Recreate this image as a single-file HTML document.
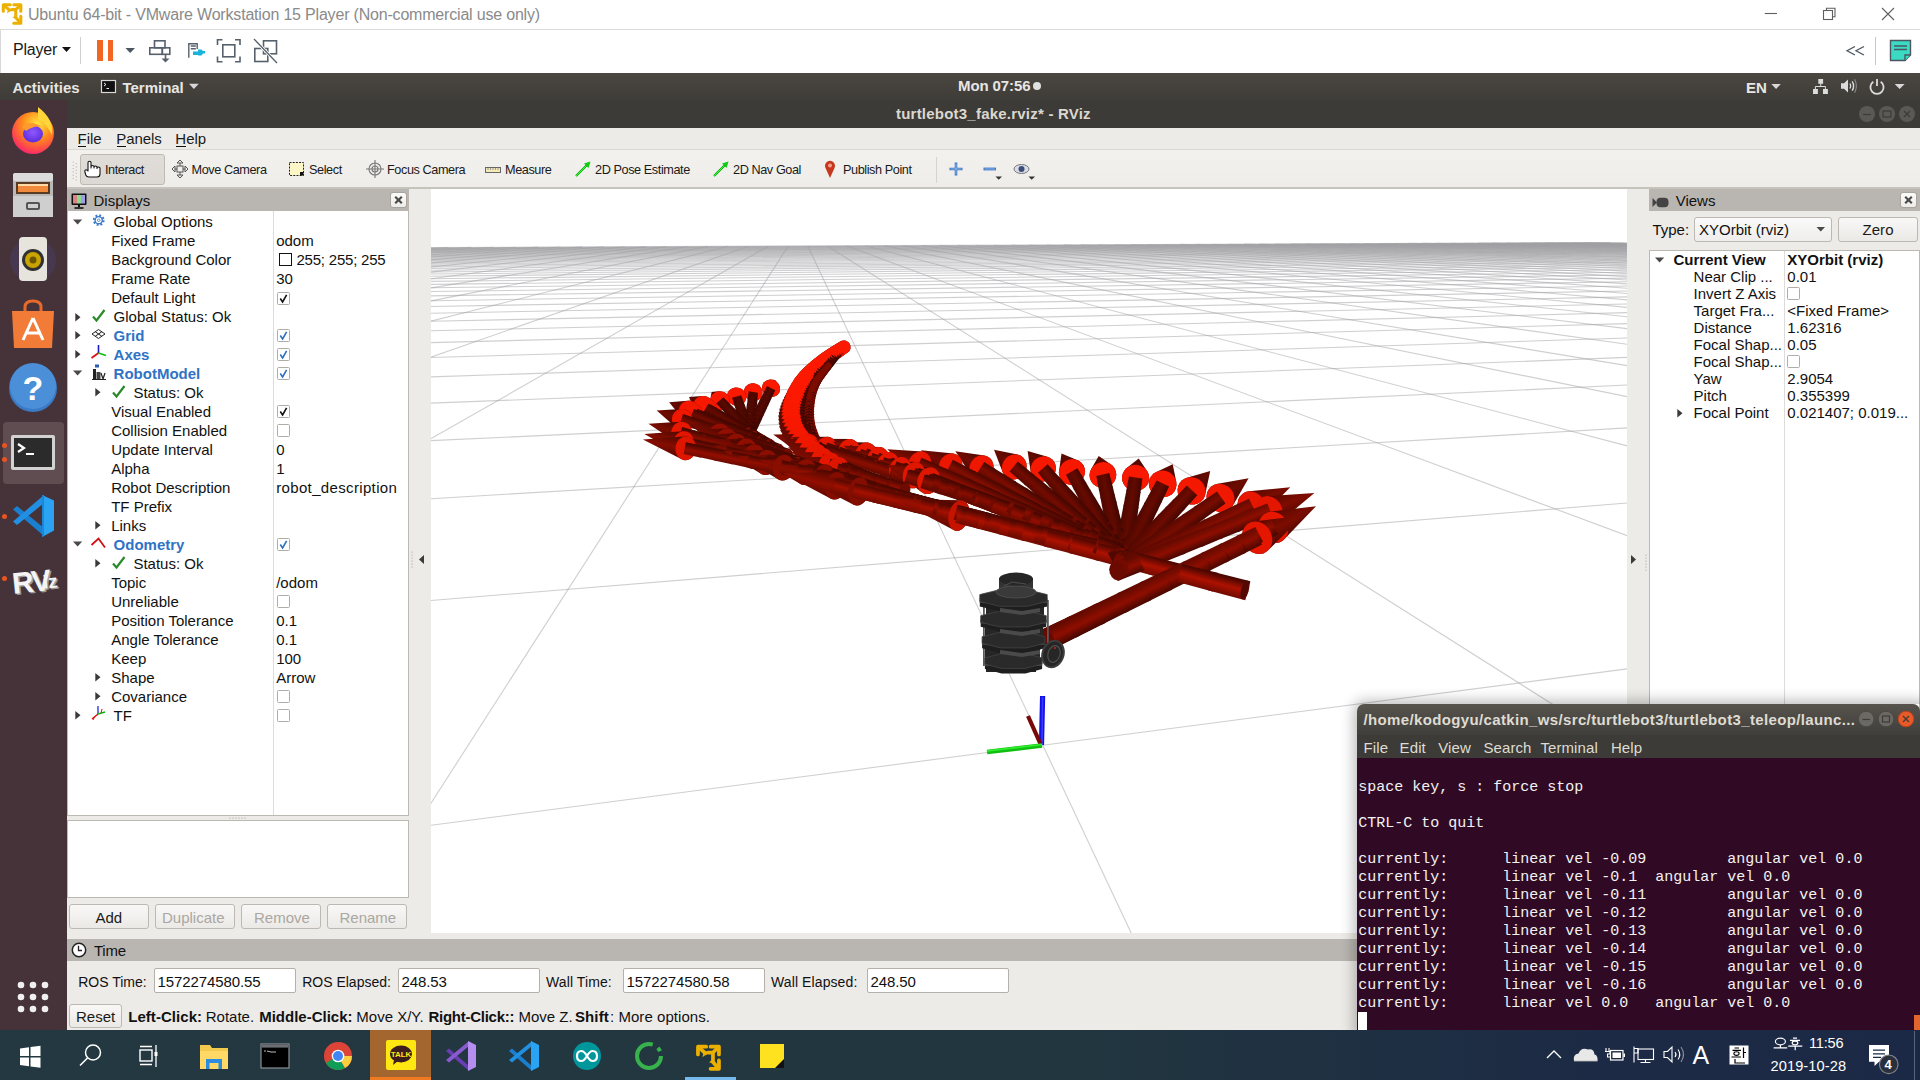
<!DOCTYPE html><html><head><meta charset='utf-8'><style>
*{margin:0;padding:0;box-sizing:border-box}
html,body{width:1920px;height:1080px;overflow:hidden;background:#fff;position:relative;font-family:'Liberation Sans',sans-serif}
.t{position:absolute;white-space:pre;line-height:1}
.r{position:absolute}
svg{position:absolute;overflow:visible}
</style></head><body>
<div class="r" style="left:0px;top:0px;width:1920px;height:30px;background:#ffffff;"></div>
<div class="r" style="left:0px;top:29px;width:1920px;height:1px;background:#dadada;"></div>
<div class="r" style="left:0px;top:30px;width:1920px;height:43px;background:#ffffff;"></div>
<div class="r" style="left:0px;top:30px;width:1px;height:43px;background:#d8d8d8;"></div>
<div class="t" style="left:28.00px;top:6.90px;font-size:16px;color:#8a8a8a;letter-spacing:-0.19px;">Ubuntu 64-bit - VMware Workstation 15 Player (Non-commercial use only)</div>
<div class="t" style="left:13.00px;top:42.40px;font-size:16px;color:#1a1a1a;letter-spacing:-0.2px;">Player</div>
<svg style="left:0px;top:0px;" width="30" height="30" viewBox="0 0 30 30"><g fill="none" stroke="#ecb100" stroke-width="3.1" stroke-linecap="round" stroke-linejoin="round">
      <path d="M3.3 11.2 V4.7 H10.2"/><path d="M13.8 4.7 H20.8 V11.2"/><path d="M20.8 16.2 V23.2 H13.8"/>
      <path d="M4.2 5.6 L9.5 10.2 M19.9 5.6 L15.8 9.6 L15.8 17.5 L19.9 22.3 M15.8 9.6 L11.5 9.6"/></g>
      <path d="M7 13.5 L8.2 8.6 L12.2 9.6 Z M12.5 17.8 L16.5 14.8 L17 19.2Z" fill="#ecb100"/></svg>
<svg style="left:1760px;top:0px;" width="160" height="30" viewBox="0 0 160 30"><g fill="none" stroke="#5f5f5f" stroke-width="1.1">
      <path d="M4.8 13.5 H17"/><rect x="63.5" y="10.5" width="9" height="9"/><path d="M66.5 10.5 V8.3 H75 V16.8 H72.5"/>
      <path d="M122 8 L134 20 M134 8 L122 20"/></g></svg>
<svg style="left:60px;top:44px;" width="14" height="10" viewBox="0 0 14 10"><path d="M2 3 H11 L6.5 8 Z" fill="#111"/></svg>
<div class="r" style="left:80px;top:37px;width:1px;height:27px;background:#d0d0d0;"></div>
<div class="r" style="left:97px;top:40px;width:6px;height:21px;background:#f26522;"></div>
<div class="r" style="left:108px;top:40px;width:5px;height:21px;background:#f26522;"></div>
<svg style="left:120px;top:44px;" width="20" height="12" viewBox="0 0 20 12"><path d="M5.5 4 H15 L10.2 9 Z" fill="#4b5661"/></svg>
<svg style="left:145px;top:36px;" width="30" height="30" viewBox="0 0 30 30"><g fill="none" stroke="#56616b" stroke-width="1.6">
      <rect x="9.5" y="4.8" width="10.5" height="7"/><rect x="4.8" y="11.8" width="12.5" height="6.5"/><rect x="17.3" y="11.8" width="7.5" height="6.5"/>
      <path d="M20.5 18.5 V25"/></g><path d="M16.5 22.5 H24.5 L20.5 26.5 Z" fill="#56616b"/></svg>
<svg style="left:183px;top:36px;" width="30" height="30" viewBox="0 0 30 30"><g fill="none" stroke="#56616b" stroke-width="1.4"><path d="M5.8 21.8 V7.8 H14.2 V13"/>
      <path d="M7.8 10 H12.8 M7.8 12.8 H12.8"/></g>
      <path d="M10 15.5 H15 V13.5 H18.5 L20 15 H22 V17.5 H20 L18.5 19.5 H15 V17.5 H10 Z M10 17 H15 V19 H10Z" fill="#1ab3d9"/></svg>
<svg style="left:213px;top:36px;" width="32" height="30" viewBox="0 0 32 30"><g fill="none" stroke="#56616b" stroke-width="1.6">
      <path d="M4.5 9 V3.8 H9.5 M22 3.8 H27 V9 M27 20.5 V25.8 H22 M9.5 25.8 H4.5 V20.5"/>
      <rect x="9.8" y="8.8" width="12" height="12"/></g></svg>
<svg style="left:250px;top:36px;" width="32" height="30" viewBox="0 0 32 30"><g fill="none" stroke="#56616b" stroke-width="1.6">
      <rect x="13.5" y="4.8" width="13" height="13"/><rect x="4.8" y="12.5" width="13" height="13"/></g>
      <path d="M4 3 L27 27" stroke="#ffffff" stroke-width="3"/><path d="M4 3 L27 27" stroke="#56616b" stroke-width="1.3"/></svg>
<svg style="left:1840px;top:40px;" width="30" height="20" viewBox="0 0 30 20"><g fill="none" stroke="#4b5661" stroke-width="1.3"><path d="M15 6.5 L7 10.8 L15 15 M24 6.5 L16 10.8 L24 15"/></g></svg>
<div class="r" style="left:1875px;top:37px;width:1px;height:28px;background:#c8c8c8;"></div>
<svg style="left:1886px;top:36px;" width="30" height="30" viewBox="0 0 30 30"><path d="M4.5 4.5 H24.5 V19 L19 24.5 H4.5 Z" fill="#3adbc2" stroke="#4b5661" stroke-width="1.4"/>
      <path d="M19 24.5 V19 H24.5" fill="#3adbc2" stroke="#4b5661" stroke-width="1.4"/>
      <path d="M8 10 H21 M8 13.5 H21" stroke="#4b5661" stroke-width="1.3"/></svg>
<div class="r" style="left:0px;top:73px;width:1920px;height:27px;background:linear-gradient(#4a4640,#3f3d39);"></div>
<div class="t" style="left:12.50px;top:79.55px;font-size:15px;color:#e8e6e3;font-weight:bold;letter-spacing:0.05px;">Activities</div>
<div class="t" style="left:122.50px;top:79.55px;font-size:15px;color:#e8e6e3;font-weight:bold;letter-spacing:-0.02px;">Terminal</div>
<div class="t" style="left:958.00px;top:78.05px;font-size:15px;color:#e8e6e3;font-weight:bold;letter-spacing:-0.1px;">Mon 07:56</div>
<div class="t" style="left:1746.00px;top:79.55px;font-size:15px;color:#e8e6e3;font-weight:bold;">EN</div>
<svg style="left:96px;top:76px;" width="26" height="22" viewBox="0 0 26 22"><rect x="5.5" y="4.5" width="14" height="12" fill="#111" stroke="#d8d8d8" stroke-width="1.2"/>
       <path d="M8 7 L10 8.5 L8 10 M10.5 12.5 H13" stroke="#eee" stroke-width="1" fill="none"/></svg>
<svg style="left:186px;top:80px;" width="16" height="12" viewBox="0 0 16 12"><path d="M3 3.8 H12.8 L7.9 9 Z" fill="#d8d8d8"/></svg>
<div class="r" style="left:1033px;top:82px;width:8px;height:8px;border-radius:4px;background:#e0e0e0"></div>
<svg style="left:1768px;top:80px;" width="16" height="12" viewBox="0 0 16 12"><path d="M3.4 4 H12.8 L8.1 9 Z" fill="#d8d8d8"/></svg>
<svg style="left:1810px;top:76px;" width="22" height="22" viewBox="0 0 22 22"><g fill="#dcdcdc"><rect x="8.3" y="3" width="4.8" height="4.8"/><rect x="3" y="13" width="4.9" height="5"/><rect x="13" y="13" width="4.9" height="5"/></g>
       <path d="M10.7 7.5 V10.5 M5.4 13 V10.5 H15.4 V13" stroke="#dcdcdc" stroke-width="1" fill="none"/></svg>
<svg style="left:1838px;top:76px;" width="22" height="22" viewBox="0 0 22 22"><path d="M3 7.3 H6 L10 3.5 V16.5 L6 12.8 H3Z" fill="#dcdcdc"/>
       <path d="M12 7.5 Q13.5 10 12 12.5 M14.2 5.3 Q17 10 14.2 14.7" stroke="#dcdcdc" stroke-width="1.4" fill="none"/>
       <path d="M16.6 3.3 Q20.2 10 16.6 16.7" stroke="#888" stroke-width="1.2" fill="none"/></svg>
<svg style="left:1866px;top:76px;" width="22" height="22" viewBox="0 0 22 22"><path d="M7.3 5.8 A6.6 6.6 0 1 0 14.7 5.8" stroke="#dcdcdc" stroke-width="1.8" fill="none"/><path d="M11 3 V10" stroke="#dcdcdc" stroke-width="1.8"/></svg>
<svg style="left:1890px;top:80px;" width="16" height="12" viewBox="0 0 16 12"><path d="M4.7 4 H14.6 L9.6 9 Z" fill="#d8d8d8"/></svg>
<div class="r" style="left:67px;top:100px;width:1853px;height:28px;background:#3c3b37;"></div>
<div class="r" style="left:0px;top:100px;width:67px;height:930px;background:#46333a;"></div>
<div class="t" style="left:896.00px;top:106.25px;font-size:15px;color:#dcd8cf;font-weight:bold;letter-spacing:0.22px;">turtlebot3_fake.rviz* - RViz</div>
<svg style="left:1855px;top:103px;" width="65" height="24" viewBox="0 0 65 24"><g fill="#5b5955"><circle cx="12" cy="11" r="8"/><circle cx="32" cy="11" r="8"/><circle cx="52" cy="11" r="8"/></g>
      <g stroke="#3c3b37" stroke-width="1.2" fill="none"><path d="M8 11.5 H16"/><rect x="28" y="8" width="8" height="6"/><path d="M49 8 L55 14 M55 8 L49 14"/></g></svg>
<div class="r" style="left:3px;top:422px;width:61px;height:62px;border-radius:4px;background:#5f4d52"></div>
<svg style="left:8px;top:105px;" width="52" height="52" viewBox="0 0 52 52"><defs><radialGradient id="ffg" cx="0.6" cy="0.3" r="0.8"><stop offset="0" stop-color="#ffe940"/><stop offset="0.45" stop-color="#ff8a1c"/><stop offset="0.8" stop-color="#ff3d54"/><stop offset="1" stop-color="#e31587"/></radialGradient>
      <radialGradient id="ffb" cx="0.5" cy="0.4" r="0.6"><stop offset="0" stop-color="#9059ff"/><stop offset="1" stop-color="#5b2bdc"/></radialGradient></defs>
      <circle cx="25" cy="28" r="21" fill="url(#ffg)"/><path d="M30 2 Q46 14 44 30 Q38 18 30 14 Z" fill="#ffd53a"/>
      <ellipse cx="25" cy="29" rx="10" ry="8.5" fill="url(#ffb)"/><path d="M14 22 Q22 14 34 22 Q26 20 18 26Z" fill="#ff9a2e"/></svg>
<svg style="left:10px;top:170px;" width="46" height="52" viewBox="0 0 46 52"><rect x="3" y="3" width="40" height="44" rx="3" fill="#b9b9b9"/><rect x="3" y="3" width="40" height="8" rx="2" fill="#dcdcdc"/>
      <rect x="6" y="12" width="34" height="12" fill="#5a3a20"/><rect x="8" y="14" width="30" height="8" fill="#f08a3c"/><rect x="8" y="14" width="30" height="2" fill="#ffd9a8"/>
      <rect x="3" y="26" width="40" height="21" fill="#cfcfcf"/><rect x="17" y="33" width="12" height="6" rx="1" fill="none" stroke="#555" stroke-width="2"/></svg>
<svg style="left:8px;top:234px;" width="50" height="52" viewBox="0 0 50 52"><ellipse cx="25" cy="26" rx="23" ry="22" fill="#4a3f6a" opacity="0.45"/><rect x="11" y="3" width="28" height="44" rx="4" fill="#e6e4dc"/>
      <circle cx="25" cy="26" r="11" fill="#303030"/><circle cx="25" cy="26" r="8" fill="#c9a400"/><circle cx="25" cy="26" r="3.5" fill="#6a5500"/></svg>
<svg style="left:8px;top:298px;" width="50" height="54" viewBox="0 0 50 54"><path d="M17 14 V9 Q17 3 25 3 Q33 3 33 9 V14" stroke="#e86a2a" stroke-width="3" fill="none"/>
      <path d="M4 13 H46 L44 50 H6 Z" fill="#f27b37"/><path d="M25 20 L15 42 M25 20 L35 42 M17 35 H33" stroke="#fff" stroke-width="3" fill="none"/></svg>
<svg style="left:5px;top:358px;" width="56" height="56" viewBox="0 0 56 56"><circle cx="28" cy="30" r="24" fill="#3b7ac4"/><circle cx="28" cy="28" r="23" fill="#4a8fd8"/>
      <text x="28" y="42" font-family="Liberation Sans" font-weight="bold" font-size="34" fill="#fff" text-anchor="middle">?</text></svg>
<svg style="left:8px;top:430px;" width="50" height="46" viewBox="0 0 50 46"><rect x="3" y="5" width="44" height="35" rx="2" fill="#d2d2d2"/><rect x="6" y="8" width="38" height="29" fill="#2b2b2b"/>
      <path d="M10 14 L16 18 L10 22" stroke="#fff" stroke-width="2.2" fill="none"/><path d="M18 24 H26" stroke="#fff" stroke-width="2"/></svg>
<div class="r" style="left:2px;top:443px;width:5px;height:5px;border-radius:3px;background:#e95420"></div>
<div class="r" style="left:2px;top:457px;width:5px;height:5px;border-radius:3px;background:#e95420"></div>
<svg style="left:10px;top:492px;" width="48" height="48" viewBox="0 0 48 48"><path d="M3 17.5 L7 14 L34 36 V44 Z" fill="#1a7fd0"/><path d="M3 29.5 L7 33 L34 11 V3 Z" fill="#2290e2"/>
      <path d="M32 3 L44 8.5 V38.5 L32 45 Z" fill="#2aa3f2"/><path d="M32 3 V45 L34 44 V4Z" fill="#1c86d8"/></svg>
<div class="r" style="left:2px;top:514px;width:5px;height:5px;border-radius:3px;background:#e95420"></div>
<svg style="left:8px;top:560px;" width="56" height="40" viewBox="0 0 56 40"><g font-family="Liberation Sans" font-weight="bold" transform="rotate(-6 28 20)">
      <text x="5.5" y="33" font-size="30" fill="#9a9a9a" letter-spacing="-2">RV</text><text x="36" y="31" font-size="19" fill="#9a9a9a">iz</text>
      <text x="4" y="31.5" font-size="30" fill="#f4f4f4" letter-spacing="-2">RV</text><text x="34.5" y="29.5" font-size="19" fill="#f4f4f4">iz</text></g></svg>
<div class="r" style="left:2px;top:576px;width:5px;height:5px;border-radius:3px;background:#e95420"></div>
<svg style="left:0px;top:0px;pointer-events:none;" width="67" height="1030" viewBox="0 0 67 1030"><circle cx="21" cy="985" r="3.3" fill="#f0f0f0"/><circle cx="33" cy="985" r="3.3" fill="#f0f0f0"/><circle cx="45" cy="985" r="3.3" fill="#f0f0f0"/><circle cx="21" cy="997" r="3.3" fill="#f0f0f0"/><circle cx="33" cy="997" r="3.3" fill="#f0f0f0"/><circle cx="45" cy="997" r="3.3" fill="#f0f0f0"/><circle cx="21" cy="1009" r="3.3" fill="#f0f0f0"/><circle cx="33" cy="1009" r="3.3" fill="#f0f0f0"/><circle cx="45" cy="1009" r="3.3" fill="#f0f0f0"/></svg>
<div class="r" style="left:67px;top:128px;width:1853px;height:21px;background:#edebe8;"></div>
<div class="r" style="left:67px;top:149px;width:1853px;height:1px;background:#dad6d1;"></div>
<div class="r" style="left:67px;top:150px;width:1853px;height:38px;background:linear-gradient(#f3f1ee,#efedea);"></div>
<div class="r" style="left:67px;top:187px;width:1853px;height:2px;background:#c6c2bc;"></div>
<div class="r" style="left:67px;top:189px;width:1853px;height:841px;background:#edebe8;"></div>
<div class="t" style="left:77.50px;top:130.85px;font-size:15px;color:#1a1a1a;">File</div>
<div class="t" style="left:116.30px;top:130.85px;font-size:15px;color:#1a1a1a;letter-spacing:-0.1px;">Panels</div>
<div class="t" style="left:175.30px;top:130.85px;font-size:15px;color:#1a1a1a;">Help</div>
<div class="r" style="left:77.5px;top:145.5px;width:8px;height:1.5px;background:#111;"></div>
<div class="r" style="left:116.5px;top:145.5px;width:9px;height:1.5px;background:#111;"></div>
<div class="r" style="left:175.5px;top:145.5px;width:10px;height:1.5px;background:#111;"></div>
<svg style="left:72px;top:160px;" width="6" height="22" viewBox="0 0 6 22"><circle cx="1.2" cy="2.0" r="0.6" fill="#b0aca6"/><circle cx="4.2" cy="3.6" r="0.6" fill="#b0aca6"/><circle cx="1.2" cy="5.3" r="0.6" fill="#b0aca6"/><circle cx="4.2" cy="6.9" r="0.6" fill="#b0aca6"/><circle cx="1.2" cy="8.6" r="0.6" fill="#b0aca6"/><circle cx="4.2" cy="10.2" r="0.6" fill="#b0aca6"/><circle cx="1.2" cy="11.899999999999999" r="0.6" fill="#b0aca6"/><circle cx="4.2" cy="13.499999999999998" r="0.6" fill="#b0aca6"/><circle cx="1.2" cy="15.2" r="0.6" fill="#b0aca6"/><circle cx="4.2" cy="16.8" r="0.6" fill="#b0aca6"/><circle cx="1.2" cy="18.5" r="0.6" fill="#b0aca6"/><circle cx="4.2" cy="20.1" r="0.6" fill="#b0aca6"/></svg>
<div class="r" style="left:80px;top:154px;width:85px;height:31px;border:1px solid #bdb9b3;border-radius:3px;background:linear-gradient(#e0ddd9,#dcd9d5)"></div>
<div class="t" style="left:105.00px;top:163.61px;font-size:12.7px;color:#1a1a1a;letter-spacing:-0.42px;">Interact</div>
<div class="t" style="left:191.50px;top:163.61px;font-size:12.7px;color:#1a1a1a;letter-spacing:-0.42px;">Move Camera</div>
<div class="t" style="left:309.00px;top:163.61px;font-size:12.7px;color:#1a1a1a;letter-spacing:-0.42px;">Select</div>
<div class="t" style="left:387.00px;top:163.61px;font-size:12.7px;color:#1a1a1a;letter-spacing:-0.42px;">Focus Camera</div>
<div class="t" style="left:505.00px;top:163.61px;font-size:12.7px;color:#1a1a1a;letter-spacing:-0.42px;">Measure</div>
<div class="t" style="left:595.00px;top:163.61px;font-size:12.7px;color:#1a1a1a;letter-spacing:-0.42px;">2D Pose Estimate</div>
<div class="t" style="left:733.00px;top:163.61px;font-size:12.7px;color:#1a1a1a;letter-spacing:-0.42px;">2D Nav Goal</div>
<div class="t" style="left:843.00px;top:163.61px;font-size:12.7px;color:#1a1a1a;letter-spacing:-0.42px;">Publish Point</div>
<svg style="left:80px;top:155px;" width="24" height="26" viewBox="0 0 24 26"><path d="M8 15 V7.5 Q8 6.3 9.5 6.3 Q11 6.3 11 7.5 V13 V11.5 Q11 10.5 12.5 10.5 Q14 10.5 14 11.5 V13 V12 Q14 11 15.5 11 Q17 11 17 12 V13.5 V13 Q17 12 18.5 12 Q20 12 20 13 V19 Q20 22 17 22 H9 Q6.5 22 5.8 20 L4.8 16.5 Q4.6 15 6 14.8 Q7.5 14.8 8 16 Z" fill="#fff" stroke="#111" stroke-width="1.1" stroke-linejoin="round"/></svg>
<svg style="left:170px;top:158px;" width="20" height="22" viewBox="0 0 20 22"><g fill="none" stroke="#555" stroke-width="1"><path d="M10 2 L13 5 H7 Z M10 20 L13 17 H7 Z M2 11 L5 8 V14 Z M18 11 L15 8 V14 Z"/><rect x="7" y="8" width="6" height="6"/><path d="M10 5 V8 M10 14 V17 M5 11 H7 M13 11 H15"/></g></svg>
<svg style="left:286px;top:158px;" width="22" height="22" viewBox="0 0 22 22"><rect x="3.5" y="4.5" width="14" height="13" fill="#fdf7c8" stroke="#222" stroke-width="1" stroke-dasharray="2 1.2"/><rect x="14" y="14" width="3.5" height="3.5" fill="#111"/></svg>
<svg style="left:364px;top:157px;" width="22" height="24" viewBox="0 0 22 24"><g fill="none" stroke="#777" stroke-width="1.1"><circle cx="11" cy="12" r="6"/><circle cx="11" cy="12" r="3"/><path d="M11 3 V21 M2 12 H20"/></g></svg>
<svg style="left:482px;top:160px;" width="22" height="20" viewBox="0 0 22 20"><rect x="3.5" y="7.5" width="15" height="5" fill="#f4eab8" stroke="#666" stroke-width="1"/><path d="M6 8 V10 M8.5 8 V10 M11 8 V10 M13.5 8 V10 M16 8 V10" stroke="#888" stroke-width="0.8"/></svg>
<svg style="left:572px;top:158px;" width="22" height="22" viewBox="0 0 22 22"><path d="M4 18 L17 5" stroke="#0a0" stroke-width="2.2"/><path d="M18.5 3.5 L12 5.5 L16.5 10 Z" fill="#1c1"/><path d="M4 18 L14 8" stroke="#3f3" stroke-width="1"/></svg>
<svg style="left:710px;top:158px;" width="22" height="22" viewBox="0 0 22 22"><path d="M4 18 L17 5" stroke="#0a0" stroke-width="2.2"/><path d="M18.5 3.5 L12 5.5 L16.5 10 Z" fill="#1c1"/><path d="M4 18 L14 8" stroke="#3f3" stroke-width="1"/></svg>
<svg style="left:822px;top:158px;" width="18" height="22" viewBox="0 0 18 22"><path d="M8 20 L3.5 10 A5 5 0 1 1 12.5 10 Z" fill="#c6381e"/><circle cx="8" cy="7.5" r="2" fill="#f3a08f"/></svg>
<div class="r" style="left:936px;top:157px;width:1px;height:26px;background:#d6d2cc;"></div>
<svg style="left:945px;top:158px;" width="22" height="22" viewBox="0 0 22 22"><path d="M11 4.5 V17.5 M4.5 11 H17.5" stroke="#3a74c4" stroke-width="2.6"/><path d="M11 5.5 V16.5 M5.5 11 H16.5" stroke="#9cc0ec" stroke-width="0.9"/></svg>
<svg style="left:978px;top:158px;" width="26" height="24" viewBox="0 0 26 24"><path d="M5.5 11 H18" stroke="#3a74c4" stroke-width="2.8"/><path d="M6.5 11 H17" stroke="#9cc0ec" stroke-width="0.9"/><path d="M17.5 18.5 H24 L20.7 21.7Z" fill="#333"/></svg>
<svg style="left:1010px;top:158px;" width="28" height="24" viewBox="0 0 28 24"><ellipse cx="11.5" cy="11" rx="7.5" ry="4.5" fill="#d9dde8" stroke="#777" stroke-width="1"/><circle cx="11.5" cy="11" r="3" fill="#3d4d7a"/><path d="M18.5 18.5 H25 L21.7 21.7Z" fill="#333"/></svg>
<div class="r" style="left:67px;top:189px;width:342px;height:22px;background:#b9b5b1;"></div>
<svg style="left:69px;top:191px;" width="22" height="20" viewBox="0 0 22 20"><rect x="2.5" y="2.5" width="15" height="11.5" rx="1" fill="#111"/>
      <rect x="4" y="4" width="4" height="8.5" fill="#d98383"/><rect x="8" y="4" width="4" height="8.5" fill="#8fd88f"/><rect x="12" y="4" width="4" height="8.5" fill="#9f9fe6"/>
      <path d="M10 14 V16" stroke="#111" stroke-width="2"/><path d="M5.5 17 H14.5" stroke="#111" stroke-width="1.6"/></svg>
<div class="t" style="left:93.50px;top:192.95px;font-size:15px;color:#111;">Displays</div>
<div class="r" style="left:390px;top:192px;width:17px;height:16px;border:1px solid #a9a49e;border-radius:3px;background:linear-gradient(#fbfbfa,#eeece9)"></div>
<svg style="left:390px;top:192px;" width="17" height="16" viewBox="0 0 17 16"><path d="M5.2 4.8 L11.8 11.2 M11.8 4.8 L5.2 11.2" stroke="#4a4a4a" stroke-width="2.2"/></svg>
<div class="r" style="left:67px;top:211px;width:342px;height:605px;background:#fff;border:1px solid #bcb8b2;border-top:none"></div>
<div class="r" style="left:273px;top:211px;width:1px;height:604px;background:#dcdcdc;"></div>
<svg style="left:73px;top:218.6px;" width="10" height="7" viewBox="0 0 10 7"><path d="M0 0.5 H9.2 L4.6 5.5Z" fill="#4a4a4a"/></svg>
<div class="t" style="left:113.60px;top:214.15px;font-size:15px;color:#111;">Global Options</div>
<svg style="left:91px;top:213px;" width="16" height="16" viewBox="0 0 16 16"><circle cx="7.7" cy="7.2" r="4.6" fill="none" stroke="#3f7ccc" stroke-width="2.6" stroke-dasharray="1.8 1.8"/><circle cx="7.7" cy="7.2" r="3.6" fill="none" stroke="#3f7ccc" stroke-width="1.4"/><circle cx="7.7" cy="7.2" r="1.3" fill="#fff" stroke="#3f7ccc" stroke-width="0.8"/></svg>
<div class="t" style="left:111.20px;top:233.13px;font-size:15px;color:#111;">Fixed Frame</div>
<div class="t" style="left:276.20px;top:233.13px;font-size:15px;color:#111;">odom</div>
<div class="t" style="left:111.20px;top:252.11px;font-size:15px;color:#111;">Background Color</div>
<div class="r" style="left:279px;top:253.06px;width:13px;height:13px;background:#111;"></div>
<div class="r" style="left:280px;top:254.06px;width:11px;height:11px;background:#fff;"></div>
<div class="t" style="left:296.50px;top:252.11px;font-size:15px;color:#111;letter-spacing:-0.22px;">255; 255; 255</div>
<div class="t" style="left:111.20px;top:271.09px;font-size:15px;color:#111;">Frame Rate</div>
<div class="t" style="left:276.20px;top:271.09px;font-size:15px;color:#111;">30</div>
<div class="t" style="left:111.20px;top:290.07px;font-size:15px;color:#111;">Default Light</div>
<div class="r" style="left:276.5px;top:291.52px;width:13px;height:13px;border:1px solid #b0aca6;border-radius:1.5px;background:#fff"></div>
<svg style="left:276.5px;top:291.52px;" width="13" height="13" viewBox="0 0 13 13"><path d="M3.3 6.5 L5.6 10 L9.6 2.8" stroke="#111" stroke-width="1.6" fill="none"/></svg>
<svg style="left:75px;top:312.5px;" width="7" height="10" viewBox="0 0 7 10"><path d="M0.3 0 L5.5 4.3 L0.3 8.6Z" fill="#3a3a3a"/></svg>
<div class="t" style="left:113.60px;top:309.05px;font-size:15px;color:#111;">Global Status: Ok</div>
<svg style="left:91px;top:307.8px;" width="16" height="16" viewBox="0 0 16 16"><path d="M2 8.5 L5.5 12.5 L13.5 2" stroke="#2a8a2a" stroke-width="2.2" fill="none"/></svg>
<svg style="left:75px;top:331.47999999999996px;" width="7" height="10" viewBox="0 0 7 10"><path d="M0.3 0 L5.5 4.3 L0.3 8.6Z" fill="#3a3a3a"/></svg>
<div class="t" style="left:113.60px;top:328.03px;font-size:15px;color:#2f73c5;font-weight:bold;">Grid</div>
<div class="r" style="left:276.5px;top:329.47999999999996px;width:13px;height:13px;border:1px solid #b0aca6;border-radius:1.5px;background:#fff"></div>
<svg style="left:276.5px;top:329.47999999999996px;" width="13" height="13" viewBox="0 0 13 13"><path d="M3.3 6.5 L5.6 10 L9.6 2.8" stroke="#2f6fbf" stroke-width="1.6" fill="none"/></svg>
<svg style="left:91px;top:326.78px;" width="16" height="14" viewBox="0 0 16 14"><path d="M7.5 2.5 L14 7 L7.5 11.5 L1 7 Z M4.3 4.8 L10.8 9.2 M10.8 4.8 L4.3 9.2" stroke="#222" stroke-width="1" fill="none"/></svg>
<svg style="left:75px;top:350.46px;" width="7" height="10" viewBox="0 0 7 10"><path d="M0.3 0 L5.5 4.3 L0.3 8.6Z" fill="#3a3a3a"/></svg>
<div class="t" style="left:113.60px;top:347.01px;font-size:15px;color:#2f73c5;font-weight:bold;">Axes</div>
<div class="r" style="left:276.5px;top:348.46px;width:13px;height:13px;border:1px solid #b0aca6;border-radius:1.5px;background:#fff"></div>
<svg style="left:276.5px;top:348.46px;" width="13" height="13" viewBox="0 0 13 13"><path d="M3.3 6.5 L5.6 10 L9.6 2.8" stroke="#2f6fbf" stroke-width="1.6" fill="none"/></svg>
<svg style="left:90px;top:343.76px;" width="18" height="18" viewBox="0 0 18 18"><path d="M8.5 9 V1" stroke="#1a1acc" stroke-width="1.6"/><path d="M8.5 9 L1.5 14" stroke="#e01010" stroke-width="1.8"/><path d="M8.5 9 L16 11.5" stroke="#10c010" stroke-width="1.8"/></svg>
<svg style="left:73px;top:370.44px;" width="10" height="7" viewBox="0 0 10 7"><path d="M0 0.5 H9.2 L4.6 5.5Z" fill="#4a4a4a"/></svg>
<div class="t" style="left:113.60px;top:365.99px;font-size:15px;color:#2f73c5;font-weight:bold;">RobotModel</div>
<div class="r" style="left:276.5px;top:367.44px;width:13px;height:13px;border:1px solid #b0aca6;border-radius:1.5px;background:#fff"></div>
<svg style="left:276.5px;top:367.44px;" width="13" height="13" viewBox="0 0 13 13"><path d="M3.3 6.5 L5.6 10 L9.6 2.8" stroke="#2f6fbf" stroke-width="1.6" fill="none"/></svg>
<svg style="left:90px;top:362.74px;" width="18" height="18" viewBox="0 0 18 18"><rect x="3" y="6" width="3" height="10" fill="#222"/><rect x="6.5" y="9" width="4" height="7" fill="#444"/><path d="M11 10 L13 16 M15 10 L13 16" stroke="#222" stroke-width="1.2"/><rect x="5" y="1.5" width="4" height="3" fill="#2a5db0"/><path d="M2 16.5 H16" stroke="#222" stroke-width="1"/></svg>
<svg style="left:95px;top:388.42px;" width="7" height="10" viewBox="0 0 7 10"><path d="M0.3 0 L5.5 4.3 L0.3 8.6Z" fill="#3a3a3a"/></svg>
<div class="t" style="left:133.40px;top:384.97px;font-size:15px;color:#111;">Status: Ok</div>
<svg style="left:111px;top:383.72px;" width="16" height="16" viewBox="0 0 16 16"><path d="M2 8.5 L5.5 12.5 L13.5 2" stroke="#2a8a2a" stroke-width="2.2" fill="none"/></svg>
<div class="t" style="left:111.20px;top:403.95px;font-size:15px;color:#111;">Visual Enabled</div>
<div class="r" style="left:276.5px;top:405.40000000000003px;width:13px;height:13px;border:1px solid #b0aca6;border-radius:1.5px;background:#fff"></div>
<svg style="left:276.5px;top:405.40000000000003px;" width="13" height="13" viewBox="0 0 13 13"><path d="M3.3 6.5 L5.6 10 L9.6 2.8" stroke="#111" stroke-width="1.6" fill="none"/></svg>
<div class="t" style="left:111.20px;top:422.93px;font-size:15px;color:#111;">Collision Enabled</div>
<div class="r" style="left:276.5px;top:424.38px;width:13px;height:13px;border:1px solid #b0aca6;border-radius:1.5px;background:#fff"></div>
<div class="t" style="left:111.20px;top:441.91px;font-size:15px;color:#111;">Update Interval</div>
<div class="t" style="left:276.20px;top:441.91px;font-size:15px;color:#111;">0</div>
<div class="t" style="left:111.20px;top:460.89px;font-size:15px;color:#111;">Alpha</div>
<div class="t" style="left:276.20px;top:460.89px;font-size:15px;color:#111;">1</div>
<div class="t" style="left:111.20px;top:479.87px;font-size:15px;color:#111;">Robot Description</div>
<div class="t" style="left:276.20px;top:479.87px;font-size:15px;color:#111;letter-spacing:0.35px;">robot_description</div>
<div class="t" style="left:111.20px;top:498.85px;font-size:15px;color:#111;">TF Prefix</div>
<svg style="left:95px;top:521.28px;" width="7" height="10" viewBox="0 0 7 10"><path d="M0.3 0 L5.5 4.3 L0.3 8.6Z" fill="#3a3a3a"/></svg>
<div class="t" style="left:111.20px;top:517.83px;font-size:15px;color:#111;">Links</div>
<svg style="left:73px;top:541.2600000000001px;" width="10" height="7" viewBox="0 0 10 7"><path d="M0 0.5 H9.2 L4.6 5.5Z" fill="#4a4a4a"/></svg>
<div class="t" style="left:113.60px;top:536.81px;font-size:15px;color:#2f73c5;font-weight:bold;">Odometry</div>
<div class="r" style="left:276.5px;top:538.2600000000001px;width:13px;height:13px;border:1px solid #b0aca6;border-radius:1.5px;background:#fff"></div>
<svg style="left:276.5px;top:538.2600000000001px;" width="13" height="13" viewBox="0 0 13 13"><path d="M3.3 6.5 L5.6 10 L9.6 2.8" stroke="#2f6fbf" stroke-width="1.6" fill="none"/></svg>
<svg style="left:90px;top:534.5600000000001px;" width="18" height="16" viewBox="0 0 18 16"><path d="M1.5 10 L8.5 3.5 L15 12.5" stroke="#d01010" stroke-width="1.8" fill="none"/></svg>
<svg style="left:95px;top:559.2399999999999px;" width="7" height="10" viewBox="0 0 7 10"><path d="M0.3 0 L5.5 4.3 L0.3 8.6Z" fill="#3a3a3a"/></svg>
<div class="t" style="left:133.40px;top:555.79px;font-size:15px;color:#111;">Status: Ok</div>
<svg style="left:111px;top:554.54px;" width="16" height="16" viewBox="0 0 16 16"><path d="M2 8.5 L5.5 12.5 L13.5 2" stroke="#2a8a2a" stroke-width="2.2" fill="none"/></svg>
<div class="t" style="left:111.20px;top:574.77px;font-size:15px;color:#111;">Topic</div>
<div class="t" style="left:276.20px;top:574.77px;font-size:15px;color:#111;">/odom</div>
<div class="t" style="left:111.20px;top:593.75px;font-size:15px;color:#111;">Unreliable</div>
<div class="r" style="left:276.5px;top:595.2px;width:13px;height:13px;border:1px solid #b0aca6;border-radius:1.5px;background:#fff"></div>
<div class="t" style="left:111.20px;top:612.73px;font-size:15px;color:#111;">Position Tolerance</div>
<div class="t" style="left:276.20px;top:612.73px;font-size:15px;color:#111;">0.1</div>
<div class="t" style="left:111.20px;top:631.71px;font-size:15px;color:#111;">Angle Tolerance</div>
<div class="t" style="left:276.20px;top:631.71px;font-size:15px;color:#111;">0.1</div>
<div class="t" style="left:111.20px;top:650.69px;font-size:15px;color:#111;">Keep</div>
<div class="t" style="left:276.20px;top:650.69px;font-size:15px;color:#111;">100</div>
<svg style="left:95px;top:673.1199999999999px;" width="7" height="10" viewBox="0 0 7 10"><path d="M0.3 0 L5.5 4.3 L0.3 8.6Z" fill="#3a3a3a"/></svg>
<div class="t" style="left:111.20px;top:669.67px;font-size:15px;color:#111;">Shape</div>
<div class="t" style="left:276.20px;top:669.67px;font-size:15px;color:#111;">Arrow</div>
<svg style="left:95px;top:692.0999999999999px;" width="7" height="10" viewBox="0 0 7 10"><path d="M0.3 0 L5.5 4.3 L0.3 8.6Z" fill="#3a3a3a"/></svg>
<div class="t" style="left:111.20px;top:688.65px;font-size:15px;color:#111;">Covariance</div>
<div class="r" style="left:276.5px;top:690.1px;width:13px;height:13px;border:1px solid #b0aca6;border-radius:1.5px;background:#fff"></div>
<svg style="left:75px;top:711.0799999999999px;" width="7" height="10" viewBox="0 0 7 10"><path d="M0.3 0 L5.5 4.3 L0.3 8.6Z" fill="#3a3a3a"/></svg>
<div class="t" style="left:113.60px;top:707.63px;font-size:15px;color:#111;">TF</div>
<div class="r" style="left:276.5px;top:709.08px;width:13px;height:13px;border:1px solid #b0aca6;border-radius:1.5px;background:#fff"></div>
<svg style="left:90px;top:704.38px;" width="18" height="18" viewBox="0 0 18 18"><path d="M8 10 V2" stroke="#1a1acc" stroke-width="1.2"/><path d="M8 10 L2 15" stroke="#e01010" stroke-width="1.4"/><path d="M8 10 L15 8" stroke="#10b010" stroke-width="1.4"/><path d="M5 12 L3 16 M11 9 L12 5" stroke="#e01010" stroke-width="1"/></svg>
<svg style="left:410px;top:550px;" width="4" height="20" viewBox="0 0 4 20"><circle cx="2" cy="2" r="0.6" fill="#9a968f"/><circle cx="2" cy="5" r="0.6" fill="#9a968f"/><circle cx="2" cy="8" r="0.6" fill="#9a968f"/><circle cx="2" cy="11" r="0.6" fill="#9a968f"/><circle cx="2" cy="14" r="0.6" fill="#9a968f"/><circle cx="2" cy="17" r="0.6" fill="#9a968f"/></svg>
<svg style="left:228px;top:816px;" width="20" height="4" viewBox="0 0 20 4"><circle cx="2" cy="2" r="0.6" fill="#9a968f"/><circle cx="5" cy="2" r="0.6" fill="#9a968f"/><circle cx="8" cy="2" r="0.6" fill="#9a968f"/><circle cx="11" cy="2" r="0.6" fill="#9a968f"/><circle cx="14" cy="2" r="0.6" fill="#9a968f"/><circle cx="17" cy="2" r="0.6" fill="#9a968f"/></svg>
<div class="r" style="left:67px;top:820px;width:342px;height:78px;background:#fff;border:1px solid #bcb8b2"></div>
<div class="r" style="left:69px;top:904px;width:80px;height:25px;border:1px solid #bdb8b1;border-radius:3px;background:linear-gradient(#f9f8f7,#ebe9e6)"></div>
<div class="t" style="left:95.50px;top:909.75px;font-size:15px;color:#1a1a1a;">Add</div>
<div class="r" style="left:155px;top:904px;width:80px;height:25px;border:1px solid #bdb8b1;border-radius:3px;background:linear-gradient(#f9f8f7,#ebe9e6)"></div>
<div class="t" style="left:162.00px;top:909.75px;font-size:15px;color:#aaa7a2;">Duplicate</div>
<div class="r" style="left:241px;top:904px;width:80px;height:25px;border:1px solid #bdb8b1;border-radius:3px;background:linear-gradient(#f9f8f7,#ebe9e6)"></div>
<div class="t" style="left:254.00px;top:909.75px;font-size:15px;color:#aaa7a2;">Remove</div>
<div class="r" style="left:327px;top:904px;width:80px;height:25px;border:1px solid #bdb8b1;border-radius:3px;background:linear-gradient(#f9f8f7,#ebe9e6)"></div>
<div class="t" style="left:339.50px;top:909.75px;font-size:15px;color:#aaa7a2;">Rename</div>
<svg style="left:418px;top:554px;" width="8" height="12" viewBox="0 0 8 12"><path d="M6 1 L1 5.5 L6 10Z" fill="#3a3a3a"/></svg>
<svg style="left:1630px;top:554px;" width="8" height="12" viewBox="0 0 8 12"><path d="M1 1 L6 5.5 L1 10Z" fill="#3a3a3a"/></svg>
<svg style="left:1644px;top:553px;" width="4" height="20" viewBox="0 0 4 20"><circle cx="2" cy="2" r="0.6" fill="#9a968f"/><circle cx="2" cy="5" r="0.6" fill="#9a968f"/><circle cx="2" cy="8" r="0.6" fill="#9a968f"/><circle cx="2" cy="11" r="0.6" fill="#9a968f"/><circle cx="2" cy="14" r="0.6" fill="#9a968f"/><circle cx="2" cy="17" r="0.6" fill="#9a968f"/></svg>
<div class="r" style="left:1649px;top:189px;width:271px;height:22px;background:#b9b5b1;"></div>
<svg style="left:1651px;top:196px;" width="20" height="14" viewBox="0 0 20 14"><path d="M1.5 2 L6 6.5 L1.5 11Z" fill="#444"/><rect x="5.5" y="1.8" width="12" height="9.5" rx="4" fill="#444"/></svg>
<div class="t" style="left:1675.70px;top:192.95px;font-size:15px;color:#111;">Views</div>
<div class="r" style="left:1900px;top:192px;width:17px;height:16px;border:1px solid #a9a49e;border-radius:3px;background:linear-gradient(#fbfbfa,#eeece9)"></div>
<svg style="left:1900px;top:192px;" width="17" height="16" viewBox="0 0 17 16"><path d="M5.2 4.8 L11.8 11.2 M11.8 4.8 L5.2 11.2" stroke="#4a4a4a" stroke-width="2.2"/></svg>
<div class="t" style="left:1652.40px;top:221.85px;font-size:15px;color:#111;">Type:</div>
<div class="r" style="left:1694px;top:217px;width:138px;height:25px;border:1px solid #bdb8b1;border-radius:3px;background:linear-gradient(#fafafa,#eeedeb)"></div>
<div class="t" style="left:1699.00px;top:221.85px;font-size:15px;color:#111;">XYOrbit (rviz)</div>
<svg style="left:1815px;top:226px;" width="12" height="8" viewBox="0 0 12 8"><path d="M1.5 1 H10 L5.75 5.5Z" fill="#4a4a4a"/></svg>
<div class="r" style="left:1838px;top:217px;width:80px;height:25px;border:1px solid #bdb8b1;border-radius:3px;background:linear-gradient(#f9f8f7,#ebe9e6)"></div>
<div class="t" style="left:1862.40px;top:221.85px;font-size:15px;color:#1a1a1a;letter-spacing:0.1px;">Zero</div>
<div class="r" style="left:1649px;top:250px;width:271px;height:470px;background:#fff;border:1px solid #bcb8b2"></div>
<div class="r" style="left:1784px;top:251px;width:1px;height:470px;background:#dcdcdc;"></div>
<svg style="left:1655px;top:257.3px;" width="10" height="7" viewBox="0 0 10 7"><path d="M0 0.5 H9.2 L4.6 5.5Z" fill="#4a4a4a"/></svg>
<div class="t" style="left:1673.50px;top:251.75px;font-size:15px;color:#111;font-weight:bold;">Current View</div>
<div class="t" style="left:1787.30px;top:251.75px;font-size:15px;color:#111;font-weight:bold;">XYOrbit (rviz)</div>
<div class="t" style="left:1693.60px;top:268.73px;font-size:15px;color:#111;">Near Clip ...</div>
<div class="t" style="left:1787.30px;top:268.73px;font-size:15px;color:#111;">0.01</div>
<div class="t" style="left:1693.60px;top:285.71px;font-size:15px;color:#111;">Invert Z Axis</div>
<div class="r" style="left:1787.3px;top:286.85999999999996px;width:13px;height:13px;border:1px solid #b0aca6;border-radius:1.5px;background:#fff"></div>
<div class="t" style="left:1693.60px;top:302.69px;font-size:15px;color:#111;">Target Fra...</div>
<div class="t" style="left:1787.30px;top:302.69px;font-size:15px;color:#111;">&lt;Fixed Frame&gt;</div>
<div class="t" style="left:1693.60px;top:319.67px;font-size:15px;color:#111;">Distance</div>
<div class="t" style="left:1787.30px;top:319.67px;font-size:15px;color:#111;">1.62316</div>
<div class="t" style="left:1693.60px;top:336.65px;font-size:15px;color:#111;">Focal Shap...</div>
<div class="t" style="left:1787.30px;top:336.65px;font-size:15px;color:#111;">0.05</div>
<div class="t" style="left:1693.60px;top:353.63px;font-size:15px;color:#111;">Focal Shap...</div>
<div class="r" style="left:1787.3px;top:354.78px;width:13px;height:13px;border:1px solid #b0aca6;border-radius:1.5px;background:#fff"></div>
<div class="t" style="left:1693.60px;top:370.61px;font-size:15px;color:#111;">Yaw</div>
<div class="t" style="left:1787.30px;top:370.61px;font-size:15px;color:#111;">2.9054</div>
<div class="t" style="left:1693.60px;top:387.59px;font-size:15px;color:#111;">Pitch</div>
<div class="t" style="left:1787.30px;top:387.59px;font-size:15px;color:#111;">0.355399</div>
<svg style="left:1677px;top:408.71999999999997px;" width="7" height="10" viewBox="0 0 7 10"><path d="M0.3 0 L5.5 4.3 L0.3 8.6Z" fill="#3a3a3a"/></svg>
<div class="t" style="left:1693.60px;top:404.57px;font-size:15px;color:#111;">Focal Point</div>
<div class="t" style="left:1787.30px;top:404.57px;font-size:15px;color:#111;">0.021407; 0.019...</div>
<div class="r" style="left:67px;top:939px;width:1853px;height:22px;background:#b9b5b1;"></div>
<svg style="left:70px;top:941px;" width="18" height="18" viewBox="0 0 18 18"><circle cx="9" cy="9" r="6.7" fill="#fff" stroke="#222" stroke-width="1.5"/><path d="M8.5 4.8 V9.5 H12" stroke="#222" stroke-width="1.3" fill="none"/></svg>
<div class="t" style="left:93.90px;top:943.25px;font-size:15px;color:#111;letter-spacing:-0.15px;">Time</div>
<div class="t" style="left:78.20px;top:974.90px;font-size:14px;color:#111;">ROS Time:</div>
<div class="r" style="left:154px;top:968px;width:142px;height:25px;border:1px solid #b5b0a9;border-radius:2px;background:#fff"></div>
<div class="t" style="left:157.40px;top:973.75px;font-size:15px;color:#111;letter-spacing:-0.08px;">1572274580.55</div>
<div class="t" style="left:302.20px;top:974.90px;font-size:14px;color:#111;">ROS Elapsed:</div>
<div class="r" style="left:398px;top:968px;width:142px;height:25px;border:1px solid #b5b0a9;border-radius:2px;background:#fff"></div>
<div class="t" style="left:401.40px;top:973.75px;font-size:15px;color:#111;letter-spacing:-0.08px;">248.53</div>
<div class="t" style="left:546.00px;top:974.90px;font-size:14px;color:#111;letter-spacing:0.1px;">Wall Time:</div>
<div class="r" style="left:623px;top:968px;width:142px;height:25px;border:1px solid #b5b0a9;border-radius:2px;background:#fff"></div>
<div class="t" style="left:626.40px;top:973.75px;font-size:15px;color:#111;letter-spacing:-0.08px;">1572274580.58</div>
<div class="t" style="left:771.00px;top:974.90px;font-size:14px;color:#111;letter-spacing:0.1px;">Wall Elapsed:</div>
<div class="r" style="left:867px;top:968px;width:142px;height:25px;border:1px solid #b5b0a9;border-radius:2px;background:#fff"></div>
<div class="t" style="left:870.40px;top:973.75px;font-size:15px;color:#111;letter-spacing:-0.08px;">248.50</div>
<div class="r" style="left:69px;top:1004px;width:53px;height:24px;border:1px solid #bdb8b1;border-radius:3px;background:linear-gradient(#f9f8f7,#ebe9e6)"></div>
<div class="t" style="left:76.00px;top:1008.95px;font-size:15px;color:#1a1a1a;">Reset</div>
<div class="t" style="left:128.20px;top:1008.95px;font-size:15px;color:#111;font-weight:bold;letter-spacing:0.05px;">Left-Click:</div>
<div class="t" style="left:201.60px;top:1008.95px;font-size:15px;color:#111;"> Rotate. </div>
<div class="t" style="left:259.20px;top:1008.95px;font-size:15px;color:#111;font-weight:bold;">Middle-Click:</div>
<div class="t" style="left:352.20px;top:1008.95px;font-size:15px;color:#111;"> Move X/Y. </div>
<div class="t" style="left:428.50px;top:1008.95px;font-size:15px;color:#111;font-weight:bold;letter-spacing:-0.27px;">Right-Click::</div>
<div class="t" style="left:514.30px;top:1008.95px;font-size:15px;color:#111;"> Move Z. </div>
<div class="t" style="left:575.00px;top:1008.95px;font-size:15px;color:#111;font-weight:bold;letter-spacing:0.1px;">Shift</div>
<div class="t" style="left:610.00px;top:1008.95px;font-size:15px;color:#111;letter-spacing:0.05px;">: More options.</div>
<div class="r" style="left:431px;top:189px;width:1196px;height:744px;background:#fff;overflow:hidden"><svg style="left:0;top:0" width="1196" height="744" viewBox="0 0 1196 744"><g stroke="#a0a0a4" stroke-opacity="0.5" stroke-width="1.1" fill="none" transform="translate(0.5 0.6)"><path d="M928663.9 16598.8L1166.3 53.0"/><path d="M910253.8 16598.8L1153.4 53.1"/><path d="M891843.8 16598.8L1140.5 53.1"/><path d="M873433.8 16598.8L1127.4 53.2"/><path d="M855023.8 16598.8L1114.2 53.3"/><path d="M836613.8 16598.8L1101.0 53.3"/><path d="M818203.8 16598.8L1087.6 53.4"/><path d="M799793.7 16598.8L1074.1 53.4"/><path d="M781383.7 16598.8L1060.6 53.5"/><path d="M762973.7 16598.8L1046.9 53.5"/><path d="M744563.7 16598.8L1033.1 53.6"/><path d="M726153.7 16598.8L1019.2 53.7"/><path d="M707743.7 16598.8L1005.2 53.7"/><path d="M689333.6 16598.8L991.1 53.8"/><path d="M670923.6 16598.8L976.8 53.8"/><path d="M652513.6 16598.8L962.5 53.9"/><path d="M634103.6 16598.8L948.0 54.0"/><path d="M615693.6 16598.8L933.4 54.0"/><path d="M597283.6 16598.8L918.8 54.1"/><path d="M578873.5 16598.8L903.9 54.1"/><path d="M560463.5 16598.8L889.0 54.2"/><path d="M542053.5 16598.8L873.9 54.3"/><path d="M523643.5 16598.8L858.8 54.3"/><path d="M505233.5 16598.8L843.4 54.4"/><path d="M486823.5 16598.8L828.0 54.5"/><path d="M468413.4 16598.8L812.5 54.5"/><path d="M450003.4 16598.8L796.8 54.6"/><path d="M431593.4 16598.8L780.9 54.7"/><path d="M413183.4 16598.8L765.0 54.7"/><path d="M394773.4 16598.8L748.9 54.8"/><path d="M376363.4 16598.8L732.6 54.9"/><path d="M357953.3 16598.8L716.3 54.9"/><path d="M339543.3 16598.8L699.8 55.0"/><path d="M321133.3 16598.8L683.1 55.1"/><path d="M302723.3 16598.8L666.3 55.1"/><path d="M284313.3 16598.8L649.4 55.2"/><path d="M265903.3 16598.8L632.3 55.3"/><path d="M64671.0 1185.9L872286.1 16598.8"/><path d="M247493.2 16598.8L615.0 55.4"/><path d="M28786.0 545.8L795796.1 16598.8"/><path d="M229083.2 16598.8L597.6 55.4"/><path d="M18607.3 364.2L719306.0 16598.8"/><path d="M210673.2 16598.8L580.1 55.5"/><path d="M13797.3 278.4L642815.9 16598.8"/><path d="M192263.2 16598.8L562.4 55.6"/><path d="M10994.8 228.4L566325.9 16598.8"/><path d="M173853.2 16598.8L544.5 55.6"/><path d="M9160.1 195.6L489835.8 16598.8"/><path d="M155443.2 16598.8L526.5 55.7"/><path d="M7865.6 172.6L413345.8 16598.8"/><path d="M137033.1 16598.8L508.3 55.8"/><path d="M6903.4 155.4L336855.7 16598.8"/><path d="M118623.1 16598.8L490.0 55.9"/><path d="M6160.0 142.1L260365.6 16598.8"/><path d="M100213.1 16598.8L471.5 56.0"/><path d="M5568.5 131.6L183875.6 16598.8"/><path d="M81803.1 16598.8L452.8 56.0"/><path d="M5086.6 123.0L107385.5 16598.8"/><path d="M63393.1 16598.8L433.9 56.1"/><path d="M4686.5 115.8L30895.4 16598.8"/><path d="M44983.1 16598.8L414.9 56.2"/><path d="M4348.9 109.8L-45594.6 16598.8"/><path d="M26573.0 16598.8L395.7 56.3"/><path d="M4060.3 104.7L-122084.7 16598.8"/><path d="M8163.0 16598.8L376.3 56.4"/><path d="M3810.6 100.2L-198574.7 16598.8"/><path d="M-10247.0 16598.8L356.7 56.4"/><path d="M3592.6 96.3L-275064.8 16598.8"/><path d="M-28657.0 16598.8L337.0 56.5"/><path d="M3400.6 92.9L-351554.9 16598.8"/><path d="M-47067.0 16598.8L317.1 56.6"/><path d="M3230.2 89.9L-428044.9 16598.8"/><path d="M-65477.0 16598.8L296.9 56.7"/><path d="M3077.9 87.1L-504535.0 16598.8"/><path d="M-83887.1 16598.8L276.6 56.8"/><path d="M2940.9 84.7L-581025.0 16598.8"/><path d="M-102297.1 16598.8L256.1 56.9"/><path d="M2817.2 82.5L-657515.1 16598.8"/><path d="M-120707.1 16598.8L235.4 56.9"/><path d="M2704.8 80.5L-734005.2 16598.8"/><path d="M-139117.1 16598.8L214.5 57.0"/><path d="M2602.3 78.7L-810495.2 16598.8"/><path d="M-157527.1 16598.8L193.4 57.1"/><path d="M2508.4 77.0L-886985.3 16598.8"/><path d="M-175937.1 16598.8L172.1 57.2"/><path d="M2422.0 75.4L-68842.4 1294.5"/><path d="M-194347.2 16598.8L150.6 57.3"/><path d="M2342.4 74.0L-28683.3 565.9"/><path d="M-212757.2 16598.8L128.8 57.4"/><path d="M2268.7 72.7L-18016.0 372.4"/><path d="M-231167.2 16598.8L106.9 57.5"/><path d="M2200.3 71.5L-13078.6 282.8"/><path d="M-249577.2 16598.8L84.7 57.6"/><path d="M2136.7 70.4L-10231.8 231.1"/><path d="M-267987.2 16598.8L62.3 57.7"/><path d="M2077.3 69.3L-8379.8 197.5"/><path d="M-286397.2 16598.8L39.7 57.8"/><path d="M2021.8 68.3L-7078.7 173.9"/><path d="M-304807.3 16598.8L16.8 57.9"/><path d="M1969.8 67.4L-6114.5 156.4"/><path d="M-323217.3 16598.8L-6.2 58.0"/><path d="M1920.9 66.5L-5371.4 142.9"/><path d="M-341627.3 16598.8L-29.5 58.1"/><path d="M1875.0 65.7L-4781.1 132.2"/><path d="M-360037.3 16598.8L-53.1 58.2"/><path d="M1831.7 64.9L-4300.9 123.5"/><path d="M-378447.3 16598.8L-76.9 58.3"/><path d="M1790.8 64.2L-3902.7 116.3"/><path d="M-396857.3 16598.8L-100.9 58.4"/><path d="M1752.1 63.5L-3567.0 110.2"/><path d="M-415267.4 16598.8L-125.2 58.5"/><path d="M1715.5 62.8L-3280.3 105.0"/><path d="M-433677.4 16598.8L-149.8 58.6"/><path d="M1680.8 62.2L-3032.5 100.5"/><path d="M-452087.4 16598.8L-174.6 58.7"/><path d="M1647.8 61.6L-2816.2 96.6"/><path d="M-470497.4 16598.8L-199.6 58.8"/><path d="M1616.4 61.1L-2625.8 93.1"/><path d="M-488907.4 16598.8L-225.0 58.9"/><path d="M1586.5 60.5L-2456.9 90.1"/><path d="M-507317.4 16598.8L-250.6 59.0"/><path d="M1558.1 60.0L-2306.0 87.3"/><path d="M-525727.5 16598.8L-276.5 59.1"/><path d="M1530.9 59.5L-2170.4 84.9"/><path d="M-544137.5 16598.8L-302.6 59.2"/><path d="M1504.9 59.1L-2047.9 82.6"/><path d="M-562547.5 16598.8L-329.1 59.3"/><path d="M1480.1 58.6L-1936.7 80.6"/><path d="M-580957.5 16598.8L-355.8 59.4"/><path d="M1456.3 58.2L-1835.3 78.8"/><path d="M-599367.5 16598.8L-382.8 59.5"/><path d="M1433.6 57.8L-1742.4 77.1"/><path d="M-617777.5 16598.8L-410.1 59.6"/><path d="M1411.7 57.4L-1657.0 75.5"/><path d="M-636187.6 16598.8L-437.8 59.8"/><path d="M1390.8 57.0L-1578.3 74.1"/><path d="M-654597.6 16598.8L-465.7 59.9"/><path d="M1370.6 56.7L-1505.5 72.8"/><path d="M-673007.6 16598.8L-493.9 60.0"/><path d="M1351.3 56.3L-1437.9 71.6"/><path d="M-691417.6 16598.8L-522.5 60.1"/><path d="M1332.6 56.0L-1375.0 70.4"/><path d="M-709827.6 16598.8L-551.4 60.2"/><path d="M1314.7 55.7L-1316.4 69.4"/><path d="M-728237.6 16598.8L-580.6 60.4"/><path d="M1297.4 55.4L-1261.6 68.4"/><path d="M-746647.7 16598.8L-610.2 60.5"/><path d="M1280.8 55.1L-1210.2 67.4"/><path d="M-765057.7 16598.8L-640.1 60.6"/><path d="M1264.7 54.8L-1162.0 66.6"/><path d="M-783467.7 16598.8L-670.3 60.7"/><path d="M1249.2 54.5L-1116.6 65.7"/><path d="M-801877.7 16598.8L-700.9 60.9"/><path d="M1234.2 54.3L-1073.8 65.0"/><path d="M-820287.7 16598.8L-731.9 61.0"/><path d="M1219.7 54.0L-1033.5 64.2"/><path d="M-838697.7 16598.8L-763.2 61.1"/><path d="M1205.7 53.7L-995.3 63.5"/><path d="M-857107.8 16598.8L-794.9 61.3"/><path d="M1192.1 53.5L-959.2 62.9"/><path d="M-875517.8 16598.8L-827.0 61.4"/><path d="M1179.0 53.3L-924.9 62.3"/><path d="M-893927.8 16598.8L-859.5 61.5"/><path d="M1166.3 53.0L-892.3 61.7"/><path d="M-912337.8 16598.8L-892.3 61.7"/></g><defs><linearGradient id="g1" gradientUnits="userSpaceOnUse" x1="538.4" y1="320.6" x2="534.8" y2="335.8"><stop offset="0" stop-color="#4b0700"/><stop offset="0.5" stop-color="#a51000"/><stop offset="1" stop-color="#6f0b00"/></linearGradient><linearGradient id="g2" gradientUnits="userSpaceOnUse" x1="430.8" y1="288.6" x2="424.4" y2="316.4"><stop offset="0" stop-color="#4d0800"/><stop offset="0.5" stop-color="#930e00"/><stop offset="1" stop-color="#5b0900"/></linearGradient><linearGradient id="g3" gradientUnits="userSpaceOnUse" x1="509.9" y1="314.4" x2="506.3" y2="329.2"><stop offset="0" stop-color="#4a0700"/><stop offset="0.5" stop-color="#a11000"/><stop offset="1" stop-color="#6d0b00"/></linearGradient><linearGradient id="g4" gradientUnits="userSpaceOnUse" x1="408.1" y1="283.2" x2="401.7" y2="310.4"><stop offset="0" stop-color="#4c0700"/><stop offset="0.5" stop-color="#900e00"/><stop offset="1" stop-color="#5a0900"/></linearGradient><linearGradient id="g5" gradientUnits="userSpaceOnUse" x1="489.1" y1="306.4" x2="485.4" y2="320.8"><stop offset="0" stop-color="#490700"/><stop offset="0.5" stop-color="#9c0f00"/><stop offset="1" stop-color="#6a0a00"/></linearGradient><linearGradient id="g6" gradientUnits="userSpaceOnUse" x1="396.4" y1="275.7" x2="389.8" y2="301.9"><stop offset="0" stop-color="#4b0700"/><stop offset="0.5" stop-color="#8a0e00"/><stop offset="1" stop-color="#580900"/></linearGradient><linearGradient id="g7" gradientUnits="userSpaceOnUse" x1="465.8" y1="299.9" x2="462.1" y2="313.9"><stop offset="0" stop-color="#490700"/><stop offset="0.5" stop-color="#980f00"/><stop offset="1" stop-color="#680a00"/></linearGradient><linearGradient id="g8" gradientUnits="userSpaceOnUse" x1="378.1" y1="270.3" x2="371.5" y2="295.8"><stop offset="0" stop-color="#4a0700"/><stop offset="0.5" stop-color="#880d00"/><stop offset="1" stop-color="#570900"/></linearGradient><linearGradient id="g9" gradientUnits="userSpaceOnUse" x1="441.1" y1="294.3" x2="437.6" y2="308.1"><stop offset="0" stop-color="#480700"/><stop offset="0.5" stop-color="#970f00"/><stop offset="1" stop-color="#670a00"/></linearGradient><linearGradient id="g10" gradientUnits="userSpaceOnUse" x1="355.8" y1="266.1" x2="349.5" y2="291.2"><stop offset="0" stop-color="#4a0700"/><stop offset="0.5" stop-color="#870d00"/><stop offset="1" stop-color="#560800"/></linearGradient><linearGradient id="g11" gradientUnits="userSpaceOnUse" x1="419.6" y1="288.5" x2="416.2" y2="301.9"><stop offset="0" stop-color="#480700"/><stop offset="0.5" stop-color="#940e00"/><stop offset="1" stop-color="#660a00"/></linearGradient><linearGradient id="g12" gradientUnits="userSpaceOnUse" x1="338.7" y1="261.2" x2="332.4" y2="285.8"><stop offset="0" stop-color="#4a0700"/><stop offset="0.5" stop-color="#840d00"/><stop offset="1" stop-color="#550800"/></linearGradient><linearGradient id="g13" gradientUnits="userSpaceOnUse" x1="401.3" y1="282.4" x2="397.7" y2="295.5"><stop offset="0" stop-color="#470700"/><stop offset="0.5" stop-color="#8f0e00"/><stop offset="1" stop-color="#640a00"/></linearGradient><linearGradient id="g14" gradientUnits="userSpaceOnUse" x1="326.1" y1="255.7" x2="319.7" y2="279.7"><stop offset="0" stop-color="#490700"/><stop offset="0.5" stop-color="#800d00"/><stop offset="1" stop-color="#540800"/></linearGradient><linearGradient id="g15" gradientUnits="userSpaceOnUse" x1="386.4" y1="276.1" x2="382.7" y2="288.8"><stop offset="0" stop-color="#460700"/><stop offset="0.5" stop-color="#890d00"/><stop offset="1" stop-color="#610900"/></linearGradient><linearGradient id="g16" gradientUnits="userSpaceOnUse" x1="318.5" y1="249.9" x2="311.7" y2="273.0"><stop offset="0" stop-color="#480700"/><stop offset="0.5" stop-color="#7c0c00"/><stop offset="1" stop-color="#520800"/></linearGradient><linearGradient id="g17" gradientUnits="userSpaceOnUse" x1="371.2" y1="270.4" x2="367.4" y2="282.7"><stop offset="0" stop-color="#450700"/><stop offset="0.5" stop-color="#850d00"/><stop offset="1" stop-color="#5f0900"/></linearGradient><linearGradient id="g18" gradientUnits="userSpaceOnUse" x1="308.4" y1="244.9" x2="301.4" y2="267.3"><stop offset="0" stop-color="#470700"/><stop offset="0.5" stop-color="#780c00"/><stop offset="1" stop-color="#510800"/></linearGradient><linearGradient id="g19" gradientUnits="userSpaceOnUse" x1="357.3" y1="264.8" x2="353.4" y2="276.7"><stop offset="0" stop-color="#450700"/><stop offset="0.5" stop-color="#810d00"/><stop offset="1" stop-color="#5d0900"/></linearGradient><linearGradient id="g20" gradientUnits="userSpaceOnUse" x1="299.3" y1="240.0" x2="292.2" y2="261.8"><stop offset="0" stop-color="#460700"/><stop offset="0.5" stop-color="#750b00"/><stop offset="1" stop-color="#500800"/></linearGradient><linearGradient id="g21" gradientUnits="userSpaceOnUse" x1="345.2" y1="259.3" x2="341.2" y2="270.9"><stop offset="0" stop-color="#440700"/><stop offset="0.5" stop-color="#7d0c00"/><stop offset="1" stop-color="#5b0900"/></linearGradient><linearGradient id="g22" gradientUnits="userSpaceOnUse" x1="292.4" y1="235.2" x2="285.0" y2="256.3"><stop offset="0" stop-color="#450700"/><stop offset="0.5" stop-color="#710b00"/><stop offset="1" stop-color="#4e0800"/></linearGradient><linearGradient id="g23" gradientUnits="userSpaceOnUse" x1="335.0" y1="221.2" x2="325.8" y2="216.6"><stop offset="0" stop-color="#3d0600"/><stop offset="0.5" stop-color="#550800"/><stop offset="1" stop-color="#470700"/></linearGradient><linearGradient id="g24" gradientUnits="userSpaceOnUse" x1="348.2" y1="203.5" x2="331.9" y2="195.1"><stop offset="0" stop-color="#3e0600"/><stop offset="0.5" stop-color="#500800"/><stop offset="1" stop-color="#410600"/></linearGradient><linearGradient id="g25" gradientUnits="userSpaceOnUse" x1="325.5" y1="222.1" x2="315.2" y2="220.6"><stop offset="0" stop-color="#3c0600"/><stop offset="0.5" stop-color="#520800"/><stop offset="1" stop-color="#450700"/></linearGradient><linearGradient id="g26" gradientUnits="userSpaceOnUse" x1="331.5" y1="204.6" x2="313.0" y2="201.8"><stop offset="0" stop-color="#3d0600"/><stop offset="0.5" stop-color="#4d0800"/><stop offset="1" stop-color="#400600"/></linearGradient><linearGradient id="g27" gradientUnits="userSpaceOnUse" x1="316.2" y1="222.7" x2="306.3" y2="225.4"><stop offset="0" stop-color="#3d0600"/><stop offset="0.5" stop-color="#520800"/><stop offset="1" stop-color="#450700"/></linearGradient><linearGradient id="g28" gradientUnits="userSpaceOnUse" x1="314.8" y1="205.3" x2="296.6" y2="210.1"><stop offset="0" stop-color="#3d0600"/><stop offset="0.5" stop-color="#4e0800"/><stop offset="1" stop-color="#410600"/></linearGradient><linearGradient id="g29" gradientUnits="userSpaceOnUse" x1="308.6" y1="224.4" x2="300.9" y2="231.2"><stop offset="0" stop-color="#3e0600"/><stop offset="0.5" stop-color="#590900"/><stop offset="1" stop-color="#480700"/></linearGradient><linearGradient id="g30" gradientUnits="userSpaceOnUse" x1="296.0" y1="205.4" x2="281.9" y2="217.9"><stop offset="0" stop-color="#3e0600"/><stop offset="0.5" stop-color="#530800"/><stop offset="1" stop-color="#430700"/></linearGradient><linearGradient id="g31" gradientUnits="userSpaceOnUse" x1="301.8" y1="228.2" x2="296.3" y2="237.1"><stop offset="0" stop-color="#400600"/><stop offset="0.5" stop-color="#630a00"/><stop offset="1" stop-color="#4e0800"/></linearGradient><linearGradient id="g32" gradientUnits="userSpaceOnUse" x1="277.4" y1="208.4" x2="267.2" y2="224.8"><stop offset="0" stop-color="#410600"/><stop offset="0.5" stop-color="#5d0900"/><stop offset="1" stop-color="#460700"/></linearGradient><linearGradient id="g33" gradientUnits="userSpaceOnUse" x1="296.8" y1="232.4" x2="292.6" y2="242.2"><stop offset="0" stop-color="#410600"/><stop offset="0.5" stop-color="#6e0b00"/><stop offset="1" stop-color="#530800"/></linearGradient><linearGradient id="g34" gradientUnits="userSpaceOnUse" x1="261.8" y1="212.5" x2="254.0" y2="230.7"><stop offset="0" stop-color="#430700"/><stop offset="0.5" stop-color="#650a00"/><stop offset="1" stop-color="#4a0700"/></linearGradient><linearGradient id="g35" gradientUnits="userSpaceOnUse" x1="306.9" y1="231.4" x2="301.4" y2="240.6"><stop offset="0" stop-color="#400600"/><stop offset="0.5" stop-color="#650a00"/><stop offset="1" stop-color="#4f0800"/></linearGradient><linearGradient id="g36" gradientUnits="userSpaceOnUse" x1="280.3" y1="210.9" x2="270.3" y2="227.6"><stop offset="0" stop-color="#410600"/><stop offset="0.5" stop-color="#5e0900"/><stop offset="1" stop-color="#470700"/></linearGradient><linearGradient id="g37" gradientUnits="userSpaceOnUse" x1="303.0" y1="236.2" x2="298.8" y2="246.3"><stop offset="0" stop-color="#420600"/><stop offset="0.5" stop-color="#700b00"/><stop offset="1" stop-color="#540800"/></linearGradient><linearGradient id="g38" gradientUnits="userSpaceOnUse" x1="265.5" y1="215.5" x2="257.8" y2="234.0"><stop offset="0" stop-color="#430700"/><stop offset="0.5" stop-color="#670a00"/><stop offset="1" stop-color="#4a0700"/></linearGradient><linearGradient id="g39" gradientUnits="userSpaceOnUse" x1="301.1" y1="241.1" x2="297.6" y2="251.7"><stop offset="0" stop-color="#430700"/><stop offset="0.5" stop-color="#780c00"/><stop offset="1" stop-color="#580900"/></linearGradient><linearGradient id="g40" gradientUnits="userSpaceOnUse" x1="254.4" y1="220.3" x2="248.0" y2="240.0"><stop offset="0" stop-color="#450700"/><stop offset="0.5" stop-color="#6e0b00"/><stop offset="1" stop-color="#4d0800"/></linearGradient><linearGradient id="g41" gradientUnits="userSpaceOnUse" x1="314.7" y1="254.6" x2="311.8" y2="266.3"><stop offset="0" stop-color="#450700"/><stop offset="0.5" stop-color="#850d00"/><stop offset="1" stop-color="#5f0900"/></linearGradient><linearGradient id="g42" gradientUnits="userSpaceOnUse" x1="253.4" y1="233.0" x2="248.0" y2="254.5"><stop offset="0" stop-color="#470700"/><stop offset="0.5" stop-color="#790c00"/><stop offset="1" stop-color="#510800"/></linearGradient><linearGradient id="g43" gradientUnits="userSpaceOnUse" x1="328.1" y1="264.3" x2="325.5" y2="276.6"><stop offset="0" stop-color="#470700"/><stop offset="0.5" stop-color="#8f0e00"/><stop offset="1" stop-color="#630a00"/></linearGradient><linearGradient id="g44" gradientUnits="userSpaceOnUse" x1="255.2" y1="242.4" x2="250.4" y2="265.2"><stop offset="0" stop-color="#490700"/><stop offset="0.5" stop-color="#810d00"/><stop offset="1" stop-color="#540800"/></linearGradient><linearGradient id="g45" gradientUnits="userSpaceOnUse" x1="336.4" y1="269.6" x2="334.0" y2="282.2"><stop offset="0" stop-color="#480700"/><stop offset="0.5" stop-color="#940e00"/><stop offset="1" stop-color="#660a00"/></linearGradient><linearGradient id="g46" gradientUnits="userSpaceOnUse" x1="257.1" y1="247.6" x2="252.7" y2="271.0"><stop offset="0" stop-color="#4a0700"/><stop offset="0.5" stop-color="#850d00"/><stop offset="1" stop-color="#560800"/></linearGradient><linearGradient id="g47" gradientUnits="userSpaceOnUse" x1="575.1" y1="306.2" x2="569.0" y2="319.7"><stop offset="0" stop-color="#460700"/><stop offset="0.5" stop-color="#890d00"/><stop offset="1" stop-color="#600900"/></linearGradient><linearGradient id="g48" gradientUnits="userSpaceOnUse" x1="494.0" y1="263.3" x2="483.6" y2="286.7"><stop offset="0" stop-color="#470700"/><stop offset="0.5" stop-color="#780c00"/><stop offset="1" stop-color="#510800"/></linearGradient><linearGradient id="g49" gradientUnits="userSpaceOnUse" x1="594.4" y1="308.2" x2="587.5" y2="321.4"><stop offset="0" stop-color="#450700"/><stop offset="0.5" stop-color="#830d00"/><stop offset="1" stop-color="#5e0900"/></linearGradient><linearGradient id="g50" gradientUnits="userSpaceOnUse" x1="525.7" y1="265.6" x2="513.7" y2="288.4"><stop offset="0" stop-color="#460700"/><stop offset="0.5" stop-color="#740b00"/><stop offset="1" stop-color="#4f0800"/></linearGradient><linearGradient id="g51" gradientUnits="userSpaceOnUse" x1="613.5" y1="310.3" x2="605.5" y2="323.0"><stop offset="0" stop-color="#440700"/><stop offset="0.5" stop-color="#7d0c00"/><stop offset="1" stop-color="#5b0900"/></linearGradient><linearGradient id="g52" gradientUnits="userSpaceOnUse" x1="557.4" y1="268.0" x2="543.6" y2="290.0"><stop offset="0" stop-color="#450700"/><stop offset="0.5" stop-color="#6f0b00"/><stop offset="1" stop-color="#4d0800"/></linearGradient><linearGradient id="g53" gradientUnits="userSpaceOnUse" x1="633.5" y1="310.7" x2="623.8" y2="322.2"><stop offset="0" stop-color="#420700"/><stop offset="0.5" stop-color="#740b00"/><stop offset="1" stop-color="#560800"/></linearGradient><linearGradient id="g54" gradientUnits="userSpaceOnUse" x1="591.6" y1="268.1" x2="575.0" y2="287.9"><stop offset="0" stop-color="#430700"/><stop offset="0.5" stop-color="#680a00"/><stop offset="1" stop-color="#4a0700"/></linearGradient><linearGradient id="g55" gradientUnits="userSpaceOnUse" x1="651.3" y1="313.3" x2="639.9" y2="323.3"><stop offset="0" stop-color="#410600"/><stop offset="0.5" stop-color="#6d0b00"/><stop offset="1" stop-color="#530800"/></linearGradient><linearGradient id="g56" gradientUnits="userSpaceOnUse" x1="622.0" y1="271.3" x2="602.4" y2="288.6"><stop offset="0" stop-color="#420600"/><stop offset="0.5" stop-color="#620a00"/><stop offset="1" stop-color="#480700"/></linearGradient><linearGradient id="g57" gradientUnits="userSpaceOnUse" x1="669.0" y1="317.1" x2="655.7" y2="324.6"><stop offset="0" stop-color="#400600"/><stop offset="0.5" stop-color="#670a00"/><stop offset="1" stop-color="#500800"/></linearGradient><linearGradient id="g58" gradientUnits="userSpaceOnUse" x1="652.5" y1="276.4" x2="629.5" y2="289.6"><stop offset="0" stop-color="#410600"/><stop offset="0.5" stop-color="#5e0900"/><stop offset="1" stop-color="#470700"/></linearGradient><linearGradient id="g59" gradientUnits="userSpaceOnUse" x1="687.7" y1="321.7" x2="672.6" y2="325.0"><stop offset="0" stop-color="#3f0600"/><stop offset="0.5" stop-color="#630a00"/><stop offset="1" stop-color="#4d0800"/></linearGradient><linearGradient id="g60" gradientUnits="userSpaceOnUse" x1="685.0" y1="283.0" x2="658.8" y2="289.0"><stop offset="0" stop-color="#400600"/><stop offset="0.5" stop-color="#5a0900"/><stop offset="1" stop-color="#450700"/></linearGradient><linearGradient id="g61" gradientUnits="userSpaceOnUse" x1="706.4" y1="327.1" x2="691.0" y2="324.7"><stop offset="0" stop-color="#3f0600"/><stop offset="0.5" stop-color="#620a00"/><stop offset="1" stop-color="#4d0800"/></linearGradient><linearGradient id="g62" gradientUnits="userSpaceOnUse" x1="718.1" y1="291.0" x2="691.2" y2="287.0"><stop offset="0" stop-color="#400600"/><stop offset="0.5" stop-color="#5a0900"/><stop offset="1" stop-color="#450700"/></linearGradient><linearGradient id="g63" gradientUnits="userSpaceOnUse" x1="720.7" y1="333.8" x2="706.5" y2="326.8"><stop offset="0" stop-color="#400600"/><stop offset="0.5" stop-color="#660a00"/><stop offset="1" stop-color="#4f0800"/></linearGradient><linearGradient id="g64" gradientUnits="userSpaceOnUse" x1="744.1" y1="301.2" x2="719.1" y2="288.9"><stop offset="0" stop-color="#410600"/><stop offset="0.5" stop-color="#5d0900"/><stop offset="1" stop-color="#460700"/></linearGradient><linearGradient id="g65" gradientUnits="userSpaceOnUse" x1="735.2" y1="340.8" x2="723.3" y2="329.9"><stop offset="0" stop-color="#410600"/><stop offset="0.5" stop-color="#6e0b00"/><stop offset="1" stop-color="#530800"/></linearGradient><linearGradient id="g66" gradientUnits="userSpaceOnUse" x1="771.1" y1="311.6" x2="750.0" y2="292.4"><stop offset="0" stop-color="#420600"/><stop offset="0.5" stop-color="#640a00"/><stop offset="1" stop-color="#490700"/></linearGradient><linearGradient id="g67" gradientUnits="userSpaceOnUse" x1="749.2" y1="347.0" x2="739.8" y2="333.7"><stop offset="0" stop-color="#430700"/><stop offset="0.5" stop-color="#790c00"/><stop offset="1" stop-color="#590900"/></linearGradient><linearGradient id="g68" gradientUnits="userSpaceOnUse" x1="797.9" y1="320.9" x2="780.9" y2="297.1"><stop offset="0" stop-color="#440700"/><stop offset="0.5" stop-color="#6e0b00"/><stop offset="1" stop-color="#4d0800"/></linearGradient><linearGradient id="g69" gradientUnits="userSpaceOnUse" x1="764.0" y1="353.3" x2="756.7" y2="338.3"><stop offset="0" stop-color="#450700"/><stop offset="0.5" stop-color="#860d00"/><stop offset="1" stop-color="#5f0900"/></linearGradient><linearGradient id="g70" gradientUnits="userSpaceOnUse" x1="826.9" y1="330.5" x2="813.5" y2="303.5"><stop offset="0" stop-color="#470700"/><stop offset="0.5" stop-color="#790c00"/><stop offset="1" stop-color="#510800"/></linearGradient><linearGradient id="g71" gradientUnits="userSpaceOnUse" x1="772.2" y1="357.2" x2="765.8" y2="341.7"><stop offset="0" stop-color="#470700"/><stop offset="0.5" stop-color="#8d0e00"/><stop offset="1" stop-color="#630a00"/></linearGradient><linearGradient id="g72" gradientUnits="userSpaceOnUse" x1="843.7" y1="336.3" x2="832.1" y2="307.9"><stop offset="0" stop-color="#480700"/><stop offset="0.5" stop-color="#7f0c00"/><stop offset="1" stop-color="#530800"/></linearGradient><linearGradient id="g73" gradientUnits="userSpaceOnUse" x1="750.9" y1="394.2" x2="742.3" y2="377.4"><stop offset="0" stop-color="#470700"/><stop offset="0.5" stop-color="#8c0e00"/><stop offset="1" stop-color="#620a00"/></linearGradient><linearGradient id="g74" gradientUnits="userSpaceOnUse" x1="849.9" y1="352.8" x2="834.8" y2="324.0"><stop offset="0" stop-color="#470700"/><stop offset="0.5" stop-color="#7a0c00"/><stop offset="1" stop-color="#520800"/></linearGradient><linearGradient id="g75" gradientUnits="userSpaceOnUse" x1="739.7" y1="401.3" x2="731.2" y2="384.1"><stop offset="0" stop-color="#470700"/><stop offset="0.5" stop-color="#8f0e00"/><stop offset="1" stop-color="#640a00"/></linearGradient><linearGradient id="g76" gradientUnits="userSpaceOnUse" x1="833.7" y1="363.8" x2="818.4" y2="333.8"><stop offset="0" stop-color="#480700"/><stop offset="0.5" stop-color="#7d0c00"/><stop offset="1" stop-color="#530800"/></linearGradient><linearGradient id="g77" gradientUnits="userSpaceOnUse" x1="656.9" y1="351.2" x2="652.5" y2="367.9"><stop offset="0" stop-color="#4c0700"/><stop offset="0.5" stop-color="#ad1100"/><stop offset="1" stop-color="#730b00"/></linearGradient><linearGradient id="g78" gradientUnits="userSpaceOnUse" x1="532.0" y1="311.5" x2="524.2" y2="341.7"><stop offset="0" stop-color="#4f0800"/><stop offset="0.5" stop-color="#990f00"/><stop offset="1" stop-color="#5d0900"/></linearGradient><linearGradient id="g79" gradientUnits="userSpaceOnUse" x1="585.0" y1="316.1" x2="579.7" y2="330.6"><stop offset="0" stop-color="#480700"/><stop offset="0.5" stop-color="#940f00"/><stop offset="1" stop-color="#660a00"/></linearGradient><linearGradient id="g80" gradientUnits="userSpaceOnUse" x1="502.5" y1="278.9" x2="493.1" y2="304.6"><stop offset="0" stop-color="#490700"/><stop offset="0.5" stop-color="#830d00"/><stop offset="1" stop-color="#550800"/></linearGradient><linearGradient id="g81" gradientUnits="userSpaceOnUse" x1="566.4" y1="309.4" x2="561.1" y2="323.5"><stop offset="0" stop-color="#470700"/><stop offset="0.5" stop-color="#920e00"/><stop offset="1" stop-color="#650a00"/></linearGradient><linearGradient id="g82" gradientUnits="userSpaceOnUse" x1="487.7" y1="273.7" x2="478.5" y2="298.8"><stop offset="0" stop-color="#490700"/><stop offset="0.5" stop-color="#810d00"/><stop offset="1" stop-color="#540800"/></linearGradient><linearGradient id="g83" gradientUnits="userSpaceOnUse" x1="548.8" y1="302.9" x2="543.7" y2="316.6"><stop offset="0" stop-color="#470700"/><stop offset="0.5" stop-color="#8f0e00"/><stop offset="1" stop-color="#640a00"/></linearGradient><linearGradient id="g84" gradientUnits="userSpaceOnUse" x1="473.9" y1="268.6" x2="464.9" y2="293.2"><stop offset="0" stop-color="#490700"/><stop offset="0.5" stop-color="#800d00"/><stop offset="1" stop-color="#540800"/></linearGradient><linearGradient id="g85" gradientUnits="userSpaceOnUse" x1="532.6" y1="296.6" x2="527.6" y2="310.0"><stop offset="0" stop-color="#470700"/><stop offset="0.5" stop-color="#8d0e00"/><stop offset="1" stop-color="#620a00"/></linearGradient><linearGradient id="g86" gradientUnits="userSpaceOnUse" x1="461.6" y1="263.6" x2="452.7" y2="287.7"><stop offset="0" stop-color="#480700"/><stop offset="0.5" stop-color="#7e0c00"/><stop offset="1" stop-color="#530800"/></linearGradient><linearGradient id="g87" gradientUnits="userSpaceOnUse" x1="518.3" y1="290.4" x2="513.3" y2="303.5"><stop offset="0" stop-color="#460700"/><stop offset="0.5" stop-color="#890d00"/><stop offset="1" stop-color="#610900"/></linearGradient><linearGradient id="g88" gradientUnits="userSpaceOnUse" x1="451.6" y1="258.6" x2="442.7" y2="282.0"><stop offset="0" stop-color="#480700"/><stop offset="0.5" stop-color="#7b0c00"/><stop offset="1" stop-color="#520800"/></linearGradient><linearGradient id="g89" gradientUnits="userSpaceOnUse" x1="503.2" y1="284.8" x2="498.3" y2="297.5"><stop offset="0" stop-color="#460700"/><stop offset="0.5" stop-color="#880d00"/><stop offset="1" stop-color="#600900"/></linearGradient><linearGradient id="g90" gradientUnits="userSpaceOnUse" x1="439.2" y1="254.2" x2="430.6" y2="277.1"><stop offset="0" stop-color="#470700"/><stop offset="0.5" stop-color="#7a0c00"/><stop offset="1" stop-color="#510800"/></linearGradient><linearGradient id="g91" gradientUnits="userSpaceOnUse" x1="485.8" y1="279.9" x2="481.3" y2="292.4"><stop offset="0" stop-color="#460700"/><stop offset="0.5" stop-color="#880d00"/><stop offset="1" stop-color="#600900"/></linearGradient><linearGradient id="g92" gradientUnits="userSpaceOnUse" x1="422.2" y1="250.6" x2="414.0" y2="273.4"><stop offset="0" stop-color="#470700"/><stop offset="0.5" stop-color="#7a0c00"/><stop offset="1" stop-color="#510800"/></linearGradient><linearGradient id="g93" gradientUnits="userSpaceOnUse" x1="465.3" y1="275.9" x2="461.2" y2="288.4"><stop offset="0" stop-color="#460700"/><stop offset="0.5" stop-color="#8a0e00"/><stop offset="1" stop-color="#610a00"/></linearGradient><linearGradient id="g94" gradientUnits="userSpaceOnUse" x1="399.0" y1="248.2" x2="391.8" y2="271.0"><stop offset="0" stop-color="#480700"/><stop offset="0.5" stop-color="#7c0c00"/><stop offset="1" stop-color="#520800"/></linearGradient><linearGradient id="g95" gradientUnits="userSpaceOnUse" x1="447.2" y1="271.7" x2="443.5" y2="284.1"><stop offset="0" stop-color="#460700"/><stop offset="0.5" stop-color="#8b0e00"/><stop offset="1" stop-color="#610a00"/></linearGradient><linearGradient id="g96" gradientUnits="userSpaceOnUse" x1="380.8" y1="245.3" x2="374.1" y2="267.9"><stop offset="0" stop-color="#480700"/><stop offset="0.5" stop-color="#7d0c00"/><stop offset="1" stop-color="#530800"/></linearGradient><linearGradient id="g97" gradientUnits="userSpaceOnUse" x1="441.1" y1="284.1" x2="437.3" y2="297.1"><stop offset="0" stop-color="#470700"/><stop offset="0.5" stop-color="#8f0e00"/><stop offset="1" stop-color="#640a00"/></linearGradient><linearGradient id="g98" gradientUnits="userSpaceOnUse" x1="410.6" y1="268.4" x2="403.4" y2="293.6"><stop offset="0" stop-color="#4a0700"/><stop offset="0.5" stop-color="#850d00"/><stop offset="1" stop-color="#560800"/></linearGradient><linearGradient id="g99" gradientUnits="userSpaceOnUse" x1="430.5" y1="279.9" x2="426.2" y2="292.6"><stop offset="0" stop-color="#460700"/><stop offset="0.5" stop-color="#880d00"/><stop offset="1" stop-color="#600900"/></linearGradient><linearGradient id="g100" gradientUnits="userSpaceOnUse" x1="402.8" y1="264.0" x2="394.7" y2="288.3"><stop offset="0" stop-color="#480700"/><stop offset="0.5" stop-color="#7f0c00"/><stop offset="1" stop-color="#530800"/></linearGradient><linearGradient id="g101" gradientUnits="userSpaceOnUse" x1="420.7" y1="275.8" x2="416.0" y2="288.1"><stop offset="0" stop-color="#450700"/><stop offset="0.5" stop-color="#810d00"/><stop offset="1" stop-color="#5d0900"/></linearGradient><linearGradient id="g102" gradientUnits="userSpaceOnUse" x1="395.6" y1="259.7" x2="386.7" y2="283.2"><stop offset="0" stop-color="#470700"/><stop offset="0.5" stop-color="#790c00"/><stop offset="1" stop-color="#510800"/></linearGradient><linearGradient id="g103" gradientUnits="userSpaceOnUse" x1="412.3" y1="271.7" x2="407.2" y2="283.6"><stop offset="0" stop-color="#440700"/><stop offset="0.5" stop-color="#7c0c00"/><stop offset="1" stop-color="#5a0900"/></linearGradient><linearGradient id="g104" gradientUnits="userSpaceOnUse" x1="389.6" y1="255.5" x2="379.9" y2="278.1"><stop offset="0" stop-color="#460700"/><stop offset="0.5" stop-color="#730b00"/><stop offset="1" stop-color="#4f0800"/></linearGradient><linearGradient id="g105" gradientUnits="userSpaceOnUse" x1="405.0" y1="267.6" x2="399.5" y2="279.0"><stop offset="0" stop-color="#430700"/><stop offset="0.5" stop-color="#760c00"/><stop offset="1" stop-color="#570900"/></linearGradient><linearGradient id="g106" gradientUnits="userSpaceOnUse" x1="384.6" y1="251.4" x2="374.2" y2="273.2"><stop offset="0" stop-color="#450700"/><stop offset="0.5" stop-color="#6f0b00"/><stop offset="1" stop-color="#4d0800"/></linearGradient><linearGradient id="g107" gradientUnits="userSpaceOnUse" x1="398.6" y1="263.6" x2="392.8" y2="274.6"><stop offset="0" stop-color="#420600"/><stop offset="0.5" stop-color="#720b00"/><stop offset="1" stop-color="#550800"/></linearGradient><linearGradient id="g108" gradientUnits="userSpaceOnUse" x1="380.2" y1="247.4" x2="369.0" y2="268.3"><stop offset="0" stop-color="#440700"/><stop offset="0.5" stop-color="#6b0a00"/><stop offset="1" stop-color="#4c0700"/></linearGradient><linearGradient id="g109" gradientUnits="userSpaceOnUse" x1="393.2" y1="259.6" x2="387.0" y2="270.2"><stop offset="0" stop-color="#410600"/><stop offset="0.5" stop-color="#6e0b00"/><stop offset="1" stop-color="#530800"/></linearGradient><linearGradient id="g110" gradientUnits="userSpaceOnUse" x1="376.4" y1="243.6" x2="364.7" y2="263.6"><stop offset="0" stop-color="#430700"/><stop offset="0.5" stop-color="#670a00"/><stop offset="1" stop-color="#4a0700"/></linearGradient><linearGradient id="g111" gradientUnits="userSpaceOnUse" x1="388.6" y1="255.7" x2="382.1" y2="265.9"><stop offset="0" stop-color="#410600"/><stop offset="0.5" stop-color="#6b0a00"/><stop offset="1" stop-color="#510800"/></linearGradient><linearGradient id="g112" gradientUnits="userSpaceOnUse" x1="373.4" y1="239.8" x2="361.2" y2="259.0"><stop offset="0" stop-color="#420700"/><stop offset="0.5" stop-color="#640a00"/><stop offset="1" stop-color="#490700"/></linearGradient><linearGradient id="g113" gradientUnits="userSpaceOnUse" x1="384.7" y1="252.0" x2="378.0" y2="261.6"><stop offset="0" stop-color="#400600"/><stop offset="0.5" stop-color="#670a00"/><stop offset="1" stop-color="#500800"/></linearGradient><linearGradient id="g114" gradientUnits="userSpaceOnUse" x1="371.1" y1="236.2" x2="358.3" y2="254.5"><stop offset="0" stop-color="#420600"/><stop offset="0.5" stop-color="#610a00"/><stop offset="1" stop-color="#480700"/></linearGradient><linearGradient id="g115" gradientUnits="userSpaceOnUse" x1="381.5" y1="248.3" x2="374.5" y2="257.5"><stop offset="0" stop-color="#400600"/><stop offset="0.5" stop-color="#650a00"/><stop offset="1" stop-color="#4e0800"/></linearGradient><linearGradient id="g116" gradientUnits="userSpaceOnUse" x1="369.4" y1="232.7" x2="356.0" y2="250.1"><stop offset="0" stop-color="#410600"/><stop offset="0.5" stop-color="#5f0900"/><stop offset="1" stop-color="#470700"/></linearGradient><linearGradient id="g117" gradientUnits="userSpaceOnUse" x1="379.1" y1="244.7" x2="371.8" y2="253.4"><stop offset="0" stop-color="#3f0600"/><stop offset="0.5" stop-color="#620a00"/><stop offset="1" stop-color="#4d0800"/></linearGradient><linearGradient id="g118" gradientUnits="userSpaceOnUse" x1="368.1" y1="229.3" x2="354.4" y2="245.9"><stop offset="0" stop-color="#410600"/><stop offset="0.5" stop-color="#5d0900"/><stop offset="1" stop-color="#460700"/></linearGradient><linearGradient id="g119" gradientUnits="userSpaceOnUse" x1="377.3" y1="241.1" x2="369.8" y2="249.5"><stop offset="0" stop-color="#3f0600"/><stop offset="0.5" stop-color="#600900"/><stop offset="1" stop-color="#4c0700"/></linearGradient><linearGradient id="g120" gradientUnits="userSpaceOnUse" x1="367.4" y1="226.0" x2="353.3" y2="241.8"><stop offset="0" stop-color="#400600"/><stop offset="0.5" stop-color="#5b0900"/><stop offset="1" stop-color="#450700"/></linearGradient><linearGradient id="g121" gradientUnits="userSpaceOnUse" x1="376.0" y1="237.7" x2="368.4" y2="245.6"><stop offset="0" stop-color="#3f0600"/><stop offset="0.5" stop-color="#5e0900"/><stop offset="1" stop-color="#4b0700"/></linearGradient><linearGradient id="g122" gradientUnits="userSpaceOnUse" x1="367.1" y1="222.8" x2="352.7" y2="237.8"><stop offset="0" stop-color="#400600"/><stop offset="0.5" stop-color="#590900"/><stop offset="1" stop-color="#450700"/></linearGradient><linearGradient id="g123" gradientUnits="userSpaceOnUse" x1="375.1" y1="234.4" x2="367.3" y2="241.9"><stop offset="0" stop-color="#3e0600"/><stop offset="0.5" stop-color="#5c0900"/><stop offset="1" stop-color="#4a0700"/></linearGradient><linearGradient id="g124" gradientUnits="userSpaceOnUse" x1="367.2" y1="219.8" x2="352.5" y2="233.9"><stop offset="0" stop-color="#3f0600"/><stop offset="0.5" stop-color="#580900"/><stop offset="1" stop-color="#440700"/></linearGradient><linearGradient id="g125" gradientUnits="userSpaceOnUse" x1="374.5" y1="231.1" x2="366.6" y2="238.2"><stop offset="0" stop-color="#3e0600"/><stop offset="0.5" stop-color="#5b0900"/><stop offset="1" stop-color="#490700"/></linearGradient><linearGradient id="g126" gradientUnits="userSpaceOnUse" x1="367.5" y1="216.8" x2="352.5" y2="230.1"><stop offset="0" stop-color="#3f0600"/><stop offset="0.5" stop-color="#560800"/><stop offset="1" stop-color="#440700"/></linearGradient><linearGradient id="g127" gradientUnits="userSpaceOnUse" x1="374.2" y1="228.0" x2="366.1" y2="234.7"><stop offset="0" stop-color="#3e0600"/><stop offset="0.5" stop-color="#590900"/><stop offset="1" stop-color="#490700"/></linearGradient><linearGradient id="g128" gradientUnits="userSpaceOnUse" x1="368.0" y1="213.9" x2="352.8" y2="226.5"><stop offset="0" stop-color="#3f0600"/><stop offset="0.5" stop-color="#550800"/><stop offset="1" stop-color="#430700"/></linearGradient><linearGradient id="g129" gradientUnits="userSpaceOnUse" x1="374.1" y1="225.0" x2="365.9" y2="231.2"><stop offset="0" stop-color="#3e0600"/><stop offset="0.5" stop-color="#580900"/><stop offset="1" stop-color="#480700"/></linearGradient><linearGradient id="g130" gradientUnits="userSpaceOnUse" x1="368.8" y1="211.2" x2="353.4" y2="222.9"><stop offset="0" stop-color="#3e0600"/><stop offset="0.5" stop-color="#540800"/><stop offset="1" stop-color="#430700"/></linearGradient><linearGradient id="g131" gradientUnits="userSpaceOnUse" x1="374.2" y1="222.1" x2="365.9" y2="227.9"><stop offset="0" stop-color="#3d0600"/><stop offset="0.5" stop-color="#560800"/><stop offset="1" stop-color="#470700"/></linearGradient><linearGradient id="g132" gradientUnits="userSpaceOnUse" x1="369.8" y1="208.6" x2="354.1" y2="219.4"><stop offset="0" stop-color="#3e0600"/><stop offset="0.5" stop-color="#530800"/><stop offset="1" stop-color="#420600"/></linearGradient><linearGradient id="g133" gradientUnits="userSpaceOnUse" x1="374.6" y1="219.3" x2="366.1" y2="224.6"><stop offset="0" stop-color="#3d0600"/><stop offset="0.5" stop-color="#550800"/><stop offset="1" stop-color="#470700"/></linearGradient><linearGradient id="g134" gradientUnits="userSpaceOnUse" x1="370.9" y1="206.1" x2="355.0" y2="216.0"><stop offset="0" stop-color="#3e0600"/><stop offset="0.5" stop-color="#510800"/><stop offset="1" stop-color="#420600"/></linearGradient><linearGradient id="g135" gradientUnits="userSpaceOnUse" x1="375.0" y1="216.6" x2="366.5" y2="221.4"><stop offset="0" stop-color="#3d0600"/><stop offset="0.5" stop-color="#540800"/><stop offset="1" stop-color="#460700"/></linearGradient><linearGradient id="g136" gradientUnits="userSpaceOnUse" x1="372.2" y1="203.6" x2="356.1" y2="212.7"><stop offset="0" stop-color="#3e0600"/><stop offset="0.5" stop-color="#500800"/><stop offset="1" stop-color="#410600"/></linearGradient><linearGradient id="g137" gradientUnits="userSpaceOnUse" x1="375.6" y1="214.0" x2="367.0" y2="218.3"><stop offset="0" stop-color="#3d0600"/><stop offset="0.5" stop-color="#530800"/><stop offset="1" stop-color="#460700"/></linearGradient><linearGradient id="g138" gradientUnits="userSpaceOnUse" x1="373.4" y1="201.3" x2="357.2" y2="209.5"><stop offset="0" stop-color="#3e0600"/><stop offset="0.5" stop-color="#500800"/><stop offset="1" stop-color="#410600"/></linearGradient><linearGradient id="g139" gradientUnits="userSpaceOnUse" x1="376.3" y1="211.4" x2="367.6" y2="215.4"><stop offset="0" stop-color="#3d0600"/><stop offset="0.5" stop-color="#520800"/><stop offset="1" stop-color="#450700"/></linearGradient><linearGradient id="g140" gradientUnits="userSpaceOnUse" x1="374.7" y1="199.0" x2="358.4" y2="206.4"><stop offset="0" stop-color="#3d0600"/><stop offset="0.5" stop-color="#4f0800"/><stop offset="1" stop-color="#410600"/></linearGradient><linearGradient id="g141" gradientUnits="userSpaceOnUse" x1="377.0" y1="208.9" x2="368.2" y2="212.4"><stop offset="0" stop-color="#3c0600"/><stop offset="0.5" stop-color="#510800"/><stop offset="1" stop-color="#450700"/></linearGradient><linearGradient id="g142" gradientUnits="userSpaceOnUse" x1="376.0" y1="196.8" x2="359.6" y2="203.4"><stop offset="0" stop-color="#3d0600"/><stop offset="0.5" stop-color="#4e0800"/><stop offset="1" stop-color="#410600"/></linearGradient><linearGradient id="g143" gradientUnits="userSpaceOnUse" x1="377.8" y1="206.5" x2="369.0" y2="209.6"><stop offset="0" stop-color="#3c0600"/><stop offset="0.5" stop-color="#510800"/><stop offset="1" stop-color="#440700"/></linearGradient><linearGradient id="g144" gradientUnits="userSpaceOnUse" x1="377.4" y1="194.7" x2="361.0" y2="200.4"><stop offset="0" stop-color="#3d0600"/><stop offset="0.5" stop-color="#4d0800"/><stop offset="1" stop-color="#400600"/></linearGradient><linearGradient id="g145" gradientUnits="userSpaceOnUse" x1="378.7" y1="204.2" x2="369.9" y2="206.8"><stop offset="0" stop-color="#3c0600"/><stop offset="0.5" stop-color="#500800"/><stop offset="1" stop-color="#440700"/></linearGradient><linearGradient id="g146" gradientUnits="userSpaceOnUse" x1="378.9" y1="192.7" x2="362.4" y2="197.5"><stop offset="0" stop-color="#3d0600"/><stop offset="0.5" stop-color="#4d0800"/><stop offset="1" stop-color="#400600"/></linearGradient><linearGradient id="g147" gradientUnits="userSpaceOnUse" x1="379.6" y1="202.0" x2="370.9" y2="204.1"><stop offset="0" stop-color="#3c0600"/><stop offset="0.5" stop-color="#4f0800"/><stop offset="1" stop-color="#440700"/></linearGradient><linearGradient id="g148" gradientUnits="userSpaceOnUse" x1="380.5" y1="190.7" x2="364.0" y2="194.7"><stop offset="0" stop-color="#3d0600"/><stop offset="0.5" stop-color="#4c0700"/><stop offset="1" stop-color="#400600"/></linearGradient><linearGradient id="g149" gradientUnits="userSpaceOnUse" x1="380.7" y1="199.8" x2="371.9" y2="201.5"><stop offset="0" stop-color="#3c0600"/><stop offset="0.5" stop-color="#4f0800"/><stop offset="1" stop-color="#430700"/></linearGradient><linearGradient id="g150" gradientUnits="userSpaceOnUse" x1="382.1" y1="188.9" x2="365.7" y2="191.9"><stop offset="0" stop-color="#3d0600"/><stop offset="0.5" stop-color="#4c0700"/><stop offset="1" stop-color="#400600"/></linearGradient><linearGradient id="g151" gradientUnits="userSpaceOnUse" x1="381.8" y1="197.8" x2="373.1" y2="198.9"><stop offset="0" stop-color="#3c0600"/><stop offset="0.5" stop-color="#4e0800"/><stop offset="1" stop-color="#430700"/></linearGradient><linearGradient id="g152" gradientUnits="userSpaceOnUse" x1="383.9" y1="187.1" x2="367.5" y2="189.2"><stop offset="0" stop-color="#3d0600"/><stop offset="0.5" stop-color="#4b0700"/><stop offset="1" stop-color="#400600"/></linearGradient><linearGradient id="g153" gradientUnits="userSpaceOnUse" x1="383.1" y1="195.8" x2="374.4" y2="196.4"><stop offset="0" stop-color="#3c0600"/><stop offset="0.5" stop-color="#4e0800"/><stop offset="1" stop-color="#430700"/></linearGradient><linearGradient id="g154" gradientUnits="userSpaceOnUse" x1="385.7" y1="185.5" x2="369.4" y2="186.5"><stop offset="0" stop-color="#3c0600"/><stop offset="0.5" stop-color="#4b0700"/><stop offset="1" stop-color="#3f0600"/></linearGradient><linearGradient id="g155" gradientUnits="userSpaceOnUse" x1="384.4" y1="193.9" x2="375.7" y2="193.9"><stop offset="0" stop-color="#3c0600"/><stop offset="0.5" stop-color="#4e0800"/><stop offset="1" stop-color="#430700"/></linearGradient><linearGradient id="g156" gradientUnits="userSpaceOnUse" x1="387.6" y1="183.9" x2="371.5" y2="183.8"><stop offset="0" stop-color="#3c0600"/><stop offset="0.5" stop-color="#4b0700"/><stop offset="1" stop-color="#3f0600"/></linearGradient><linearGradient id="g157" gradientUnits="userSpaceOnUse" x1="385.7" y1="192.0" x2="377.2" y2="191.4"><stop offset="0" stop-color="#3c0600"/><stop offset="0.5" stop-color="#4d0800"/><stop offset="1" stop-color="#430700"/></linearGradient><linearGradient id="g158" gradientUnits="userSpaceOnUse" x1="389.6" y1="182.3" x2="373.7" y2="181.3"><stop offset="0" stop-color="#3c0600"/><stop offset="0.5" stop-color="#4b0700"/><stop offset="1" stop-color="#3f0600"/></linearGradient><linearGradient id="g159" gradientUnits="userSpaceOnUse" x1="387.1" y1="190.2" x2="378.7" y2="189.1"><stop offset="0" stop-color="#3c0600"/><stop offset="0.5" stop-color="#4d0800"/><stop offset="1" stop-color="#430700"/></linearGradient><linearGradient id="g160" gradientUnits="userSpaceOnUse" x1="391.5" y1="180.8" x2="375.9" y2="178.8"><stop offset="0" stop-color="#3c0600"/><stop offset="0.5" stop-color="#4b0700"/><stop offset="1" stop-color="#3f0600"/></linearGradient><linearGradient id="g161" gradientUnits="userSpaceOnUse" x1="388.5" y1="188.4" x2="380.3" y2="186.8"><stop offset="0" stop-color="#3c0600"/><stop offset="0.5" stop-color="#4d0800"/><stop offset="1" stop-color="#430700"/></linearGradient><linearGradient id="g162" gradientUnits="userSpaceOnUse" x1="393.5" y1="179.3" x2="378.2" y2="176.3"><stop offset="0" stop-color="#3c0600"/><stop offset="0.5" stop-color="#4a0700"/><stop offset="1" stop-color="#3f0600"/></linearGradient><linearGradient id="g163" gradientUnits="userSpaceOnUse" x1="390.0" y1="186.6" x2="382.0" y2="184.6"><stop offset="0" stop-color="#3c0600"/><stop offset="0.5" stop-color="#4d0800"/><stop offset="1" stop-color="#430700"/></linearGradient><linearGradient id="g164" gradientUnits="userSpaceOnUse" x1="395.5" y1="177.8" x2="380.6" y2="174.0"><stop offset="0" stop-color="#3c0600"/><stop offset="0.5" stop-color="#4b0700"/><stop offset="1" stop-color="#3f0600"/></linearGradient><linearGradient id="g165" gradientUnits="userSpaceOnUse" x1="391.5" y1="184.9" x2="383.7" y2="182.5"><stop offset="0" stop-color="#3c0600"/><stop offset="0.5" stop-color="#4d0800"/><stop offset="1" stop-color="#430700"/></linearGradient><linearGradient id="g166" gradientUnits="userSpaceOnUse" x1="397.5" y1="176.4" x2="383.0" y2="171.8"><stop offset="0" stop-color="#3c0600"/><stop offset="0.5" stop-color="#4b0700"/><stop offset="1" stop-color="#3f0600"/></linearGradient><linearGradient id="g167" gradientUnits="userSpaceOnUse" x1="393.1" y1="183.2" x2="385.5" y2="180.4"><stop offset="0" stop-color="#3c0600"/><stop offset="0.5" stop-color="#4e0800"/><stop offset="1" stop-color="#430700"/></linearGradient><linearGradient id="g168" gradientUnits="userSpaceOnUse" x1="399.4" y1="174.9" x2="385.3" y2="169.7"><stop offset="0" stop-color="#3c0600"/><stop offset="0.5" stop-color="#4b0700"/><stop offset="1" stop-color="#3f0600"/></linearGradient><linearGradient id="g169" gradientUnits="userSpaceOnUse" x1="394.7" y1="181.5" x2="387.3" y2="178.4"><stop offset="0" stop-color="#3c0600"/><stop offset="0.5" stop-color="#4e0800"/><stop offset="1" stop-color="#430700"/></linearGradient><linearGradient id="g170" gradientUnits="userSpaceOnUse" x1="401.4" y1="173.4" x2="387.7" y2="167.6"><stop offset="0" stop-color="#3c0600"/><stop offset="0.5" stop-color="#4b0700"/><stop offset="1" stop-color="#3f0600"/></linearGradient><linearGradient id="g171" gradientUnits="userSpaceOnUse" x1="396.3" y1="179.8" x2="389.2" y2="176.5"><stop offset="0" stop-color="#3c0600"/><stop offset="0.5" stop-color="#4e0800"/><stop offset="1" stop-color="#430700"/></linearGradient><linearGradient id="g172" gradientUnits="userSpaceOnUse" x1="403.5" y1="172.0" x2="390.2" y2="165.7"><stop offset="0" stop-color="#3c0600"/><stop offset="0.5" stop-color="#4b0700"/><stop offset="1" stop-color="#3f0600"/></linearGradient><linearGradient id="g173" gradientUnits="userSpaceOnUse" x1="398.1" y1="178.2" x2="391.2" y2="174.6"><stop offset="0" stop-color="#3c0600"/><stop offset="0.5" stop-color="#4e0800"/><stop offset="1" stop-color="#430700"/></linearGradient><linearGradient id="g174" gradientUnits="userSpaceOnUse" x1="405.6" y1="170.5" x2="392.8" y2="163.8"><stop offset="0" stop-color="#3d0600"/><stop offset="0.5" stop-color="#4b0700"/><stop offset="1" stop-color="#3f0600"/></linearGradient><linearGradient id="g175" gradientUnits="userSpaceOnUse" x1="399.8" y1="176.6" x2="393.2" y2="172.8"><stop offset="0" stop-color="#3c0600"/><stop offset="0.5" stop-color="#4e0800"/><stop offset="1" stop-color="#430700"/></linearGradient><linearGradient id="g176" gradientUnits="userSpaceOnUse" x1="407.7" y1="169.1" x2="395.3" y2="161.9"><stop offset="0" stop-color="#3d0600"/><stop offset="0.5" stop-color="#4b0700"/><stop offset="1" stop-color="#400600"/></linearGradient><linearGradient id="g177" gradientUnits="userSpaceOnUse" x1="401.6" y1="175.1" x2="395.2" y2="171.0"><stop offset="0" stop-color="#3c0600"/><stop offset="0.5" stop-color="#4f0800"/><stop offset="1" stop-color="#430700"/></linearGradient><linearGradient id="g178" gradientUnits="userSpaceOnUse" x1="409.8" y1="167.8" x2="397.9" y2="160.1"><stop offset="0" stop-color="#3d0600"/><stop offset="0.5" stop-color="#4c0700"/><stop offset="1" stop-color="#400600"/></linearGradient><linearGradient id="g179" gradientUnits="userSpaceOnUse" x1="403.3" y1="173.6" x2="397.1" y2="169.3"><stop offset="0" stop-color="#3c0600"/><stop offset="0.5" stop-color="#4f0800"/><stop offset="1" stop-color="#440700"/></linearGradient><linearGradient id="g180" gradientUnits="userSpaceOnUse" x1="412.0" y1="166.4" x2="400.5" y2="158.4"><stop offset="0" stop-color="#3d0600"/><stop offset="0.5" stop-color="#4c0700"/><stop offset="1" stop-color="#400600"/></linearGradient><linearGradient id="g181" gradientUnits="userSpaceOnUse" x1="405.0" y1="172.1" x2="399.1" y2="167.6"><stop offset="0" stop-color="#3c0600"/><stop offset="0.5" stop-color="#500800"/><stop offset="1" stop-color="#440700"/></linearGradient><linearGradient id="g182" gradientUnits="userSpaceOnUse" x1="414.1" y1="165.1" x2="403.0" y2="156.7"><stop offset="0" stop-color="#3d0600"/><stop offset="0.5" stop-color="#4c0700"/><stop offset="1" stop-color="#400600"/></linearGradient><linearGradient id="g183" gradientUnits="userSpaceOnUse" x1="406.7" y1="170.6" x2="401.0" y2="166.0"><stop offset="0" stop-color="#3c0600"/><stop offset="0.5" stop-color="#500800"/><stop offset="1" stop-color="#440700"/></linearGradient><linearGradient id="g184" gradientUnits="userSpaceOnUse" x1="416.1" y1="163.7" x2="405.5" y2="155.1"><stop offset="0" stop-color="#3d0600"/><stop offset="0.5" stop-color="#4d0800"/><stop offset="1" stop-color="#400600"/></linearGradient><linearGradient id="g185" gradientUnits="userSpaceOnUse" x1="408.3" y1="169.2" x2="402.8" y2="164.4"><stop offset="0" stop-color="#3c0600"/><stop offset="0.5" stop-color="#500800"/><stop offset="1" stop-color="#440700"/></linearGradient><linearGradient id="g186" gradientUnits="userSpaceOnUse" x1="418.1" y1="162.4" x2="407.9" y2="153.6"><stop offset="0" stop-color="#3d0600"/><stop offset="0.5" stop-color="#4d0800"/><stop offset="1" stop-color="#400600"/></linearGradient></defs><path d="M406.5 158.1L406.6 156.4L407.1 154.8L408.0 153.4L409.3 152.3L410.9 151.7L412.5 151.4L414.2 151.6L415.9 152.3L417.3 153.3L418.4 154.6L419.2 156.2L419.5 157.9L419.4 159.6L418.9 161.2L417.9 162.6L416.7 163.6L415.1 164.3L413.5 164.6L411.8 164.4L410.1 163.7L408.7 162.7L407.6 161.3L406.8 159.8Z" fill="url(#g186)"/><path d="M404.2 159.5L404.3 157.8L404.8 156.2L405.8 154.8L407.1 153.7L408.6 153.0L410.3 152.8L412.1 153.0L413.7 153.6L415.2 154.7L416.3 156.0L417.1 157.6L417.4 159.4L417.3 161.1L416.8 162.7L415.8 164.1L414.5 165.1L413.0 165.8L411.3 166.1L409.6 165.9L407.9 165.2L406.5 164.2L405.3 162.8L404.6 161.2Z" fill="url(#g184)"/><path d="M419.5 157.9L419.4 159.6L418.9 161.2L417.9 162.6L416.7 163.6L415.1 164.3L413.5 164.6L411.8 164.4L410.1 163.7L408.7 162.7L407.6 161.3L406.8 159.8L406.5 158.1L406.6 156.4L407.1 154.8L408.0 153.4L409.3 152.3L410.9 151.7L412.5 151.4L414.2 151.6L415.9 152.3L417.3 153.3L418.4 154.6L419.2 156.2Z" fill="#fd1900"/><path d="M414.2 161.9L415.7 160.1L410.6 155.7L409.0 157.4Z" fill="url(#g185)"/><path d="M401.8 161.0L401.9 159.2L402.5 157.6L403.5 156.2L404.8 155.1L406.3 154.4L408.1 154.2L409.8 154.4L411.5 155.0L412.9 156.1L414.1 157.5L414.9 159.1L415.2 160.8L415.1 162.6L414.6 164.2L413.6 165.6L412.3 166.7L410.7 167.4L409.0 167.6L407.3 167.4L405.6 166.8L404.2 165.7L403.0 164.3L402.2 162.7Z" fill="url(#g182)"/><path d="M417.4 159.4L417.3 161.1L416.8 162.7L415.8 164.1L414.5 165.1L413.0 165.8L411.3 166.1L409.6 165.9L407.9 165.2L406.5 164.2L405.3 162.8L404.6 161.2L404.2 159.5L404.3 157.8L404.8 156.2L405.8 154.8L407.1 153.7L408.6 153.0L410.3 152.8L412.1 153.0L413.7 153.6L415.2 154.7L416.3 156.0L417.1 157.6Z" fill="#fd1900"/><path d="M412.2 163.3L413.6 161.4L408.3 157.2L406.8 158.9Z" fill="url(#g183)"/><path d="M412.9 163.5L414.4 161.6L409.3 157.1L407.7 158.9Z" fill="url(#g185)"/><path d="M399.4 162.5L399.5 160.7L400.1 159.1L401.1 157.7L402.4 156.6L404.0 155.8L405.7 155.6L407.5 155.8L409.2 156.5L410.7 157.5L411.9 158.9L412.7 160.6L413.0 162.3L412.9 164.1L412.3 165.7L411.4 167.1L410.0 168.2L408.5 168.9L406.7 169.2L405.0 169.0L403.3 168.3L401.8 167.3L400.6 165.9L399.8 164.3Z" fill="url(#g180)"/><path d="M415.2 160.8L415.1 162.6L414.6 164.2L413.6 165.6L412.3 166.7L410.7 167.4L409.0 167.6L407.3 167.4L405.6 166.8L404.2 165.7L403.0 164.3L402.2 162.7L401.8 161.0L401.9 159.2L402.5 157.6L403.5 156.2L404.8 155.1L406.3 154.4L408.1 154.2L409.8 154.4L411.5 155.0L412.9 156.1L414.1 157.5L414.9 159.1Z" fill="#fd1900"/><path d="M411.0 164.9L412.4 163.0L407.0 158.6L405.6 160.5Z" fill="url(#g183)"/><path d="M410.0 164.8L411.4 162.8L405.9 158.7L404.4 160.6Z" fill="url(#g181)"/><path d="M411.6 165.1L413.2 163.2L407.9 158.7L406.3 160.5Z" fill="url(#g185)"/><path d="M397.0 164.1L397.1 162.3L397.7 160.6L398.6 159.2L400.0 158.0L401.6 157.3L403.4 157.1L405.2 157.3L406.9 157.9L408.4 159.0L409.6 160.4L410.4 162.1L410.8 163.8L410.7 165.6L410.1 167.3L409.1 168.7L407.8 169.8L406.2 170.6L404.4 170.8L402.6 170.6L400.9 170.0L399.4 168.9L398.2 167.5L397.4 165.8Z" fill="url(#g178)"/><path d="M413.0 162.3L412.9 164.1L412.3 165.7L411.4 167.1L410.0 168.2L408.5 168.9L406.7 169.2L405.0 169.0L403.3 168.3L401.8 167.3L400.6 165.9L399.8 164.3L399.4 162.5L399.5 160.7L400.1 159.1L401.1 157.7L402.4 156.6L404.0 155.8L405.7 155.6L407.5 155.8L409.2 156.5L410.7 157.5L411.9 158.9L412.7 160.6Z" fill="#fd1900"/><path d="M407.9 166.3L409.2 164.3L403.5 160.3L402.1 162.2Z" fill="url(#g179)"/><path d="M409.8 166.5L411.2 164.6L405.8 160.2L404.3 162.0Z" fill="url(#g183)"/><path d="M394.5 165.7L394.6 163.8L395.2 162.1L396.2 160.7L397.6 159.5L399.2 158.8L401.0 158.6L402.8 158.8L404.6 159.4L406.1 160.5L407.3 161.9L408.1 163.6L408.5 165.4L408.4 167.2L407.8 168.9L406.8 170.4L405.5 171.5L403.8 172.2L402.1 172.5L400.2 172.3L398.5 171.6L397.0 170.5L395.8 169.1L394.9 167.5Z" fill="url(#g176)"/><path d="M410.3 166.7L411.9 164.8L406.6 160.2L404.9 162.1Z" fill="url(#g185)"/><path d="M408.8 166.6L410.2 164.6L404.6 160.4L403.1 162.3Z" fill="url(#g181)"/><path d="M410.8 163.8L410.7 165.6L410.1 167.3L409.1 168.7L407.8 169.8L406.2 170.6L404.4 170.8L402.6 170.6L400.9 170.0L399.4 168.9L398.2 167.5L397.4 165.8L397.0 164.1L397.1 162.3L397.7 160.6L398.6 159.2L400.0 158.0L401.6 157.3L403.4 157.1L405.2 157.3L406.9 157.9L408.4 159.0L409.6 160.4L410.4 162.1Z" fill="#fd1900"/><path d="M405.8 167.7L406.9 165.7L401.0 161.9L399.7 163.9Z" fill="url(#g177)"/><path d="M408.5 168.2L410.0 166.2L404.5 161.8L402.9 163.6Z" fill="url(#g183)"/><path d="M392.1 167.3L392.2 165.5L392.8 163.7L393.8 162.3L395.2 161.1L396.8 160.4L398.6 160.1L400.5 160.3L402.3 161.0L403.8 162.1L405.0 163.5L405.9 165.2L406.2 167.0L406.1 168.9L405.6 170.6L404.5 172.0L403.2 173.2L401.5 173.9L399.7 174.2L397.9 174.0L396.1 173.3L394.6 172.2L393.3 170.8L392.5 169.1Z" fill="url(#g174)"/><path d="M406.8 168.1L408.1 166.0L402.3 162.0L400.9 164.0Z" fill="url(#g179)"/><path d="M408.9 168.4L410.5 166.4L405.1 161.8L403.5 163.7Z" fill="url(#g185)"/><path d="M407.5 168.4L409.0 166.3L403.3 162.1L401.8 164.1Z" fill="url(#g181)"/><path d="M408.5 165.4L408.4 167.2L407.8 168.9L406.8 170.4L405.5 171.5L403.8 172.2L402.1 172.5L400.2 172.3L398.5 171.6L397.0 170.5L395.8 169.1L394.9 167.5L394.5 165.7L394.6 163.8L395.2 162.1L396.2 160.7L397.6 159.5L399.2 158.8L401.0 158.6L402.8 158.8L404.6 159.4L406.1 160.5L407.3 161.9L408.1 163.6Z" fill="#fd1900"/><path d="M403.6 169.2L404.7 167.2L398.5 163.6L397.4 165.6Z" fill="url(#g175)"/><path d="M404.7 169.5L405.9 167.5L399.9 163.6L398.6 165.6Z" fill="url(#g177)"/><path d="M389.7 169.0L389.8 167.1L390.4 165.4L391.4 163.9L392.8 162.7L394.5 161.9L396.3 161.7L398.2 161.9L400.0 162.6L401.5 163.7L402.8 165.1L403.6 166.8L404.0 168.7L403.9 170.5L403.3 172.3L402.3 173.8L400.9 174.9L399.2 175.7L397.4 175.9L395.5 175.7L393.7 175.1L392.2 174.0L390.9 172.5L390.1 170.8Z" fill="url(#g172)"/><path d="M407.3 169.9L408.8 167.9L403.2 163.4L401.6 165.3Z" fill="url(#g183)"/><path d="M405.6 169.9L407.0 167.8L401.1 163.7L399.6 165.7Z" fill="url(#g179)"/><path d="M407.5 170.2L409.2 168.1L403.7 163.5L402.0 165.4Z" fill="url(#g185)"/><path d="M406.3 170.3L407.8 168.1L402.0 163.8L400.4 165.9Z" fill="url(#g181)"/><path d="M406.2 167.0L406.1 168.9L405.6 170.6L404.5 172.0L403.2 173.2L401.5 173.9L399.7 174.2L397.9 174.0L396.1 173.3L394.6 172.2L393.3 170.8L392.5 169.1L392.1 167.3L392.2 165.5L392.8 163.7L393.8 162.3L395.2 161.1L396.8 160.4L398.6 160.1L400.5 160.3L402.3 161.0L403.8 162.1L405.0 163.5L405.9 165.2Z" fill="#fd1900"/><path d="M401.5 170.8L402.4 168.7L396.0 165.3L395.0 167.3Z" fill="url(#g173)"/><path d="M402.7 171.1L403.8 168.9L397.5 165.3L396.3 167.4Z" fill="url(#g175)"/><path d="M387.3 170.7L387.4 168.8L388.0 167.0L389.0 165.5L390.5 164.3L392.2 163.6L394.0 163.3L395.9 163.5L397.7 164.2L399.3 165.3L400.6 166.8L401.5 168.5L401.9 170.4L401.7 172.3L401.2 174.0L400.1 175.5L398.7 176.7L397.0 177.5L395.2 177.7L393.3 177.5L391.4 176.9L389.9 175.7L388.6 174.3L387.7 172.6Z" fill="url(#g170)"/><path d="M405.9 171.6L407.5 169.6L401.8 165.0L400.2 167.0Z" fill="url(#g183)"/><path d="M403.7 171.4L404.9 169.2L398.8 165.3L397.5 167.4Z" fill="url(#g177)"/><path d="M406.1 172.0L407.7 169.9L402.2 165.1L400.4 167.2Z" fill="url(#g185)"/><path d="M404.4 171.8L405.8 169.6L399.8 165.4L398.3 167.6Z" fill="url(#g179)"/><path d="M404.0 168.7L403.9 170.5L403.3 172.3L402.3 173.8L400.9 174.9L399.2 175.7L397.4 175.9L395.5 175.7L393.7 175.1L392.2 174.0L390.9 172.5L390.1 170.8L389.7 169.0L389.8 167.1L390.4 165.4L391.4 163.9L392.8 162.7L394.5 161.9L396.3 161.7L398.2 161.9L400.0 162.6L401.5 163.7L402.8 165.1L403.6 166.8Z" fill="#fd1900"/><path d="M404.9 172.2L406.5 170.0L400.6 165.6L399.0 167.8Z" fill="url(#g181)"/><path d="M399.4 172.3L400.2 170.2L393.6 167.1L392.6 169.2Z" fill="url(#g171)"/><path d="M400.7 172.6L401.6 170.5L395.1 167.0L394.1 169.1Z" fill="url(#g173)"/><path d="M385.0 172.5L385.1 170.6L385.7 168.8L386.8 167.2L388.2 166.0L389.9 165.2L391.8 164.9L393.8 165.2L395.6 165.9L397.2 167.0L398.5 168.5L399.4 170.2L399.8 172.1L399.7 174.0L399.1 175.8L398.0 177.3L396.6 178.5L394.9 179.3L393.0 179.6L391.1 179.4L389.2 178.7L387.6 177.6L386.3 176.1L385.4 174.3Z" fill="url(#g168)"/><path d="M401.7 172.9L402.9 170.8L396.5 167.1L395.3 169.2Z" fill="url(#g175)"/><path d="M404.6 173.5L406.2 171.3L400.4 166.7L398.7 168.8Z" fill="url(#g183)"/><path d="M402.6 173.3L403.9 171.1L397.6 167.1L396.3 169.3Z" fill="url(#g177)"/><path d="M404.6 173.8L406.3 171.7L400.7 166.9L398.9 169.0Z" fill="url(#g185)"/><path d="M403.2 173.7L404.6 171.5L398.6 167.3L397.0 169.5Z" fill="url(#g179)"/><path d="M401.9 170.4L401.7 172.3L401.2 174.0L400.1 175.5L398.7 176.7L397.0 177.5L395.2 177.7L393.3 177.5L391.4 176.9L389.9 175.7L388.6 174.3L387.7 172.6L387.3 170.7L387.4 168.8L388.0 167.0L389.0 165.5L390.5 164.3L392.2 163.6L394.0 163.3L395.9 163.5L397.7 164.2L399.3 165.3L400.6 166.8L401.5 168.5Z" fill="#fd1900"/><path d="M403.6 174.2L405.1 171.9L399.2 167.5L397.5 169.7Z" fill="url(#g181)"/><path d="M397.3 173.9L398.1 171.8L391.2 168.9L390.4 171.0Z" fill="url(#g169)"/><path d="M398.6 174.2L399.5 172.0L392.8 168.9L391.8 171.0Z" fill="url(#g171)"/><path d="M399.8 174.5L400.8 172.3L394.2 168.8L393.1 171.0Z" fill="url(#g173)"/><path d="M382.7 174.3L382.8 172.3L383.4 170.5L384.5 169.0L386.0 167.7L387.7 167.0L389.6 166.7L391.6 166.9L393.5 167.6L395.1 168.7L396.4 170.2L397.3 172.0L397.7 173.9L397.6 175.8L397.0 177.6L395.9 179.2L394.5 180.4L392.7 181.2L390.8 181.5L388.9 181.3L387.0 180.6L385.4 179.5L384.0 178.0L383.2 176.2Z" fill="url(#g166)"/><path d="M400.7 174.8L401.9 172.6L395.5 168.9L394.2 171.0Z" fill="url(#g175)"/><path d="M403.2 175.3L404.8 173.1L399.0 168.5L397.3 170.6Z" fill="url(#g183)"/><path d="M401.5 175.3L402.8 173.0L396.5 169.0L395.1 171.2Z" fill="url(#g177)"/><path d="M403.0 175.7L404.8 173.5L399.1 168.6L397.2 170.8Z" fill="url(#g185)"/><path d="M399.8 172.1L399.7 174.0L399.1 175.8L398.0 177.3L396.6 178.5L394.9 179.3L393.0 179.6L391.1 179.4L389.2 178.7L387.6 177.6L386.3 176.1L385.4 174.3L385.0 172.5L385.1 170.6L385.7 168.8L386.8 167.2L388.2 166.0L389.9 165.2L391.8 164.9L393.8 165.2L395.6 165.9L397.2 167.0L398.5 168.5L399.4 170.2Z" fill="#fd1900"/><path d="M401.9 175.7L403.4 173.4L397.2 169.1L395.7 171.4Z" fill="url(#g179)"/><path d="M402.1 176.3L403.8 173.9L397.8 169.4L396.0 171.7Z" fill="url(#g181)"/><path d="M396.7 175.8L397.4 173.6L390.5 170.7L389.6 172.8Z" fill="url(#g169)"/><path d="M395.3 175.8L396.0 173.4L388.9 170.8L388.1 173.1Z" fill="url(#g167)"/><path d="M397.9 176.1L398.8 173.9L392.0 170.6L390.9 172.8Z" fill="url(#g171)"/><path d="M380.5 176.1L380.6 174.2L381.2 172.3L382.2 170.7L383.7 169.5L385.5 168.7L387.4 168.4L389.4 168.6L391.3 169.3L393.0 170.5L394.3 172.0L395.2 173.8L395.6 175.7L395.5 177.7L394.9 179.5L393.8 181.1L392.4 182.3L390.6 183.1L388.7 183.4L386.7 183.2L384.8 182.5L383.1 181.4L381.8 179.9L380.9 178.1Z" fill="url(#g164)"/><path d="M398.9 176.4L399.9 174.2L393.3 170.6L392.1 172.9Z" fill="url(#g173)"/><path d="M401.8 177.2L403.4 175.0L397.5 170.3L395.7 172.4Z" fill="url(#g183)"/><path d="M399.7 176.8L400.9 174.5L394.4 170.7L393.1 173.0Z" fill="url(#g175)"/><path d="M400.3 177.3L401.7 174.9L395.3 170.9L393.8 173.1Z" fill="url(#g177)"/><path d="M401.5 177.7L403.3 175.4L397.5 170.5L395.6 172.7Z" fill="url(#g185)"/><path d="M397.7 173.9L397.6 175.8L397.0 177.6L395.9 179.2L394.5 180.4L392.7 181.2L390.8 181.5L388.9 181.3L387.0 180.6L385.4 179.5L384.0 178.0L383.2 176.2L382.7 174.3L382.8 172.3L383.4 170.5L384.5 169.0L386.0 167.7L387.7 167.0L389.6 166.7L391.6 166.9L393.5 167.6L395.1 168.7L396.4 170.2L397.3 172.0Z" fill="#fd1900"/><path d="M400.6 177.8L402.2 175.4L395.9 171.1L394.3 173.4Z" fill="url(#g179)"/><path d="M400.7 178.4L402.4 175.9L396.3 171.4L394.5 173.7Z" fill="url(#g181)"/><path d="M396.0 177.7L396.8 175.5L389.8 172.5L388.9 174.7Z" fill="url(#g169)"/><path d="M393.3 177.4L393.9 175.1L386.6 172.8L385.9 175.1Z" fill="url(#g165)"/><path d="M397.1 178.0L398.0 175.7L391.1 172.5L390.1 174.7Z" fill="url(#g171)"/><path d="M378.2 178.1L378.3 176.1L378.9 174.2L380.0 172.6L381.5 171.3L383.3 170.5L385.3 170.2L387.3 170.4L389.2 171.1L390.9 172.3L392.2 173.8L393.2 175.7L393.6 177.6L393.5 179.6L392.8 181.4L391.8 183.0L390.3 184.3L388.5 185.1L386.5 185.4L384.5 185.2L382.6 184.5L380.9 183.4L379.5 181.8L378.6 180.0Z" fill="url(#g162)"/><path d="M394.6 177.9L395.4 175.4L388.2 172.8L387.4 175.2Z" fill="url(#g167)"/><path d="M398.0 178.4L399.1 176.1L392.3 172.5L391.1 174.8Z" fill="url(#g173)"/><path d="M400.3 179.2L402.0 176.9L396.0 172.1L394.2 174.3Z" fill="url(#g183)"/><path d="M398.7 178.8L399.9 176.5L393.3 172.6L391.9 174.9Z" fill="url(#g175)"/><path d="M395.6 175.7L395.5 177.7L394.9 179.5L393.8 181.1L392.4 182.3L390.6 183.1L388.7 183.4L386.7 183.2L384.8 182.5L383.1 181.4L381.8 179.9L380.9 178.1L380.5 176.1L380.6 174.2L381.2 172.3L382.2 170.7L383.7 169.5L385.5 168.7L387.4 168.4L389.4 168.6L391.3 169.3L393.0 170.5L394.3 172.0L395.2 173.8Z" fill="#fd1900"/><path d="M399.8 179.7L401.7 177.4L395.9 172.4L393.9 174.6Z" fill="url(#g185)"/><path d="M399.1 179.3L400.5 176.9L394.0 172.8L392.5 175.2Z" fill="url(#g177)"/><path d="M399.3 179.9L400.9 177.4L394.5 173.1L392.8 175.5Z" fill="url(#g179)"/><path d="M399.2 180.5L400.9 178.0L394.7 173.4L392.9 175.8Z" fill="url(#g181)"/><path d="M391.4 179.1L391.8 176.7L384.4 174.8L383.8 177.2Z" fill="url(#g163)"/><path d="M395.3 179.7L396.1 177.4L389.0 174.4L388.1 176.6Z" fill="url(#g169)"/><path d="M400.8 177.0L400.5 178.6L399.6 179.9L398.1 180.7L396.4 180.7L394.9 180.0L393.7 178.7L393.2 177.0L393.5 175.4L394.4 174.1L395.9 173.3L397.6 173.3L399.1 174.0L400.3 175.3Z" fill="#7c0c00"/><path d="M392.8 179.5L393.4 177.1L386.0 174.8L385.3 177.2Z" fill="url(#g165)"/><path d="M396.3 180.0L397.2 177.7L390.2 174.4L389.1 176.7Z" fill="url(#g171)"/><path d="M375.9 180.0L376.0 178.0L376.7 176.1L377.8 174.5L379.3 173.2L381.1 172.4L383.1 172.1L385.2 172.3L387.1 173.0L388.8 174.2L390.2 175.7L391.1 177.6L391.5 179.6L391.4 181.6L390.8 183.4L389.7 185.1L388.2 186.3L386.4 187.1L384.4 187.5L382.3 187.3L380.4 186.6L378.7 185.4L377.3 183.8L376.4 182.0Z" fill="url(#g160)"/><path d="M394.0 180.0L394.7 177.5L387.5 174.8L386.6 177.3Z" fill="url(#g167)"/><path d="M397.0 180.4L398.1 178.1L391.3 174.5L390.1 176.8Z" fill="url(#g173)"/><path d="M398.8 181.2L400.5 178.9L394.5 174.0L392.6 176.3Z" fill="url(#g183)"/><path d="M397.6 180.9L398.9 178.5L392.1 174.6L390.7 177.0Z" fill="url(#g175)"/><path d="M393.6 177.6L393.5 179.6L392.8 181.4L391.8 183.0L390.3 184.3L388.5 185.1L386.5 185.4L384.5 185.2L382.6 184.5L380.9 183.4L379.5 181.8L378.6 180.0L378.2 178.1L378.3 176.1L378.9 174.2L380.0 172.6L381.5 171.3L383.3 170.5L385.3 170.2L387.3 170.4L389.2 171.1L390.9 172.3L392.2 173.8L393.2 175.7Z" fill="#fd1900"/><path d="M397.9 181.5L399.3 179.0L392.7 174.8L391.2 177.2Z" fill="url(#g177)"/><path d="M397.9 182.1L399.5 179.6L393.1 175.1L391.3 177.6Z" fill="url(#g179)"/><path d="M399.6 178.5L399.4 180.2L398.4 181.5L397.0 182.3L395.2 182.3L393.7 181.6L392.5 180.3L392.0 178.6L392.2 177.0L393.2 175.6L394.7 174.9L396.4 174.8L398.0 175.6L399.1 176.9Z" fill="#7d0c00"/><path d="M389.4 180.8L389.7 178.4L382.1 176.9L381.7 179.3Z" fill="url(#g161)"/><path d="M394.6 181.7L395.4 179.3L388.2 176.3L387.3 178.6Z" fill="url(#g169)"/><path d="M391.0 181.2L391.4 178.8L383.9 176.8L383.3 179.3Z" fill="url(#g163)"/><path d="M397.6 182.8L399.4 180.2L393.1 175.5L391.2 178.0Z" fill="url(#g181)"/><path d="M373.7 182.0L373.8 180.0L374.4 178.1L375.6 176.4L377.1 175.1L379.0 174.3L381.0 174.0L383.1 174.2L385.1 174.9L386.8 176.1L388.2 177.7L389.1 179.5L389.6 181.5L389.5 183.6L388.8 185.5L387.7 187.1L386.2 188.4L384.3 189.3L382.3 189.6L380.2 189.4L378.3 188.7L376.5 187.5L375.1 185.9L374.2 184.1Z" fill="url(#g158)"/><path d="M395.4 182.1L396.4 179.7L389.3 176.3L388.2 178.7Z" fill="url(#g171)"/><path d="M392.3 181.7L392.9 179.2L385.4 176.8L384.7 179.3Z" fill="url(#g165)"/><path d="M396.1 182.5L397.2 180.1L390.2 176.4L389.0 178.8Z" fill="url(#g173)"/><path d="M393.3 182.2L394.1 179.7L386.7 177.0L385.8 179.5Z" fill="url(#g167)"/><path d="M391.5 179.6L391.4 181.6L390.8 183.4L389.7 185.1L388.2 186.3L386.4 187.1L384.4 187.5L382.3 187.3L380.4 186.6L378.7 185.4L377.3 183.8L376.4 182.0L375.9 180.0L376.0 178.0L376.7 176.1L377.8 174.5L379.3 173.2L381.1 172.4L383.1 172.1L385.2 172.3L387.1 173.0L388.8 174.2L390.2 175.7L391.1 177.6Z" fill="#fd1900"/><path d="M396.5 183.1L397.8 180.6L390.9 176.6L389.5 179.1Z" fill="url(#g175)"/><path d="M398.4 180.2L398.2 181.8L397.2 183.2L395.7 184.0L394.0 184.0L392.4 183.3L391.2 182.0L390.7 180.3L390.9 178.6L391.9 177.2L393.4 176.5L395.1 176.4L396.7 177.2L397.9 178.5Z" fill="#7d0c00"/><path d="M396.6 183.7L398.1 181.1L391.4 176.9L389.8 179.4Z" fill="url(#g177)"/><path d="M396.5 184.4L398.1 181.7L391.6 177.2L389.8 179.8Z" fill="url(#g179)"/><path d="M387.5 182.6L387.7 180.1L379.9 179.1L379.6 181.5Z" fill="url(#g159)"/><path d="M389.2 183.0L389.5 180.5L381.7 179.0L381.3 181.4Z" fill="url(#g161)"/><path d="M393.9 183.7L394.7 181.3L387.4 178.3L386.4 180.6Z" fill="url(#g169)"/><path d="M371.5 184.1L371.6 182.1L372.3 180.1L373.4 178.4L375.0 177.1L376.9 176.3L378.9 175.9L381.0 176.1L383.0 176.9L384.8 178.1L386.2 179.7L387.2 181.5L387.6 183.6L387.5 185.6L386.9 187.6L385.7 189.2L384.2 190.6L382.3 191.4L380.3 191.8L378.2 191.6L376.2 190.8L374.4 189.6L373.0 188.1L372.0 186.2Z" fill="url(#g156)"/><path d="M390.6 183.4L391.0 180.9L383.4 178.9L382.8 181.4Z" fill="url(#g163)"/><path d="M394.6 184.2L395.6 181.7L388.4 178.3L387.2 180.8Z" fill="url(#g171)"/><path d="M391.7 183.9L392.4 181.3L384.8 179.0L384.0 181.5Z" fill="url(#g165)"/><path d="M395.1 184.7L396.2 182.2L389.2 178.5L387.9 181.0Z" fill="url(#g173)"/><path d="M389.6 181.5L389.5 183.6L388.8 185.5L387.7 187.1L386.2 188.4L384.3 189.3L382.3 189.6L380.2 189.4L378.3 188.7L376.5 187.5L375.1 185.9L374.2 184.1L373.7 182.0L373.8 180.0L374.4 178.1L375.6 176.4L377.1 175.1L379.0 174.3L381.0 174.0L383.1 174.2L385.1 174.9L386.8 176.1L388.2 177.7L389.1 179.5Z" fill="#fd1900"/><path d="M392.7 184.5L393.4 181.9L386.0 179.1L385.0 181.7Z" fill="url(#g167)"/><path d="M397.2 181.8L397.0 183.5L396.0 184.9L394.4 185.7L392.7 185.7L391.1 185.0L389.9 183.6L389.3 182.0L389.6 180.3L390.6 178.9L392.1 178.1L393.9 178.1L395.5 178.8L396.7 180.1Z" fill="#7d0c00"/><path d="M395.3 185.3L396.7 182.7L389.7 178.7L388.3 181.2Z" fill="url(#g175)"/><path d="M395.3 186.0L396.8 183.3L390.0 179.0L388.4 181.6Z" fill="url(#g177)"/><path d="M385.6 184.3L385.6 181.9L377.7 181.3L377.6 183.8Z" fill="url(#g157)"/><path d="M387.4 184.7L387.5 182.2L379.6 181.2L379.4 183.7Z" fill="url(#g159)"/><path d="M393.1 185.9L394.0 183.4L386.6 180.3L385.6 182.7Z" fill="url(#g169)"/><path d="M388.9 185.2L389.2 182.6L381.4 181.1L380.9 183.6Z" fill="url(#g161)"/><path d="M369.4 186.3L369.5 184.2L370.2 182.2L371.3 180.5L372.9 179.1L374.8 178.3L376.9 177.9L379.1 178.1L381.1 178.9L382.9 180.1L384.3 181.7L385.3 183.6L385.7 185.7L385.6 187.8L385.0 189.7L383.8 191.4L382.3 192.8L380.4 193.6L378.3 194.0L376.1 193.8L374.1 193.1L372.3 191.9L370.9 190.3L369.9 188.3Z" fill="url(#g154)"/><path d="M390.2 185.7L390.7 183.0L382.9 181.1L382.2 183.7Z" fill="url(#g163)"/><path d="M393.7 186.4L394.7 183.8L387.4 180.4L386.2 182.9Z" fill="url(#g171)"/><path d="M396.0 183.5L395.7 185.2L394.7 186.6L393.2 187.4L391.4 187.5L389.7 186.7L388.5 185.4L388.0 183.7L388.2 181.9L389.2 180.5L390.8 179.8L392.6 179.7L394.2 180.5L395.4 181.8Z" fill="#7d0c00"/><path d="M391.2 186.2L391.8 183.6L384.1 181.2L383.3 183.8Z" fill="url(#g165)"/><path d="M394.1 187.0L395.3 184.3L388.1 180.6L386.7 183.2Z" fill="url(#g173)"/><path d="M387.6 183.6L387.5 185.6L386.9 187.6L385.7 189.2L384.2 190.6L382.3 191.4L380.3 191.8L378.2 191.6L376.2 190.8L374.4 189.6L373.0 188.1L372.0 186.2L371.5 184.1L371.6 182.1L372.3 180.1L373.4 178.4L375.0 177.1L376.9 176.3L378.9 175.9L381.0 176.1L383.0 176.9L384.8 178.1L386.2 179.7L387.2 181.5Z" fill="#fd1900"/><path d="M391.9 186.9L392.8 184.1L385.2 181.4L384.2 184.1Z" fill="url(#g167)"/><path d="M394.2 187.6L395.5 184.9L388.5 180.9L387.0 183.5Z" fill="url(#g175)"/><path d="M383.8 186.2L383.6 183.7L375.6 183.7L375.6 186.2Z" fill="url(#g155)"/><path d="M385.7 186.5L385.6 184.0L377.6 183.4L377.5 186.0Z" fill="url(#g157)"/><path d="M387.3 186.9L387.4 184.3L379.4 183.3L379.1 185.9Z" fill="url(#g159)"/><path d="M392.3 188.1L393.3 185.5L385.7 182.4L384.7 184.9Z" fill="url(#g169)"/><path d="M367.4 188.5L367.5 186.4L368.1 184.4L369.3 182.6L370.9 181.2L372.9 180.4L375.0 180.0L377.2 180.2L379.2 180.9L381.1 182.2L382.5 183.8L383.5 185.8L384.0 187.8L383.8 190.0L383.2 191.9L382.0 193.7L380.4 195.0L378.5 195.9L376.4 196.3L374.2 196.1L372.2 195.4L370.3 194.1L368.9 192.5L367.9 190.6Z" fill="url(#g152)"/><path d="M388.6 187.4L389.0 184.8L381.0 183.2L380.5 185.9Z" fill="url(#g161)"/><path d="M394.7 185.3L394.4 187.0L393.4 188.4L391.9 189.2L390.1 189.3L388.4 188.5L387.2 187.2L386.6 185.4L386.9 183.7L387.9 182.3L389.5 181.5L391.3 181.4L392.9 182.2L394.2 183.5Z" fill="#7d0c00"/><path d="M392.8 188.6L393.9 186.0L386.4 182.5L385.2 185.1Z" fill="url(#g171)"/><path d="M389.7 188.0L390.2 185.3L382.3 183.3L381.7 186.0Z" fill="url(#g163)"/><path d="M385.7 185.7L385.6 187.8L385.0 189.7L383.8 191.4L382.3 192.8L380.4 193.6L378.3 194.0L376.1 193.8L374.1 193.1L372.3 191.9L370.9 190.3L369.9 188.3L369.4 186.3L369.5 184.2L370.2 182.2L371.3 180.5L372.9 179.1L374.8 178.3L376.9 177.9L379.1 178.1L381.1 178.9L382.9 180.1L384.3 181.7L385.3 183.6Z" fill="#fd1900"/><path d="M393.0 189.3L394.2 186.6L386.9 182.8L385.6 185.4Z" fill="url(#g173)"/><path d="M390.6 188.6L391.3 185.9L383.4 183.4L382.6 186.2Z" fill="url(#g165)"/><path d="M391.2 189.3L392.1 186.5L384.3 183.7L383.3 186.5Z" fill="url(#g167)"/><path d="M384.0 188.3L383.8 185.8L375.6 185.8L375.6 188.3Z" fill="url(#g155)"/><path d="M385.7 188.7L385.7 186.1L377.5 185.6L377.4 188.2Z" fill="url(#g157)"/><path d="M393.5 187.0L393.2 188.8L392.2 190.2L390.6 191.1L388.8 191.1L387.1 190.4L385.8 189.0L385.3 187.2L385.5 185.5L386.6 184.0L388.1 183.2L390.0 183.2L391.7 183.9L392.9 185.3Z" fill="#7d0c00"/><path d="M382.0 188.3L381.6 185.5L373.5 186.0L373.7 188.8Z" fill="url(#g153)"/><path d="M387.2 189.2L387.3 186.5L379.1 185.5L378.8 188.1Z" fill="url(#g159)"/><path d="M391.6 190.4L392.5 187.7L384.8 184.5L383.8 187.1Z" fill="url(#g169)"/><path d="M365.5 190.8L365.6 188.6L366.2 186.6L367.4 184.8L369.1 183.4L371.0 182.5L373.2 182.1L375.4 182.3L377.5 183.1L379.3 184.3L380.8 186.0L381.8 187.9L382.3 190.1L382.2 192.2L381.5 194.2L380.3 196.0L378.7 197.4L376.8 198.3L374.6 198.6L372.4 198.5L370.3 197.7L368.5 196.5L367.0 194.8L365.9 192.9Z" fill="url(#g150)"/><path d="M388.4 189.8L388.7 187.0L380.6 185.5L380.1 188.2Z" fill="url(#g161)"/><path d="M391.8 191.0L392.9 188.2L385.4 184.7L384.2 187.4Z" fill="url(#g171)"/><path d="M389.3 190.4L389.8 187.6L381.8 185.6L381.1 188.3Z" fill="url(#g163)"/><path d="M384.0 187.8L383.8 190.0L383.2 191.9L382.0 193.7L380.4 195.0L378.5 195.9L376.4 196.3L374.2 196.1L372.2 195.4L370.3 194.1L368.9 192.5L367.9 190.6L367.4 188.5L367.5 186.4L368.1 184.4L369.3 182.6L370.9 181.2L372.9 180.4L375.0 180.0L377.2 180.2L379.2 180.9L381.1 182.2L382.5 183.8L383.5 185.8Z" fill="#fd1900"/><path d="M390.0 191.1L390.7 188.2L382.7 185.8L381.9 188.6Z" fill="url(#g165)"/><path d="M390.5 191.9L391.3 188.9L383.5 186.1L382.4 188.9Z" fill="url(#g167)"/><path d="M392.2 188.9L392.0 190.7L390.9 192.1L389.3 192.9L387.5 193.0L385.8 192.2L384.5 190.8L384.0 189.1L384.2 187.3L385.3 185.8L386.9 185.0L388.7 185.0L390.4 185.7L391.7 187.1Z" fill="#7d0c00"/><path d="M384.1 190.6L383.9 188.0L375.6 187.9L375.7 190.6Z" fill="url(#g155)"/><path d="M380.3 190.3L379.7 187.5L371.6 188.5L372.0 191.3Z" fill="url(#g151)"/><path d="M385.7 191.0L385.7 188.3L377.4 187.8L377.3 190.5Z" fill="url(#g157)"/><path d="M382.4 190.8L382.0 187.9L373.7 188.4L374.0 191.3Z" fill="url(#g153)"/><path d="M387.0 191.6L387.2 188.8L378.9 187.7L378.6 190.5Z" fill="url(#g159)"/><path d="M363.7 193.1L363.8 190.9L364.4 188.8L365.7 187.0L367.3 185.6L369.3 184.7L371.5 184.3L373.7 184.5L375.9 185.3L377.8 186.5L379.3 188.2L380.3 190.2L380.8 192.4L380.6 194.5L380.0 196.6L378.8 198.4L377.1 199.8L375.1 200.7L373.0 201.1L370.7 200.9L368.6 200.1L366.7 198.9L365.2 197.2L364.2 195.2Z" fill="url(#g148)"/><path d="M390.7 192.7L391.7 189.9L383.9 186.7L382.8 189.4Z" fill="url(#g169)"/><path d="M388.1 192.2L388.4 189.4L380.2 187.8L379.7 190.6Z" fill="url(#g161)"/><path d="M388.9 192.9L389.4 190.0L381.2 187.9L380.5 190.8Z" fill="url(#g163)"/><path d="M382.3 190.1L382.2 192.2L381.5 194.2L380.3 196.0L378.7 197.4L376.8 198.3L374.6 198.6L372.4 198.5L370.3 197.7L368.5 196.5L367.0 194.8L365.9 192.9L365.5 190.8L365.6 188.6L366.2 186.6L367.4 184.8L369.1 183.4L371.0 182.5L373.2 182.1L375.4 182.3L377.5 183.1L379.3 184.3L380.8 186.0L381.8 187.9Z" fill="#fd1900"/><path d="M389.4 193.6L390.1 190.7L382.0 188.2L381.1 191.1Z" fill="url(#g165)"/><path d="M391.1 190.7L390.8 192.6L389.7 194.0L388.1 194.9L386.2 194.9L384.5 194.1L383.2 192.7L382.7 191.0L382.9 189.1L384.0 187.7L385.6 186.8L387.5 186.8L389.2 187.5L390.5 189.0Z" fill="#7d0c00"/><path d="M389.7 194.5L390.6 191.4L382.6 188.5L381.5 191.5Z" fill="url(#g167)"/><path d="M384.3 192.9L384.1 190.2L375.7 190.2L375.7 192.9Z" fill="url(#g155)"/><path d="M378.7 192.3L378.0 189.4L369.7 191.0L370.3 193.8Z" fill="url(#g149)"/><path d="M385.7 193.4L385.7 190.6L377.3 190.1L377.1 192.8Z" fill="url(#g157)"/><path d="M380.8 192.8L380.2 189.9L371.9 190.9L372.4 193.8Z" fill="url(#g151)"/><path d="M362.0 195.5L362.1 193.3L362.8 191.2L364.0 189.3L365.7 187.9L367.7 187.0L369.9 186.6L372.2 186.8L374.4 187.5L376.3 188.8L377.8 190.5L378.9 192.5L379.3 194.7L379.2 196.9L378.5 199.0L377.3 200.8L375.6 202.2L373.6 203.2L371.4 203.6L369.2 203.4L367.0 202.6L365.1 201.4L363.5 199.7L362.5 197.7Z" fill="url(#g146)"/><path d="M386.9 194.0L387.0 191.1L378.6 190.1L378.3 192.9Z" fill="url(#g159)"/><path d="M382.7 193.4L382.3 190.4L373.9 190.9L374.2 193.9Z" fill="url(#g153)"/><path d="M387.8 194.7L388.1 191.8L379.8 190.2L379.2 193.0Z" fill="url(#g161)"/><path d="M380.8 192.4L380.6 194.5L380.0 196.6L378.8 198.4L377.1 199.8L375.1 200.7L373.0 201.1L370.7 200.9L368.6 200.1L366.7 198.9L365.2 197.2L364.2 195.2L363.7 193.1L363.8 190.9L364.4 188.8L365.7 187.0L367.3 185.6L369.3 184.7L371.5 184.3L373.7 184.5L375.9 185.3L377.8 186.5L379.3 188.2L380.3 190.2Z" fill="#fd1900"/><path d="M389.9 192.7L389.7 194.5L388.6 196.0L387.0 196.8L385.1 196.9L383.3 196.1L382.0 194.7L381.4 192.9L381.7 191.1L382.8 189.6L384.4 188.7L386.3 188.7L388.1 189.4L389.4 190.9Z" fill="#7d0c00"/><path d="M388.4 195.4L388.9 192.4L380.6 190.4L379.9 193.3Z" fill="url(#g163)"/><path d="M388.7 196.3L389.5 193.2L381.3 190.7L380.4 193.7Z" fill="url(#g165)"/><path d="M384.5 195.3L384.3 192.5L375.7 192.5L375.8 195.3Z" fill="url(#g155)"/><path d="M377.2 194.4L376.3 191.5L368.1 193.5L368.8 196.4Z" fill="url(#g147)"/><path d="M379.4 194.8L378.6 191.9L370.3 193.4L370.9 196.4Z" fill="url(#g149)"/><path d="M385.7 195.8L385.7 193.0L377.2 192.4L377.0 195.3Z" fill="url(#g157)"/><path d="M360.4 198.0L360.5 195.7L361.2 193.6L362.4 191.7L364.1 190.3L366.2 189.3L368.5 188.9L370.8 189.1L373.0 189.9L374.9 191.2L376.5 192.9L377.5 194.9L378.0 197.1L377.9 199.4L377.2 201.5L376.0 203.3L374.3 204.8L372.2 205.7L370.0 206.1L367.7 206.0L365.5 205.2L363.5 203.9L362.0 202.2L360.9 200.2Z" fill="url(#g144)"/><path d="M381.3 195.3L380.7 192.3L372.3 193.4L372.7 196.4Z" fill="url(#g151)"/><path d="M386.7 196.5L386.9 193.6L378.4 192.5L378.0 195.4Z" fill="url(#g159)"/><path d="M383.1 196.0L382.7 192.9L374.1 193.5L374.4 196.6Z" fill="url(#g153)"/><path d="M388.9 194.6L388.7 196.5L387.6 198.0L385.9 198.8L384.0 198.9L382.2 198.1L380.9 196.7L380.3 194.9L380.6 193.0L381.6 191.5L383.3 190.6L385.2 190.6L387.0 191.4L388.4 192.8Z" fill="#7d0c00"/><path d="M387.5 197.2L387.8 194.2L379.3 192.6L378.8 195.6Z" fill="url(#g161)"/><path d="M379.3 194.7L379.2 196.9L378.5 199.0L377.3 200.8L375.6 202.2L373.6 203.2L371.4 203.6L369.2 203.4L367.0 202.6L365.1 201.4L363.5 199.7L362.5 197.7L362.0 195.5L362.1 193.3L362.8 191.2L364.0 189.3L365.7 187.9L367.7 187.0L369.9 186.6L372.2 186.8L374.4 187.5L376.3 188.8L377.8 190.5L378.9 192.5Z" fill="#fd1900"/><path d="M387.9 198.1L388.5 195.0L380.0 192.9L379.3 195.9Z" fill="url(#g163)"/><path d="M331.1 199.6L331.2 197.3L331.9 195.2L333.1 193.3L334.8 191.9L336.9 190.9L339.2 190.6L341.6 190.8L344.1 191.1L345.8 192.9L347.4 194.7L348.5 196.8L349.0 199.0L349.0 201.3L348.3 203.4L347.0 205.2L345.3 206.7L343.2 207.6L341.0 208.0L338.6 207.8L336.4 207.0L334.4 205.6L332.8 203.9L331.7 201.8Z" fill="url(#g24)"/><path d="M384.7 197.7L384.4 194.8L375.8 194.9L375.8 197.8Z" fill="url(#g155)"/><path d="M375.8 196.6L374.7 193.7L366.5 196.1L367.4 199.0Z" fill="url(#g145)"/><path d="M378.0 196.9L377.1 194.0L368.7 196.0L369.5 199.0Z" fill="url(#g147)"/><path d="M385.8 198.4L385.7 195.4L377.0 194.9L376.9 197.8Z" fill="url(#g157)"/><path d="M380.1 197.4L379.3 194.4L370.8 196.0L371.4 199.0Z" fill="url(#g149)"/><path d="M358.9 200.5L359.0 198.2L359.7 196.1L360.9 194.2L362.7 192.7L364.8 191.7L367.1 191.3L369.4 191.5L371.7 192.3L373.6 193.6L375.2 195.3L376.3 197.4L376.8 199.6L376.7 201.9L376.0 204.1L374.7 205.9L373.0 207.4L370.9 208.4L368.6 208.8L366.3 208.6L364.1 207.9L362.1 206.6L360.5 204.8L359.4 202.8Z" fill="url(#g142)"/><path d="M388.0 196.6L387.7 198.5L386.7 200.0L385.0 200.9L383.0 201.0L381.2 200.2L379.9 198.7L379.3 196.9L379.6 195.0L380.6 193.5L382.3 192.6L384.3 192.5L386.1 193.3L387.4 194.8Z" fill="#7d0c00"/><path d="M381.9 198.0L381.3 194.9L372.7 196.0L373.1 199.1Z" fill="url(#g151)"/><path d="M386.6 199.1L386.8 196.1L378.1 195.0L377.7 198.0Z" fill="url(#g159)"/><path d="M383.5 198.8L383.0 195.6L374.4 196.1L374.6 199.3Z" fill="url(#g153)"/><path d="M387.1 199.9L387.5 196.8L378.9 195.2L378.3 198.2Z" fill="url(#g161)"/><path d="M378.0 197.1L377.9 199.4L377.2 201.5L376.0 203.3L374.3 204.8L372.2 205.7L370.0 206.1L367.7 206.0L365.5 205.2L363.5 203.9L362.0 202.2L360.9 200.2L360.4 198.0L360.5 195.7L361.2 193.6L362.4 191.7L364.1 190.3L366.2 189.3L368.5 188.9L370.8 189.1L373.0 189.9L374.9 191.2L376.5 192.9L377.5 194.9Z" fill="#fd1900"/><path d="M384.8 200.3L384.6 197.3L375.8 197.3L375.9 200.3Z" fill="url(#g155)"/><path d="M374.5 198.8L373.2 195.9L365.0 198.8L366.1 201.7Z" fill="url(#g143)"/><path d="M376.8 199.1L375.6 196.1L367.3 198.6L368.2 201.6Z" fill="url(#g145)"/><path d="M387.2 198.7L386.9 200.6L385.8 202.1L384.1 203.0L382.1 203.1L380.3 202.3L378.9 200.8L378.3 199.0L378.6 197.1L379.7 195.5L381.4 194.6L383.4 194.6L385.3 195.3L386.6 196.8Z" fill="#7d0c00"/><path d="M378.9 199.5L377.9 196.5L369.4 198.5L370.2 201.6Z" fill="url(#g147)"/><path d="M385.8 201.0L385.8 197.9L376.9 197.4L376.8 200.4Z" fill="url(#g157)"/><path d="M349.0 199.0L349.0 201.3L348.3 203.4L347.0 205.2L345.3 206.7L343.2 207.6L341.0 208.0L338.6 207.8L336.4 207.0L334.4 205.6L332.8 203.9L331.7 201.8L331.1 199.6L331.2 197.3L331.9 195.2L333.1 193.3L334.8 191.9L336.9 190.9L339.2 190.6L341.6 190.8L343.8 191.6L345.8 192.9L347.4 194.7L348.5 196.8Z" fill="#fc1900"/><path d="M357.4 203.2L357.5 200.8L358.2 198.6L359.5 196.7L361.3 195.2L362.4 194.5L363.4 194.2L365.7 193.8L368.1 194.0L370.4 194.7L372.4 196.1L374.0 197.8L375.1 199.9L375.6 202.2L375.5 204.5L374.8 206.7L373.5 208.6L371.8 210.1L369.7 211.1L367.3 211.5L365.0 211.4L362.7 210.6L360.7 209.3L359.1 207.5L358.0 205.4Z" fill="url(#g140)"/><path d="M380.8 200.1L379.9 197.0L371.3 198.6L372.0 201.7Z" fill="url(#g149)"/><path d="M386.4 201.8L386.6 198.6L377.8 197.5L377.4 200.6Z" fill="url(#g159)"/><path d="M382.5 200.8L381.8 197.6L373.1 198.7L373.5 201.9Z" fill="url(#g151)"/><path d="M313.0 203.6L313.1 201.3L313.8 199.1L315.1 197.2L316.8 195.7L319.0 194.7L321.3 194.3L323.8 194.5L326.1 195.3L328.2 196.6L329.8 198.4L331.0 200.5L331.5 202.8L331.4 205.1L330.8 207.3L329.5 209.2L327.7 210.7L325.6 211.7L323.2 212.1L320.8 211.9L318.5 211.1L316.4 209.8L314.8 208.0L313.6 205.9Z" fill="url(#g26)"/><path d="M376.8 199.6L376.7 201.9L376.0 204.1L374.7 205.9L373.0 207.4L370.9 208.4L368.6 208.8L366.3 208.6L364.1 207.9L362.1 206.6L360.5 204.8L359.4 202.8L358.9 200.5L359.0 198.2L359.7 196.1L360.9 194.2L362.7 192.7L364.8 191.7L367.1 191.3L369.4 191.5L371.7 192.3L373.6 193.6L375.2 195.3L376.3 197.4Z" fill="#fd1900"/><path d="M383.9 201.6L383.4 198.3L374.6 198.9L374.9 202.2Z" fill="url(#g153)"/><path d="M342.8 204.4L344.3 201.2L336.1 197.0L334.5 200.1Z" fill="url(#g23)"/><path d="M386.5 200.8L386.2 202.7L385.0 204.3L383.3 205.2L381.3 205.3L379.5 204.5L378.1 203.0L377.5 201.1L377.8 199.2L378.9 197.6L380.6 196.7L382.6 196.6L384.5 197.4L385.9 198.9Z" fill="#7d0c00"/><path d="M373.3 201.2L371.8 198.2L363.7 201.5L364.9 204.5Z" fill="url(#g141)"/><path d="M375.6 201.4L374.3 198.4L366.0 201.3L367.1 204.4Z" fill="url(#g143)"/><path d="M385.0 202.9L384.8 199.8L375.9 199.8L375.9 202.9Z" fill="url(#g155)"/><path d="M377.7 201.8L376.6 198.7L368.1 201.2L369.1 204.3Z" fill="url(#g145)"/><path d="M379.7 202.2L378.7 199.1L370.1 201.2L370.9 204.4Z" fill="url(#g147)"/><path d="M385.8 203.7L385.8 200.5L376.8 199.9L376.7 203.1Z" fill="url(#g157)"/><path d="M356.1 205.9L356.1 203.5L356.9 201.3L358.2 199.3L360.6 196.9L364.5 196.3L366.9 196.5L369.2 197.3L371.3 198.6L372.9 200.4L374.0 202.6L374.5 204.9L374.4 207.2L373.7 209.4L372.4 211.4L370.6 212.9L368.5 213.9L366.1 214.4L363.7 214.2L361.4 213.4L359.4 212.1L357.7 210.3L356.6 208.2Z" fill="url(#g138)"/><path d="M381.5 202.9L380.6 199.6L371.9 201.3L372.6 204.5Z" fill="url(#g149)"/><path d="M383.0 203.6L382.4 200.3L373.5 201.5L374.0 204.8Z" fill="url(#g151)"/><path d="M375.6 202.2L375.5 204.5L374.8 206.7L373.5 208.6L371.8 210.1L369.7 211.1L367.3 211.5L365.0 211.4L362.7 210.6L360.7 209.3L359.1 207.5L358.0 205.4L357.4 203.2L357.5 200.8L358.2 198.6L359.5 196.7L361.3 195.2L363.4 194.2L365.7 193.8L368.1 194.0L370.4 194.7L372.4 196.1L374.0 197.8L375.1 199.9Z" fill="#fc1900"/><path d="M384.3 204.5L383.8 201.1L374.8 201.7L375.1 205.2Z" fill="url(#g153)"/><path d="M385.8 203.0L385.5 204.9L384.4 206.5L382.6 207.4L380.6 207.5L378.7 206.7L377.3 205.2L376.7 203.3L377.0 201.3L378.1 199.7L379.9 198.8L381.9 198.7L383.8 199.5L385.2 201.1Z" fill="#7d0c00"/><path d="M331.5 202.8L331.4 205.1L330.8 207.3L329.5 209.2L327.7 210.7L325.6 211.7L323.2 212.1L320.8 211.9L318.5 211.1L316.4 209.8L314.8 208.0L313.6 205.9L313.0 203.6L313.1 201.3L313.8 199.1L315.1 197.2L316.8 195.7L319.0 194.7L321.3 194.3L323.8 194.5L326.1 195.3L328.2 196.6L329.8 198.4L331.0 200.5Z" fill="#fd1900"/><path d="M341.5 207.3L343.0 203.9L334.7 199.7L333.0 203.0Z" fill="url(#g23)"/><path d="M374.5 203.8L373.0 200.7L364.7 204.0L366.0 207.2Z" fill="url(#g141)"/><path d="M376.7 204.0L375.4 200.9L366.9 203.9L368.1 207.1Z" fill="url(#g143)"/><path d="M385.2 205.6L385.0 202.4L375.9 202.4L376.0 205.6Z" fill="url(#g155)"/><path d="M372.3 204.0L370.5 200.6L362.4 204.3L364.0 207.7Z" fill="url(#g139)"/><path d="M296.1 208.3L296.2 205.9L296.9 203.6L298.2 201.6L300.0 200.0L302.2 199.0L304.7 198.5L307.2 198.7L309.6 199.5L311.7 200.8L313.4 202.7L314.6 204.8L315.2 207.1L315.1 209.5L314.4 211.8L313.1 213.7L311.3 215.3L309.2 216.3L306.7 216.8L304.2 216.6L301.8 215.9L299.7 214.6L298.0 212.8L296.7 210.6Z" fill="url(#g28)"/><path d="M378.8 204.5L377.6 201.3L368.9 203.8L370.0 207.1Z" fill="url(#g145)"/><path d="M380.6 205.0L379.6 201.8L370.8 203.9L371.7 207.2Z" fill="url(#g147)"/><path d="M354.7 208.7L354.8 206.3L355.6 204.0L356.9 202.0L358.8 199.4L363.3 199.0L365.8 199.1L368.1 199.9L370.2 201.3L371.8 203.1L372.9 205.3L373.5 207.6L373.4 210.0L372.6 212.2L371.3 214.2L369.5 215.8L367.3 216.8L365.0 217.3L362.5 217.1L360.2 216.3L358.1 215.0L356.4 213.2L355.3 211.1Z" fill="url(#g136)"/><path d="M326.7 206.9L326.9 203.7L317.7 202.3L317.3 205.5Z" fill="url(#g25)"/><path d="M382.3 205.7L381.4 202.4L372.5 204.1L373.2 207.5Z" fill="url(#g149)"/><path d="M374.5 204.9L374.4 207.2L373.7 209.4L372.4 211.4L370.6 212.9L368.5 213.9L366.1 214.4L363.7 214.2L361.4 213.4L359.4 212.1L357.7 210.3L356.6 208.2L356.1 205.9L356.1 203.5L356.9 201.3L358.2 199.3L360.0 197.8L362.1 196.8L364.5 196.3L366.9 196.5L369.2 197.3L371.3 198.6L372.9 200.4L374.0 202.6Z" fill="#fc1900"/><path d="M385.2 205.2L384.9 207.2L383.8 208.8L382.0 209.7L379.9 209.8L378.0 209.0L376.6 207.5L376.0 205.5L376.3 203.6L377.4 201.9L379.2 201.0L381.3 200.9L383.2 201.7L384.6 203.2Z" fill="#7d0c00"/><path d="M383.6 206.6L382.9 203.1L373.9 204.3L374.4 207.8Z" fill="url(#g151)"/><path d="M384.7 207.6L384.2 204.1L375.1 204.7L375.4 208.2Z" fill="url(#g153)"/><path d="M340.1 210.2L341.7 206.8L333.2 202.5L331.5 205.9Z" fill="url(#g23)"/><path d="M375.8 206.4L374.3 203.3L365.8 206.7L367.2 209.9Z" fill="url(#g141)"/><path d="M377.9 206.8L376.5 203.6L367.9 206.6L369.1 209.9Z" fill="url(#g143)"/><path d="M371.2 206.5L369.2 203.1L361.1 207.2L362.9 210.7Z" fill="url(#g137)"/><path d="M379.8 207.3L378.6 204.0L369.8 206.6L370.9 209.9Z" fill="url(#g145)"/><path d="M373.9 207.0L372.0 203.5L363.7 207.2L365.4 210.8Z" fill="url(#g139)"/><path d="M353.4 211.6L353.5 209.2L354.3 206.8L357.0 202.1L362.1 201.7L364.6 201.9L367.0 202.7L369.1 204.0L370.8 205.9L372.0 208.1L372.5 210.4L372.4 212.9L371.6 215.1L370.3 217.2L368.5 218.7L366.3 219.8L363.8 220.3L361.4 220.1L359.0 219.4L356.9 218.0L355.2 216.2L354.0 214.0Z" fill="url(#g134)"/><path d="M381.5 207.9L380.5 204.5L371.5 206.7L372.4 210.2Z" fill="url(#g147)"/><path d="M326.5 209.8L326.7 206.4L317.3 205.0L316.9 208.4Z" fill="url(#g25)"/><path d="M315.2 207.1L315.1 209.5L314.4 211.8L313.1 213.7L311.3 215.3L309.2 216.3L306.7 216.8L304.2 216.6L301.8 215.9L299.7 214.6L298.0 212.8L296.7 210.6L296.1 208.3L296.2 205.9L296.9 203.6L298.2 201.6L300.0 200.0L302.2 199.0L304.7 198.5L307.2 198.7L309.6 199.5L311.7 200.8L313.4 202.7L314.6 204.8Z" fill="#fd1900"/><path d="M384.7 207.5L384.4 209.5L383.2 211.1L381.4 212.1L379.4 212.1L377.4 211.3L376.0 209.8L375.3 207.9L375.6 205.8L376.8 204.2L378.6 203.2L380.7 203.2L382.7 204.0L384.1 205.5Z" fill="#7d0c00"/><path d="M383.0 208.7L382.1 205.2L373.1 207.0L373.8 210.5Z" fill="url(#g149)"/><path d="M279.3 212.4L279.3 209.9L280.6 203.0L287.9 202.2L290.4 202.4L292.9 203.1L295.1 204.5L296.8 206.3L298.1 208.5L298.7 210.8L298.6 213.3L297.9 215.6L296.6 217.6L294.8 219.3L292.6 220.4L290.1 220.9L287.6 220.8L285.1 220.1L282.9 218.7L281.1 216.9L279.9 214.8Z" fill="url(#g30)"/><path d="M373.5 207.6L373.4 210.0L372.6 212.2L371.3 214.2L369.5 215.8L367.3 216.8L365.0 217.3L362.5 217.1L360.2 216.3L358.1 215.0L356.4 213.2L355.3 211.1L354.7 208.7L354.8 206.3L355.6 204.0L356.9 202.0L358.7 200.5L360.9 199.4L363.3 199.0L365.8 199.1L368.1 199.9L370.2 201.3L371.8 203.1L372.9 205.3Z" fill="#fc1900"/><path d="M384.3 209.7L383.5 206.1L374.3 207.3L374.9 210.9Z" fill="url(#g151)"/><path d="M311.5 209.7L310.2 206.2L301.1 208.7L302.2 212.2Z" fill="url(#g27)"/><path d="M377.1 209.2L375.5 205.9L367.0 209.4L368.4 212.7Z" fill="url(#g141)"/><path d="M338.7 213.3L340.3 209.7L331.7 205.4L329.9 208.9Z" fill="url(#g23)"/><path d="M379.1 209.6L377.7 206.3L368.9 209.4L370.2 212.7Z" fill="url(#g143)"/><path d="M370.2 209.1L368.0 205.6L360.0 210.2L362.0 213.7Z" fill="url(#g135)"/><path d="M380.9 210.2L379.6 206.8L370.7 209.4L371.8 212.9Z" fill="url(#g145)"/><path d="M373.0 209.5L370.9 206.0L362.7 210.2L364.6 213.8Z" fill="url(#g137)"/><path d="M384.3 209.8L384.0 211.8L382.8 213.5L381.0 214.5L378.9 214.6L376.9 213.8L375.4 212.2L374.8 210.2L375.1 208.2L376.3 206.5L378.1 205.5L380.2 205.4L382.2 206.3L383.6 207.8Z" fill="#7d0c00"/><path d="M352.2 214.6L352.3 212.1L353.1 209.8L355.2 204.8L361.1 204.5L363.6 204.7L366.1 205.5L368.2 206.9L369.9 208.7L371.1 210.9L371.6 213.4L371.5 215.8L370.7 218.1L369.4 220.2L367.5 221.8L365.3 222.9L362.8 223.4L360.3 223.2L357.9 222.5L355.7 221.1L354.0 219.2L352.8 217.0Z" fill="url(#g132)"/><path d="M375.5 210.1L373.6 206.5L365.2 210.3L366.9 214.0Z" fill="url(#g139)"/><path d="M382.5 210.9L381.4 207.4L372.3 209.6L373.2 213.2Z" fill="url(#g147)"/><path d="M326.2 212.8L326.5 209.3L316.9 207.9L316.5 211.3Z" fill="url(#g25)"/><path d="M383.9 211.8L382.9 208.2L373.7 210.0L374.4 213.6Z" fill="url(#g149)"/><path d="M372.5 210.4L372.4 212.9L371.6 215.1L370.3 217.2L368.5 218.7L366.3 219.8L363.8 220.3L361.4 220.1L359.0 219.4L356.9 218.0L355.2 216.2L354.0 214.0L353.4 211.6L353.5 209.2L354.3 206.8L355.6 204.8L357.5 203.2L359.7 202.1L362.1 201.7L364.6 201.9L367.0 202.7L369.1 204.0L370.8 205.9L372.0 208.1Z" fill="#fc1900"/><path d="M298.7 210.8L298.6 213.3L297.9 215.6L296.6 217.6L294.8 219.3L292.6 220.4L290.1 220.9L287.6 220.8L285.1 220.1L282.9 218.7L281.1 216.9L279.9 214.8L279.3 212.4L279.3 209.9L280.0 207.6L281.3 205.5L283.1 203.9L285.4 202.7L287.9 202.2L290.4 202.4L292.9 203.1L295.1 204.5L296.8 206.3L298.1 208.5Z" fill="#fb1900"/><path d="M378.5 212.0L376.9 208.7L368.1 212.2L369.6 215.6Z" fill="url(#g141)"/><path d="M312.6 212.9L311.3 209.3L302.0 211.7L303.2 215.4Z" fill="url(#g27)"/><path d="M380.4 212.5L378.9 209.1L370.0 212.2L371.3 215.7Z" fill="url(#g143)"/><path d="M337.2 216.5L338.9 212.8L330.1 208.3L328.2 212.0Z" fill="url(#g23)"/><path d="M383.9 212.2L383.6 214.3L382.4 215.9L380.6 216.9L378.4 217.0L376.4 216.2L374.9 214.7L374.3 212.7L374.6 210.6L375.8 208.9L377.6 207.9L379.8 207.8L381.8 208.6L383.3 210.2Z" fill="#7d0c00"/><path d="M369.2 211.7L366.8 208.3L358.9 213.2L361.1 216.8Z" fill="url(#g133)"/><path d="M372.2 212.1L369.9 208.6L361.7 213.2L363.8 216.8Z" fill="url(#g135)"/><path d="M382.0 213.2L380.7 209.7L371.7 212.4L372.8 216.0Z" fill="url(#g145)"/><path d="M374.8 212.6L372.7 209.0L364.3 213.2L366.3 217.0Z" fill="url(#g137)"/><path d="M258.0 208.0L271.1 207.0L273.7 207.1L276.2 207.8L278.4 209.1L280.2 211.0L281.4 213.2L282.1 215.6L282.1 218.1L281.4 220.5L280.1 222.6L278.2 224.4L276.0 225.6L273.5 226.1L270.9 226.1L268.4 225.4L266.2 224.1L264.4 222.3L263.1 220.0Z" fill="url(#g32)"/><path d="M295.8 211.7L292.3 208.2L285.2 214.5L288.6 218.1Z" fill="url(#g29)"/><path d="M351.2 217.7L351.3 215.2L353.5 207.5L360.2 207.4L362.8 207.6L365.3 208.4L367.4 209.8L369.2 211.7L370.3 213.9L370.9 216.4L370.8 218.9L370.0 221.2L368.6 223.3L366.8 225.0L364.5 226.1L362.0 226.6L359.4 226.5L357.0 225.7L354.8 224.3L353.0 222.4L351.8 220.2Z" fill="url(#g130)"/><path d="M326.0 215.9L326.3 212.3L316.6 210.8L316.1 214.4Z" fill="url(#g25)"/><path d="M383.5 214.0L382.3 210.4L373.1 212.7L374.1 216.3Z" fill="url(#g147)"/><path d="M377.3 213.3L375.3 209.6L366.7 213.5L368.5 217.3Z" fill="url(#g139)"/><path d="M371.6 213.4L371.5 215.8L370.7 218.1L369.4 220.2L367.5 221.8L365.3 222.9L362.8 223.4L360.3 223.2L357.9 222.5L355.7 221.1L354.0 219.2L352.8 217.0L352.2 214.6L352.3 212.1L353.1 209.8L354.5 207.7L356.3 206.1L358.6 205.0L361.1 204.5L363.6 204.7L366.1 205.5L368.2 206.9L369.9 208.7L371.1 210.9Z" fill="#fb1900"/><path d="M383.6 214.7L383.3 216.8L382.1 218.5L380.2 219.5L378.0 219.6L376.0 218.8L374.5 217.2L373.8 215.1L374.1 213.1L375.4 211.3L377.2 210.3L379.4 210.2L381.4 211.0L382.9 212.6Z" fill="#7d0c00"/><path d="M379.9 215.0L378.2 211.5L369.4 215.1L370.8 218.6Z" fill="url(#g141)"/><path d="M381.7 215.6L380.1 212.0L371.1 215.2L372.4 218.8Z" fill="url(#g143)"/><path d="M368.4 214.5L365.7 211.0L357.9 216.4L360.4 220.0Z" fill="url(#g131)"/><path d="M313.8 216.1L312.4 212.4L303.0 214.9L304.2 218.7Z" fill="url(#g27)"/><path d="M371.4 214.8L368.9 211.2L360.8 216.3L363.1 220.0Z" fill="url(#g133)"/><path d="M335.6 219.8L337.4 216.0L328.5 211.4L326.5 215.2Z" fill="url(#g23)"/><path d="M260.2 210.4L274.1 209.5L276.7 209.5L279.2 210.3L281.5 211.6L283.3 213.5L284.6 215.7L285.2 218.2L285.2 220.7L284.5 223.2L283.1 225.3L281.3 227.1L279.0 228.3L276.5 228.9L273.9 228.8L271.4 228.1L269.1 226.8L267.3 225.0L266.0 222.7Z" fill="url(#g36)"/><path d="M374.2 215.2L371.8 211.6L363.5 216.3L365.7 220.0Z" fill="url(#g135)"/><path d="M383.2 216.3L381.8 212.7L372.6 215.4L373.8 219.2Z" fill="url(#g145)"/><path d="M376.7 215.9L374.5 212.1L366.0 216.4L368.0 220.3Z" fill="url(#g137)"/><path d="M350.4 220.9L350.5 218.3L351.9 210.4L359.5 210.4L362.2 210.6L364.7 211.4L366.9 212.8L368.6 214.7L369.8 217.0L370.4 219.5L370.3 222.0L369.5 224.4L368.1 226.6L366.2 228.3L363.9 229.4L361.3 229.9L358.7 229.8L356.2 229.0L354.0 227.6L352.2 225.7L351.0 223.4Z" fill="url(#g128)"/><path d="M298.9 214.8L295.3 211.2L288.1 217.5L291.5 221.2Z" fill="url(#g29)"/><path d="M325.7 219.1L326.0 215.3L316.1 213.9L315.6 217.6Z" fill="url(#g25)"/><path d="M282.1 215.6L282.1 218.1L281.4 220.5L280.1 222.6L278.2 224.4L276.0 225.6L273.5 226.1L270.9 226.1L268.4 225.4L266.2 224.1L264.4 222.3L263.1 220.0L262.4 217.6L262.4 215.1L263.1 212.6L264.4 210.5L266.3 208.7L268.6 207.5L271.1 207.0L273.7 207.1L276.2 207.8L278.4 209.1L280.2 211.0L281.4 213.2Z" fill="#f81800"/><path d="M379.0 216.6L377.0 212.8L368.2 216.7L370.1 220.7Z" fill="url(#g139)"/><path d="M370.9 216.4L370.8 218.9L370.0 221.2L368.6 223.3L366.8 225.0L364.5 226.1L362.0 226.6L359.4 226.5L357.0 225.7L354.8 224.3L353.0 222.4L351.8 220.2L351.2 217.7L351.3 215.2L352.1 212.8L353.5 210.7L355.4 209.0L357.7 207.9L360.2 207.4L362.8 207.6L365.3 208.4L367.4 209.8L369.2 211.7L370.3 213.9Z" fill="#fb1900"/><path d="M383.4 217.2L383.0 219.3L381.8 221.1L379.9 222.1L377.7 222.2L375.7 221.4L374.1 219.8L373.5 217.7L373.8 215.6L375.0 213.8L376.9 212.8L379.1 212.7L381.2 213.5L382.7 215.1Z" fill="#7d0c00"/><path d="M381.3 218.0L379.6 214.4L370.6 218.1L372.2 221.7Z" fill="url(#g141)"/><path d="M280.3 215.7L274.4 212.3L269.4 220.4L275.1 224.0Z" fill="url(#g31)"/><path d="M238.1 213.2L256.6 211.7L259.2 211.8L261.7 212.5L264.0 213.8L265.8 215.7L267.1 217.9L267.7 220.4L267.7 223.0L267.1 225.5L265.8 227.7L263.9 229.5L261.7 230.7L259.2 231.4L256.6 231.4L254.1 230.7L251.8 229.4L249.9 227.6Z" fill="url(#g34)"/><path d="M383.0 218.7L381.4 215.0L372.2 218.3L373.6 222.0Z" fill="url(#g143)"/><path d="M370.7 217.6L368.0 214.0L360.0 219.5L362.6 223.2Z" fill="url(#g131)"/><path d="M367.7 217.4L364.7 213.9L357.0 219.7L359.8 223.3Z" fill="url(#g129)"/><path d="M373.6 218.0L371.0 214.3L362.8 219.4L365.2 223.2Z" fill="url(#g133)"/><path d="M315.1 219.5L313.6 215.6L304.0 218.2L305.2 222.2Z" fill="url(#g27)"/><path d="M334.1 223.2L335.9 219.2L326.8 214.7L324.7 218.6Z" fill="url(#g23)"/><path d="M376.3 218.5L373.8 214.7L365.4 219.5L367.6 223.4Z" fill="url(#g135)"/><path d="M285.2 218.2L285.2 220.7L284.5 223.2L283.1 225.3L281.3 227.1L279.0 228.3L276.5 228.9L273.9 228.8L271.4 228.1L269.1 226.8L267.3 225.0L266.0 222.7L265.3 220.2L265.3 217.7L266.0 215.2L267.3 213.0L269.2 211.3L271.5 210.0L274.1 209.5L276.7 209.5L279.2 210.3L281.5 211.6L283.3 213.5L284.6 215.7Z" fill="#f81800"/><path d="M349.8 224.2L349.9 221.6L350.6 213.4L359.1 213.5L361.8 213.6L364.3 214.5L366.5 215.9L368.3 217.8L369.6 220.2L370.1 222.7L370.0 225.3L369.2 227.7L367.8 229.9L365.9 231.6L363.5 232.8L360.9 233.3L358.3 233.2L355.7 232.4L353.5 231.0L351.7 229.1L350.4 226.8Z" fill="url(#g126)"/><path d="M302.1 217.9L298.3 214.3L291.1 220.7L294.6 224.6Z" fill="url(#g29)"/><path d="M378.7 219.2L376.4 215.3L367.7 219.7L369.8 223.8Z" fill="url(#g137)"/><path d="M325.5 222.4L325.8 218.5L315.7 217.0L315.2 220.9Z" fill="url(#g25)"/><path d="M383.2 219.8L382.9 222.0L381.6 223.7L379.7 224.8L377.5 224.9L375.4 224.1L373.9 222.4L373.2 220.4L373.5 218.2L374.7 216.4L376.7 215.4L378.9 215.3L381.0 216.1L382.5 217.7Z" fill="#7c0c00"/><path d="M380.9 220.1L378.7 216.1L369.8 220.2L371.8 224.3Z" fill="url(#g139)"/><path d="M370.4 219.5L370.3 222.0L369.5 224.4L368.1 226.6L366.2 228.3L363.9 229.4L361.3 229.9L358.7 229.8L356.2 229.0L354.0 227.6L352.2 225.7L351.0 223.4L350.4 220.9L350.5 218.3L351.3 215.9L352.7 213.8L354.6 212.1L357.0 210.9L359.5 210.4L362.2 210.6L364.7 211.4L366.9 212.8L368.6 214.7L369.8 217.0Z" fill="#fb1900"/><path d="M283.7 218.3L277.4 214.8L272.4 223.1L278.5 226.9Z" fill="url(#g35)"/><path d="M285.5 218.7L279.4 215.2L274.3 223.5L280.3 227.2Z" fill="url(#g31)"/><path d="M241.0 216.1L260.3 214.7L263.0 214.8L265.5 215.5L267.8 216.8L269.6 218.7L270.9 221.0L271.6 223.5L271.6 226.1L270.9 228.6L269.6 230.9L267.8 232.7L265.5 234.0L263.0 234.7L260.3 234.7L257.8 234.0L255.5 232.7L253.6 230.8Z" fill="url(#g38)"/><path d="M382.9 221.2L381.1 217.5L371.9 221.2L373.5 225.0Z" fill="url(#g141)"/><path d="M267.7 220.4L267.7 223.0L267.1 225.5L265.8 227.7L263.9 229.5L261.7 230.7L259.2 231.4L256.6 231.4L254.1 230.7L251.8 229.4L249.9 227.6L248.6 225.3L247.9 222.8L247.9 220.2L248.6 217.7L249.9 215.4L251.8 213.6L254.1 212.4L256.6 211.7L259.2 211.8L261.7 212.5L264.0 213.8L265.8 215.7L267.1 217.9Z" fill="#f41800"/><path d="M370.3 220.5L367.2 216.8L359.4 222.8L362.3 226.5Z" fill="url(#g129)"/><path d="M373.2 220.8L370.3 217.0L362.2 222.6L364.9 226.5Z" fill="url(#g131)"/><path d="M367.2 220.3L364.0 216.8L356.4 223.0L359.5 226.7Z" fill="url(#g127)"/><path d="M375.9 221.2L373.2 217.4L364.9 222.6L367.4 226.6Z" fill="url(#g133)"/><path d="M316.3 223.0L314.8 219.0L305.1 221.6L306.3 225.7Z" fill="url(#g27)"/><path d="M378.5 221.9L375.9 218.0L367.3 222.8L369.7 226.9Z" fill="url(#g135)"/><path d="M332.4 226.8L334.3 222.7L325.1 218.0L322.9 222.1Z" fill="url(#g23)"/><path d="M349.4 216.5L358.9 216.7L361.6 216.8L364.2 217.7L366.5 219.1L368.3 221.1L369.5 223.4L370.1 226.0L370.0 228.6L369.2 231.1L367.8 233.3L365.8 235.1L363.4 236.3L360.8 236.9L358.1 236.8L355.5 236.0L353.2 234.5L351.4 232.6L350.1 230.2L349.5 227.6Z" fill="url(#g124)"/><path d="M305.4 221.2L301.5 217.4L294.1 224.0L297.8 228.0Z" fill="url(#g29)"/><path d="M383.1 222.5L382.8 224.7L381.5 226.5L379.6 227.5L377.3 227.7L375.2 226.8L373.7 225.2L373.0 223.1L373.3 220.9L374.5 219.1L376.5 218.0L378.8 217.9L380.9 218.7L382.5 220.4Z" fill="#7c0c00"/><path d="M380.8 222.7L378.4 218.7L369.5 223.2L371.7 227.3Z" fill="url(#g137)"/><path d="M325.2 225.8L325.5 221.8L315.3 220.3L314.7 224.3Z" fill="url(#g25)"/><path d="M267.3 220.2L259.3 216.8L255.4 225.9L263.4 229.4Z" fill="url(#g33)"/><path d="M370.1 222.7L370.0 225.3L369.2 227.7L367.8 229.9L365.9 231.6L363.5 232.8L360.9 233.3L358.3 233.2L355.7 232.4L353.5 231.0L351.7 229.1L350.4 226.8L349.8 224.2L349.9 221.6L350.7 219.1L352.1 216.9L354.1 215.2L356.5 214.0L359.1 213.5L361.8 213.6L364.3 214.5L366.5 215.9L368.3 217.8L369.6 220.2Z" fill="#fa1900"/><path d="M382.8 223.7L380.6 219.5L371.5 223.7L373.5 228.0Z" fill="url(#g139)"/><path d="M289.3 221.5L282.8 217.8L277.7 226.3L284.1 230.2Z" fill="url(#g35)"/><path d="M290.9 221.8L284.6 218.2L279.4 226.6L285.6 230.5Z" fill="url(#g31)"/><path d="M271.6 223.5L271.6 226.1L270.9 228.6L269.6 230.9L267.8 232.7L265.5 234.0L263.0 234.7L260.3 234.7L257.8 234.0L255.5 232.7L253.6 230.8L252.2 228.5L251.6 226.0L251.5 223.3L252.2 220.8L253.6 218.5L255.5 216.7L257.8 215.4L260.3 214.7L263.0 214.8L265.5 215.5L267.8 216.8L269.6 218.7L270.9 221.0Z" fill="#f41800"/><path d="M370.0 223.5L366.7 219.8L359.0 226.1L362.2 230.0Z" fill="url(#g127)"/><path d="M373.0 223.7L369.8 219.9L361.8 225.9L364.8 229.8Z" fill="url(#g129)"/><path d="M375.8 224.1L372.8 220.2L364.5 225.9L367.3 229.9Z" fill="url(#g131)"/><path d="M367.5 223.9L363.5 219.8L356.0 226.5L359.9 230.8Z" fill="url(#g125)"/><path d="M378.4 224.7L375.5 220.7L367.0 226.0L369.7 230.1Z" fill="url(#g133)"/><path d="M383.2 225.3L382.8 227.5L381.6 229.3L379.6 230.4L377.3 230.5L375.1 229.7L373.6 228.0L372.9 225.9L373.2 223.7L374.5 221.8L376.5 220.7L378.8 220.6L380.9 221.4L382.5 223.1Z" fill="#7c0c00"/><path d="M380.7 225.4L378.1 221.3L369.3 226.3L371.8 230.5Z" fill="url(#g135)"/><path d="M348.4 219.6L359.0 220.0L361.7 220.1L364.4 221.0L366.7 222.4L368.5 224.4L369.8 226.8L370.4 229.4L370.3 232.1L369.4 234.7L368.0 236.9L366.0 238.7L363.6 240.0L360.9 240.5L358.2 240.4L355.5 239.6L353.2 238.2L351.3 236.2L350.1 233.8L349.4 231.2Z" fill="url(#g122)"/><path d="M317.7 226.7L316.1 222.4L306.2 225.2L307.5 229.5Z" fill="url(#g27)"/><path d="M330.7 230.5L332.7 226.2L323.2 221.5L321.0 225.7Z" fill="url(#g23)"/><path d="M274.5 223.1L266.2 219.7L262.3 228.9L270.5 232.5Z" fill="url(#g33)"/><path d="M308.8 224.7L304.8 220.7L297.3 227.4L301.1 231.5Z" fill="url(#g29)"/><path d="M271.5 223.4L263.0 219.9L259.1 229.1L267.6 232.8Z" fill="url(#g37)"/><path d="M325.0 229.4L325.3 225.2L314.8 223.7L314.3 227.9Z" fill="url(#g25)"/><path d="M382.9 226.4L380.4 222.1L371.4 226.7L373.7 231.1Z" fill="url(#g137)"/><path d="M225.7 221.6L249.8 219.9L252.4 219.9L255.0 220.6L257.3 221.9L259.2 223.8L260.5 226.1L261.2 228.7L261.2 231.4L260.5 234.0L259.2 236.3L257.4 238.3L255.1 239.6L252.6 240.4L249.9 240.4L247.4 239.8L245.0 238.4Z" fill="url(#g40)"/><path d="M370.1 226.0L370.0 228.6L369.2 231.1L367.8 233.3L365.8 235.1L363.4 236.3L360.8 236.9L358.1 236.8L355.5 236.0L353.2 234.5L351.4 232.6L350.1 230.2L349.5 227.6L349.6 225.0L350.4 222.5L351.9 220.2L353.8 218.4L356.3 217.2L358.9 216.7L361.6 216.8L364.2 217.7L366.5 219.1L368.3 221.1L369.5 223.4Z" fill="#fa1800"/><path d="M295.1 224.8L288.4 221.0L283.2 229.6L289.8 233.6Z" fill="url(#g35)"/><path d="M296.5 225.1L290.0 221.3L284.7 229.9L291.1 233.8Z" fill="url(#g31)"/><path d="M373.0 226.7L369.5 222.9L361.7 229.4L365.0 233.3Z" fill="url(#g127)"/><path d="M375.8 227.0L372.5 223.1L364.4 229.2L367.5 233.3Z" fill="url(#g129)"/><path d="M378.4 227.5L375.3 223.5L366.9 229.3L369.8 233.4Z" fill="url(#g131)"/><path d="M383.3 228.1L383.0 230.3L381.7 232.2L379.7 233.3L377.4 233.4L375.2 232.6L373.6 230.9L372.9 228.7L373.2 226.5L374.5 224.6L376.5 223.5L378.8 223.4L381.0 224.2L382.6 225.9Z" fill="#7c0c00"/><path d="M367.5 227.1L363.2 223.0L355.9 230.1L360.0 234.4Z" fill="url(#g123)"/><path d="M380.9 228.2L377.9 224.1L369.3 229.5L372.0 233.8Z" fill="url(#g133)"/><path d="M371.1 227.6L366.9 223.4L359.3 230.2L363.3 234.6Z" fill="url(#g125)"/><path d="M281.9 226.2L273.3 222.6L269.3 232.0L277.8 235.7Z" fill="url(#g33)"/><path d="M347.7 222.9L359.4 223.4L362.2 223.5L364.8 224.4L367.2 225.9L369.1 227.9L370.3 230.3L370.9 233.0L370.8 235.7L370.0 238.3L368.5 240.6L366.5 242.4L364.0 243.7L361.3 244.3L358.6 244.2L355.9 243.4L353.5 242.0L351.6 240.0L350.3 237.5L349.7 234.8Z" fill="url(#g120)"/><path d="M279.2 226.5L270.3 222.9L266.4 232.3L275.2 236.1Z" fill="url(#g37)"/><path d="M383.1 229.1L380.3 224.8L371.4 229.9L373.9 234.3Z" fill="url(#g135)"/><path d="M312.4 228.2L308.3 224.1L300.6 231.0L304.6 235.2Z" fill="url(#g29)"/><path d="M319.1 230.5L317.5 226.1L307.3 228.8L308.7 233.3Z" fill="url(#g27)"/><path d="M328.9 234.4L331.0 229.9L321.3 225.1L319.0 229.5Z" fill="url(#g23)"/><path d="M261.2 228.7L261.2 231.4L260.5 234.0L259.2 236.3L257.4 238.3L255.1 239.6L252.6 240.4L249.9 240.4L247.4 239.8L245.0 238.4L243.1 236.6L241.8 234.2L241.0 231.6L241.0 228.9L241.7 226.2L243.0 223.9L244.9 221.9L247.2 220.6L249.8 219.9L252.4 219.9L255.0 220.6L257.3 221.9L259.2 223.8L260.5 226.1Z" fill="#f01700"/><path d="M324.7 233.1L325.0 228.8L314.3 227.2L313.8 231.6Z" fill="url(#g25)"/><path d="M370.4 229.4L370.3 232.1L369.4 234.7L368.0 236.9L366.0 238.7L363.6 240.0L360.9 240.5L358.2 240.4L355.5 239.6L353.2 238.2L351.3 236.2L350.1 233.8L349.4 231.2L349.5 228.5L350.3 225.9L351.8 223.6L353.9 221.8L356.3 220.6L359.0 220.0L361.7 220.1L364.4 221.0L366.7 222.4L368.5 224.4L369.8 226.8Z" fill="#f91800"/><path d="M301.1 228.2L294.2 224.3L288.9 233.1L295.7 237.2Z" fill="url(#g35)"/><path d="M302.3 228.4L295.6 224.5L290.2 233.3L296.8 237.4Z" fill="url(#g31)"/><path d="M376.0 230.0L372.4 226.1L364.4 232.7L367.8 236.7Z" fill="url(#g127)"/><path d="M383.6 231.0L383.3 233.3L382.0 235.2L379.9 236.3L377.6 236.5L375.4 235.6L373.7 233.9L373.0 231.7L373.3 229.4L374.7 227.5L376.7 226.4L379.1 226.2L381.3 227.1L382.9 228.8Z" fill="#7c0c00"/><path d="M378.6 230.4L375.3 226.4L367.0 232.6L370.2 236.8Z" fill="url(#g129)"/><path d="M262.6 228.4L252.1 225.0L248.9 234.8L259.3 238.4Z" fill="url(#g39)"/><path d="M381.1 231.0L377.9 226.9L369.4 232.8L372.4 237.1Z" fill="url(#g131)"/><path d="M367.9 230.4L363.2 226.3L356.0 233.7L360.5 238.1Z" fill="url(#g121)"/><path d="M371.4 230.8L366.9 226.5L359.4 233.7L363.8 238.2Z" fill="url(#g123)"/><path d="M289.5 229.4L280.6 225.7L276.6 235.2L285.4 239.1Z" fill="url(#g33)"/><path d="M383.4 231.9L380.4 227.6L371.6 233.1L374.4 237.5Z" fill="url(#g133)"/><path d="M287.1 229.7L277.9 226.0L273.9 235.5L283.0 239.5Z" fill="url(#g37)"/><path d="M374.8 231.5L370.5 227.0L362.7 234.0L366.9 238.6Z" fill="url(#g125)"/><path d="M347.2 226.3L363.1 227.1L365.8 227.9L368.2 229.4L370.1 231.4L371.4 233.9L372.0 236.6L371.9 239.4L371.0 242.0L369.5 244.4L367.5 246.3L365.0 247.6L362.2 248.2L359.4 248.1L356.7 247.3L354.3 245.9L352.4 243.8L351.1 241.4Z" fill="url(#g118)"/><path d="M316.1 231.9L311.8 227.6L304.0 234.6L308.2 239.1Z" fill="url(#g29)"/><path d="M320.5 234.4L318.9 229.8L308.5 232.7L309.9 237.3Z" fill="url(#g27)"/><path d="M327.0 238.4L329.2 233.7L319.4 228.8L316.9 233.4Z" fill="url(#g23)"/><path d="M370.9 233.0L370.8 235.7L370.0 238.3L368.5 240.6L366.5 242.4L364.0 243.7L361.3 244.3L358.6 244.2L355.9 243.4L353.5 242.0L351.6 240.0L350.3 237.5L349.7 234.8L349.8 232.1L350.6 229.5L352.1 227.1L354.2 225.3L356.7 224.0L359.4 223.4L362.2 223.5L364.8 224.4L367.2 225.9L369.1 227.9L370.3 230.3Z" fill="#f91800"/><path d="M324.4 237.0L324.7 232.5L313.9 230.9L313.3 235.4Z" fill="url(#g25)"/><path d="M307.4 231.7L300.1 227.6L294.8 236.6L301.9 240.9Z" fill="url(#g35)"/><path d="M308.3 231.9L301.3 227.9L295.8 236.8L302.7 241.0Z" fill="url(#g31)"/><path d="M384.1 234.0L383.7 236.3L382.4 238.2L380.3 239.4L378.0 239.6L375.7 238.7L374.1 237.0L373.3 234.7L373.7 232.4L375.0 230.5L377.1 229.3L379.5 229.2L381.7 230.0L383.4 231.8Z" fill="#7c0c00"/><path d="M271.9 231.5L261.1 228.0L257.8 237.9L268.6 241.7Z" fill="url(#g39)"/><path d="M379.1 233.5L375.4 229.4L367.3 236.1L370.8 240.3Z" fill="url(#g127)"/><path d="M381.6 234.0L378.1 229.8L369.7 236.2L373.1 240.5Z" fill="url(#g129)"/><path d="M384.0 234.7L380.7 230.4L372.0 236.4L375.1 240.9Z" fill="url(#g131)"/><path d="M297.4 232.6L288.2 228.8L284.1 238.5L293.2 242.5Z" fill="url(#g33)"/><path d="M368.6 233.9L363.5 229.7L356.5 237.5L361.4 241.9Z" fill="url(#g119)"/><path d="M372.0 234.2L367.2 229.8L359.9 237.4L364.6 241.9Z" fill="url(#g121)"/><path d="M295.2 233.0L285.8 229.2L281.7 238.9L291.1 243.0Z" fill="url(#g37)"/><path d="M375.4 234.7L370.8 230.2L363.1 237.6L367.6 242.2Z" fill="url(#g123)"/><path d="M347.2 229.8L364.6 230.7L367.3 231.5L369.7 233.0L371.7 235.1L373.0 237.6L373.6 240.4L373.5 243.2L372.6 245.9L371.1 248.3L369.0 250.2L366.5 251.5L363.7 252.2L360.9 252.1L358.1 251.3L355.7 249.9L353.7 247.8L352.4 245.3Z" fill="url(#g116)"/><path d="M378.7 235.4L374.2 230.8L366.3 237.9L370.6 242.7Z" fill="url(#g125)"/><path d="M320.0 235.8L315.5 231.3L307.6 238.4L311.9 243.1Z" fill="url(#g29)"/><path d="M384.7 237.1L384.4 239.4L383.1 241.4L381.0 242.6L378.5 242.7L376.3 241.9L374.6 240.1L373.8 237.9L374.2 235.5L375.5 233.6L377.6 232.4L380.1 232.2L382.4 233.1L384.0 234.8Z" fill="#7c0c00"/><path d="M372.0 236.6L371.9 239.4L371.0 242.0L369.5 244.4L367.5 246.3L365.0 247.6L362.2 248.2L359.4 248.1L356.7 247.3L354.3 245.9L352.4 243.8L351.1 241.4L350.4 238.6L350.5 235.8L351.4 233.1L352.9 230.8L355.0 228.9L357.5 227.6L360.3 226.9L363.1 227.1L365.8 227.9L368.2 229.4L370.1 231.4L371.4 233.9Z" fill="#f81800"/><path d="M322.1 238.5L320.3 233.8L309.7 236.7L311.2 241.5Z" fill="url(#g27)"/><path d="M325.1 242.6L327.4 237.7L317.3 232.7L314.8 237.5Z" fill="url(#g23)"/><path d="M324.1 241.0L324.4 236.3L313.3 234.7L312.7 239.4Z" fill="url(#g25)"/><path d="M313.9 235.4L306.4 231.1L300.9 240.3L308.3 244.7Z" fill="url(#g35)"/><path d="M281.6 234.7L270.4 231.0L267.1 241.2L278.2 245.0Z" fill="url(#g39)"/><path d="M314.5 235.5L307.3 231.3L301.7 240.4L308.8 244.8Z" fill="url(#g31)"/><path d="M382.4 237.0L378.5 232.8L370.3 239.7L373.9 244.0Z" fill="url(#g127)"/><path d="M384.7 237.7L381.1 233.3L372.5 239.9L376.0 244.4Z" fill="url(#g129)"/><path d="M305.6 236.0L296.1 232.1L291.9 241.9L301.3 246.1Z" fill="url(#g33)"/><path d="M369.7 237.4L364.3 233.2L357.4 241.4L362.7 245.8Z" fill="url(#g117)"/><path d="M373.0 237.6L367.8 233.2L360.6 241.2L365.7 245.8Z" fill="url(#g119)"/><path d="M303.7 236.5L293.9 232.5L289.8 242.4L299.5 246.6Z" fill="url(#g37)"/><path d="M376.4 238.0L371.3 233.5L363.9 241.3L368.7 246.0Z" fill="url(#g121)"/><path d="M217.5 234.8L249.2 232.7L251.9 232.7L254.5 233.4L256.9 234.7L258.8 236.7L260.1 239.2L260.9 241.9L260.9 244.8L260.2 247.6L258.9 250.1L257.1 252.2L254.8 253.7L252.2 254.6L249.5 254.7L246.8 254.1L244.5 252.8Z" fill="url(#g42)"/><path d="M379.6 238.7L374.8 234.0L367.0 241.5L371.7 246.4Z" fill="url(#g123)"/><path d="M347.4 233.4L366.6 234.4L369.4 235.2L371.8 236.8L373.8 238.9L375.1 241.4L375.7 244.2L375.6 247.1L374.8 249.8L373.2 252.3L371.1 254.3L368.6 255.6L365.7 256.3L362.8 256.3L360.1 255.5L357.6 254.0L355.6 251.9L354.3 249.4Z" fill="url(#g114)"/><path d="M385.6 240.3L385.3 242.6L383.9 244.6L381.8 245.8L379.3 246.0L377.0 245.2L375.3 243.4L374.6 241.1L374.9 238.7L376.3 236.7L378.4 235.5L380.9 235.3L383.2 236.2L384.9 238.0Z" fill="#7c0c00"/><path d="M382.7 239.6L378.1 234.8L370.0 242.0L374.5 247.0Z" fill="url(#g125)"/><path d="M324.1 239.8L319.4 235.1L311.3 242.4L315.7 247.2Z" fill="url(#g29)"/><path d="M291.6 238.0L280.0 234.2L276.7 244.5L288.2 248.5Z" fill="url(#g39)"/><path d="M373.6 240.4L373.5 243.2L372.6 245.9L371.1 248.3L369.0 250.2L366.5 251.5L363.7 252.2L360.9 252.1L358.1 251.3L355.7 249.9L353.7 247.8L352.4 245.3L351.7 242.5L351.8 239.7L352.7 236.9L354.2 234.5L356.3 232.6L358.9 231.2L361.7 230.6L364.6 230.7L367.3 231.5L369.7 233.0L371.7 235.1L373.0 237.6Z" fill="#f71800"/><path d="M260.2 235.6L287.3 234.6L290.1 234.6L292.8 235.3L295.2 236.8L297.2 238.8L298.6 241.3L299.2 244.1L299.2 247.0L298.5 249.8L297.1 252.3L295.1 254.4L292.7 255.9L290.0 256.7L287.2 256.8L284.5 256.1L282.1 254.7Z" fill="url(#g22)"/><path d="M320.6 239.2L312.8 234.8L307.2 244.1L314.9 248.7Z" fill="url(#g35)"/><path d="M321.0 239.3L313.5 234.9L307.8 244.2L315.2 248.7Z" fill="url(#g31)"/><path d="M323.6 242.8L321.8 237.8L311.0 240.8L312.6 245.9Z" fill="url(#g27)"/><path d="M323.1 247.0L325.4 241.9L315.2 236.8L312.5 241.8Z" fill="url(#g23)"/><path d="M323.7 245.2L324.1 240.3L312.8 238.7L312.2 243.6Z" fill="url(#g25)"/><path d="M385.7 240.8L381.8 236.4L373.4 243.3L377.1 247.9Z" fill="url(#g127)"/><path d="M314.1 239.5L304.2 235.5L300.0 245.5L309.7 249.8Z" fill="url(#g33)"/><path d="M312.5 240.1L302.3 235.9L298.1 246.0L308.1 250.4Z" fill="url(#g37)"/><path d="M374.5 241.1L368.9 236.7L361.9 245.2L367.4 249.7Z" fill="url(#g117)"/><path d="M371.5 241.0L365.6 236.8L358.9 245.5L364.7 249.9Z" fill="url(#g115)"/><path d="M377.7 241.5L372.2 236.9L364.9 245.1L370.2 249.8Z" fill="url(#g119)"/><path d="M380.9 242.0L375.6 237.4L368.0 245.3L373.1 250.1Z" fill="url(#g121)"/><path d="M260.9 241.9L260.9 244.8L260.2 247.6L258.9 250.1L257.1 252.2L254.8 253.7L252.2 254.6L249.5 254.7L246.8 254.1L244.5 252.8L242.5 250.8L241.1 248.3L240.3 245.5L240.3 242.6L241.0 239.8L242.3 237.2L244.2 235.1L246.6 233.6L249.2 232.7L251.9 232.7L254.5 233.4L256.9 234.7L258.8 236.7L260.1 239.2Z" fill="#e81700"/><path d="M386.7 243.5L386.4 245.9L385.0 248.0L382.8 249.2L380.3 249.4L378.0 248.5L376.3 246.8L375.5 244.4L375.9 242.0L377.3 240.0L379.4 238.7L381.9 238.5L384.3 239.4L386.0 241.2Z" fill="#7b0c00"/><path d="M323.7 243.8L323.4 246.2L322.0 248.1L319.9 249.3L317.3 249.4L314.9 248.4L313.1 246.6L312.2 244.2L312.5 241.8L313.9 239.8L316.1 238.7L318.7 238.6L321.1 239.6L322.9 241.4Z" fill="#7c0c00"/><path d="M323.8 243.7L323.5 246.1L322.1 248.1L319.9 249.3L317.3 249.4L314.9 248.5L313.1 246.7L312.2 244.3L312.5 241.9L313.9 239.9L316.1 238.7L318.7 238.6L321.1 239.5L322.9 241.3Z" fill="#7c0c00"/><path d="M323.8 243.6L323.4 246.0L322.1 248.0L319.9 249.2L317.3 249.4L314.9 248.5L313.1 246.7L312.2 244.4L312.5 242.0L313.9 240.0L316.1 238.7L318.7 238.6L321.1 239.5L322.9 241.3Z" fill="#7c0c00"/><path d="M384.0 242.9L378.9 238.0L371.0 245.7L375.9 250.7Z" fill="url(#g123)"/><path d="M347.9 237.2L369.2 238.2L372.0 239.1L374.5 240.6L376.5 242.7L377.8 245.3L378.4 248.2L378.3 251.1L377.4 253.9L375.9 256.4L373.7 258.4L371.2 259.9L368.3 260.6L365.4 260.6L362.6 259.8L360.1 258.3L358.1 256.2Z" fill="url(#g112)"/><path d="M301.9 241.3L290.0 237.4L286.6 247.9L298.4 252.0Z" fill="url(#g39)"/><path d="M387.0 243.9L382.1 238.9L373.8 246.3L378.5 251.5Z" fill="url(#g125)"/><path d="M328.2 243.9L323.4 239.1L315.1 246.5L319.8 251.6Z" fill="url(#g29)"/><path d="M264.8 241.7L251.1 238.1L248.4 248.8L262.0 252.6Z" fill="url(#g41)"/><path d="M375.7 244.2L375.6 247.1L374.8 249.8L373.2 252.3L371.1 254.3L368.6 255.6L365.7 256.3L362.8 256.3L360.1 255.5L357.6 254.0L355.6 251.9L354.3 249.4L353.6 246.6L353.7 243.6L354.6 240.9L356.1 238.4L358.3 236.4L360.9 235.0L363.7 234.3L366.6 234.4L369.4 235.2L371.8 236.8L373.8 238.9L375.1 241.4Z" fill="#f61800"/><path d="M327.6 243.1L319.5 238.6L313.8 248.1L321.8 252.9Z" fill="url(#g35)"/><path d="M327.7 243.2L319.9 238.7L314.1 248.1L321.8 252.8Z" fill="url(#g31)"/><path d="M299.2 244.1L299.2 247.0L298.5 249.8L297.1 252.3L295.1 254.4L292.7 255.9L290.0 256.7L287.2 256.8L284.5 256.1L282.1 254.7L280.1 252.7L278.7 250.2L278.0 247.4L278.0 244.5L278.7 241.6L280.1 239.0L282.2 236.9L284.6 235.4L287.3 234.6L290.1 234.6L292.8 235.3L295.2 236.8L297.2 238.8L298.6 241.3Z" fill="#930e00"/><path d="M322.8 243.2L312.7 238.9L308.3 249.2L318.4 253.6Z" fill="url(#g33)"/><path d="M264.7 240.5L294.4 239.6L297.2 239.5L300.0 240.2L302.4 241.7L304.3 243.8L305.7 246.3L306.4 249.1L306.4 252.1L305.6 255.0L304.2 257.6L302.2 259.7L299.8 261.3L297.1 262.1L294.3 262.2L291.6 261.6L289.1 260.2Z" fill="url(#g20)"/><path d="M321.5 243.8L311.0 239.5L306.7 249.8L317.2 254.3Z" fill="url(#g37)"/><path d="M376.7 244.8L370.6 240.3L363.8 249.2L369.8 253.8Z" fill="url(#g115)"/><path d="M379.5 245.0L373.7 240.5L366.6 249.0L372.2 253.8Z" fill="url(#g117)"/><path d="M373.9 244.7L367.4 240.5L361.0 249.6L367.3 254.1Z" fill="url(#g113)"/><path d="M382.5 245.5L376.9 240.8L369.4 249.1L374.9 254.0Z" fill="url(#g119)"/><path d="M388.1 246.9L387.7 249.3L386.3 251.4L384.1 252.7L381.6 252.9L379.2 252.0L377.5 250.2L376.7 247.8L377.1 245.4L378.5 243.3L380.7 242.0L383.2 241.8L385.6 242.7L387.3 244.5Z" fill="#7b0c00"/><path d="M329.4 246.8L329.1 249.3L327.7 251.4L325.5 252.7L323.0 252.9L320.5 252.1L318.7 250.3L317.9 247.9L318.2 245.5L319.6 243.4L321.8 242.1L324.4 241.8L326.8 242.7L328.6 244.5Z" fill="#7b0c00"/><path d="M301.5 244.2L289.7 240.2L286.1 250.7L297.8 255.0Z" fill="url(#g21)"/><path d="M385.5 246.2L380.1 241.4L372.3 249.4L377.6 254.5Z" fill="url(#g121)"/><path d="M312.6 244.8L300.3 240.8L296.8 251.4L309.1 255.7Z" fill="url(#g39)"/><path d="M349.0 241.1L372.5 242.2L375.3 243.0L377.8 244.6L379.8 246.7L381.2 249.3L381.8 252.2L381.7 255.2L380.8 258.1L379.2 260.6L377.1 262.7L374.5 264.2L371.6 265.0L368.6 264.9L365.8 264.2L363.3 262.7L361.3 260.5Z" fill="url(#g110)"/><path d="M276.9 244.8L262.9 241.2L260.1 252.1L274.1 255.9Z" fill="url(#g41)"/><path d="M388.5 247.2L383.2 242.2L375.2 250.0L380.2 255.2Z" fill="url(#g123)"/><path d="M378.4 248.2L378.3 251.1L377.4 253.9L375.9 256.4L373.7 258.4L371.2 259.9L368.3 260.6L365.4 260.6L362.6 259.8L360.1 258.3L358.1 256.2L356.7 253.6L356.0 250.7L356.1 247.8L357.0 244.9L358.6 242.4L360.8 240.3L363.4 238.9L366.3 238.2L369.2 238.2L372.0 239.1L374.5 240.6L376.5 242.7L377.8 245.3Z" fill="#f51800"/><path d="M334.7 247.2L326.6 242.5L320.7 252.1L328.6 257.1Z" fill="url(#g31)"/><path d="M334.9 247.3L326.5 242.5L320.7 252.2L329.0 257.2Z" fill="url(#g35)"/><path d="M332.0 246.9L321.4 242.6L317.0 253.0L327.4 257.6Z" fill="url(#g33)"/><path d="M213.3 244.9L251.2 242.3L253.9 242.2L256.6 242.8L258.9 244.2L260.8 246.3L262.2 248.8L263.0 251.7L263.0 254.7L262.4 257.6L261.1 260.3L259.2 262.5L256.9 264.2L254.3 265.1L251.6 265.3L249.0 264.7Z" fill="url(#g44)"/><path d="M331.0 247.7L320.1 243.2L315.7 253.6L326.5 258.3Z" fill="url(#g37)"/><path d="M306.4 249.1L306.4 252.1L305.6 255.0L304.2 257.6L302.2 259.7L299.8 261.3L297.1 262.1L294.3 262.2L291.6 261.6L289.1 260.2L287.1 258.1L285.7 255.6L285.0 252.7L285.0 249.7L285.7 246.8L287.2 244.1L289.2 242.0L291.7 240.4L294.4 239.6L297.2 239.5L300.0 240.2L302.4 241.7L304.3 243.8L305.7 246.3Z" fill="#920e00"/><path d="M382.0 248.6L375.7 244.1L368.8 253.1L375.0 257.8Z" fill="url(#g115)"/><path d="M389.7 250.3L389.4 252.8L388.0 254.9L385.7 256.2L383.2 256.4L380.8 255.6L379.0 253.8L378.2 251.4L378.6 248.9L380.0 246.7L382.3 245.4L384.8 245.2L387.2 246.1L389.0 247.9Z" fill="#7b0c00"/><path d="M379.5 248.5L372.8 244.0L366.3 253.3L372.8 258.0Z" fill="url(#g113)"/><path d="M384.7 249.0L378.6 244.3L371.4 253.1L377.3 258.0Z" fill="url(#g117)"/><path d="M312.1 247.9L299.9 243.7L296.1 254.4L308.3 258.8Z" fill="url(#g21)"/><path d="M387.5 249.7L381.7 244.8L374.1 253.3L379.8 258.4Z" fill="url(#g119)"/><path d="M378.0 249.3L369.8 244.3L363.7 253.9L371.7 259.1Z" fill="url(#g111)"/><path d="M271.3 245.4L303.5 244.5L306.4 244.4L309.1 245.2L311.6 246.6L313.5 248.7L314.9 251.3L315.6 254.2L315.5 257.2L314.8 260.2L313.4 262.8L311.4 265.0L308.9 266.7L306.2 267.6L303.4 267.7L300.7 267.0L298.2 265.6Z" fill="url(#g18)"/><path d="M289.5 248.1L275.0 244.3L272.2 255.4L286.6 259.3Z" fill="url(#g41)"/><path d="M323.7 248.5L310.9 244.3L307.3 255.1L320.1 259.5Z" fill="url(#g39)"/><path d="M336.8 251.1L336.5 253.6L335.1 255.8L332.9 257.2L330.4 257.5L328.0 256.7L326.2 254.9L325.4 252.5L325.7 250.0L327.1 247.8L329.2 246.4L331.8 246.1L334.2 246.9L336.0 248.7Z" fill="#790c00"/><path d="M342.2 245.6L379.2 245.0L381.8 245.7L384.0 247.2L385.9 249.3L387.1 251.9L387.7 254.8L387.6 257.8L386.8 260.8L385.4 263.4L383.5 265.6L381.1 267.3L378.4 268.1L375.7 268.3L373.1 267.6L370.8 266.2Z" fill="url(#g96)"/><path d="M390.4 250.6L384.7 245.5L376.8 253.7L382.3 259.0Z" fill="url(#g121)"/><path d="M350.6 245.1L376.6 246.2L379.4 247.1L381.9 248.6L383.9 250.8L385.3 253.4L385.9 256.4L385.8 259.4L384.9 262.3L383.3 265.0L381.2 267.1L378.5 268.6L375.7 269.4L372.7 269.5L369.8 268.7L367.3 267.2L365.2 265.0Z" fill="url(#g108)"/><path d="M309.6 249.3L296.7 245.2L293.1 256.1L305.9 260.5Z" fill="url(#g19)"/><path d="M381.8 252.2L381.7 255.2L380.8 258.1L379.2 260.6L377.1 262.7L374.5 264.2L371.6 265.0L368.6 264.9L365.8 264.2L363.3 262.7L361.3 260.5L359.9 257.9L359.2 255.0L359.3 252.0L360.2 249.1L361.8 246.5L364.0 244.3L366.6 242.9L369.5 242.1L372.5 242.2L375.3 243.0L377.8 244.6L379.8 246.7L381.2 249.3Z" fill="#f31800"/><path d="M263.0 251.7L263.0 254.7L262.4 257.6L261.1 260.3L259.2 262.5L256.9 264.2L254.3 265.1L251.6 265.3L249.0 264.7L246.6 263.4L244.6 261.4L243.2 258.8L242.4 255.9L242.4 252.8L243.0 249.8L244.3 247.1L246.2 244.9L248.6 243.2L251.2 242.3L253.9 242.2L256.6 242.8L258.9 244.2L260.8 246.3L262.2 248.8Z" fill="#e21600"/><path d="M341.4 250.9L330.4 246.3L325.9 256.9L336.8 261.7Z" fill="url(#g33)"/><path d="M342.5 251.5L333.7 246.6L327.8 256.5L336.5 261.7Z" fill="url(#g35)"/><path d="M391.8 253.9L391.4 256.4L390.0 258.5L387.7 259.9L385.1 260.1L382.7 259.2L380.9 257.4L380.1 255.0L380.5 252.4L381.9 250.3L384.2 248.9L386.8 248.7L389.2 249.6L391.0 251.4Z" fill="#7b0c00"/><path d="M340.8 251.7L329.4 247.0L325.0 257.7L336.2 262.5Z" fill="url(#g37)"/><path d="M385.3 252.3L378.4 247.8L371.8 257.2L378.5 262.0Z" fill="url(#g113)"/><path d="M360.4 248.0L397.2 247.8L399.8 248.6L402.1 250.1L404.0 252.2L405.2 254.8L405.8 257.8L405.7 260.8L404.9 263.8L403.4 266.5L401.4 268.8L399.0 270.4L396.3 271.3L393.6 271.4L390.9 270.7L388.6 269.2Z" fill="url(#g94)"/><path d="M387.6 252.7L381.0 247.9L374.0 257.1L380.5 262.1Z" fill="url(#g115)"/><path d="M323.0 251.7L310.4 247.3L306.6 258.2L319.2 262.8Z" fill="url(#g21)"/><path d="M302.4 251.4L287.4 247.6L284.6 258.8L299.5 262.9Z" fill="url(#g41)"/><path d="M390.1 253.2L383.8 248.3L376.4 257.2L382.5 262.4Z" fill="url(#g117)"/><path d="M269.1 251.4L252.9 247.8L250.5 259.2L266.7 263.0Z" fill="url(#g43)"/><path d="M335.2 252.2L321.9 247.9L318.3 258.9L331.5 263.5Z" fill="url(#g39)"/><path d="M211.9 250.4L253.3 247.6L256.0 247.4L258.6 248.1L261.0 249.5L262.9 251.6L264.3 254.1L265.0 257.1L265.1 260.1L264.4 263.2L263.2 265.9L261.3 268.2L259.0 269.9L256.5 271.0L253.8 271.2L251.2 270.6Z" fill="url(#g46)"/><path d="M381.8 253.2L372.9 248.2L367.0 258.2L375.8 263.5Z" fill="url(#g109)"/><path d="M392.8 254.1L386.6 249.0L378.9 257.6L384.8 262.9Z" fill="url(#g119)"/><path d="M343.9 255.1L343.6 257.7L342.2 259.9L340.1 261.3L337.7 261.7L335.3 261.0L333.5 259.2L332.7 256.8L333.0 254.2L334.4 251.9L336.5 250.5L339.0 250.1L341.3 250.9L343.1 252.7Z" fill="#770c00"/><path d="M315.6 254.2L315.5 257.2L314.8 260.2L313.4 262.8L311.4 265.0L308.9 266.7L306.2 267.6L303.4 267.7L300.7 267.0L298.2 265.6L296.2 263.6L294.8 261.0L294.0 258.0L294.0 254.9L294.8 251.9L296.2 249.2L298.3 247.0L300.8 245.4L303.5 244.5L306.4 244.4L309.1 245.2L311.6 246.6L313.5 248.7L314.9 251.3Z" fill="#900e00"/><path d="M385.4 253.8L376.8 248.6L370.6 258.4L379.0 263.8Z" fill="url(#g111)"/><path d="M344.6 255.5L344.3 258.1L342.9 260.3L340.7 261.7L338.2 262.0L335.7 261.2L333.9 259.4L333.1 257.0L333.4 254.4L334.8 252.2L337.0 250.8L339.6 250.4L342.0 251.3L343.8 253.1Z" fill="#790c00"/><path d="M321.1 253.1L307.7 248.8L304.1 259.8L317.4 264.4Z" fill="url(#g19)"/><path d="M387.7 254.8L387.6 257.8L386.8 260.8L385.4 263.4L383.5 265.6L381.1 267.3L378.4 268.1L375.7 268.3L373.1 267.6L370.8 266.2L368.9 264.1L367.6 261.5L367.0 258.5L367.1 255.4L367.9 252.4L369.3 249.7L371.3 247.5L373.8 245.9L376.4 245.0L379.2 245.0L381.8 245.7L384.0 247.2L385.9 249.3L387.1 251.9Z" fill="#e51600"/><path d="M352.5 249.3L381.4 250.4L384.2 251.2L386.7 252.8L388.7 255.0L390.1 257.7L390.7 260.6L390.6 263.7L389.7 266.7L388.1 269.4L385.9 271.6L383.3 273.2L380.4 274.1L377.4 274.1L374.6 273.3L372.0 271.8L370.0 269.6Z" fill="url(#g106)"/><path d="M384.6 249.7L420.1 250.1L422.8 250.9L425.1 252.4L427.0 254.6L428.2 257.3L428.8 260.2L428.6 263.3L427.8 266.3L426.2 269.0L424.2 271.3L421.7 272.9L418.9 273.8L416.1 273.9L413.5 273.1L411.1 271.7Z" fill="url(#g92)"/><path d="M278.9 250.5L316.6 249.5L319.4 250.2L321.8 251.7L323.8 253.8L325.1 256.5L325.8 259.4L325.8 262.5L325.0 265.5L323.6 268.3L321.6 270.6L319.2 272.2L316.4 273.2L313.6 273.3L310.8 272.7L308.4 271.3Z" fill="url(#g16)"/><path d="M385.9 256.4L385.8 259.4L384.9 262.3L383.3 265.0L381.2 267.1L378.5 268.6L375.7 269.4L372.7 269.5L369.8 268.7L367.3 267.2L365.2 265.0L363.8 262.4L363.2 259.4L363.3 256.3L364.2 253.3L365.8 250.7L368.0 248.5L370.7 247.0L373.6 246.2L376.6 246.2L379.4 247.1L381.9 248.6L383.9 250.8L385.3 253.4Z" fill="#f11800"/><path d="M319.6 254.5L305.7 250.2L302.2 261.4L316.1 265.9Z" fill="url(#g17)"/><path d="M394.2 257.5L393.8 260.1L392.4 262.3L390.1 263.6L387.5 263.9L385.0 263.0L383.2 261.2L382.4 258.7L382.8 256.1L384.3 253.9L386.6 252.5L389.2 252.3L391.6 253.2L393.4 255.0Z" fill="#7a0c00"/><path d="M283.5 254.6L266.8 250.9L264.4 262.4L281.0 266.3Z" fill="url(#g43)"/><path d="M392.8 255.2L378.1 250.7L374.8 262.0L389.3 266.7Z" fill="url(#g95)"/><path d="M315.8 254.9L300.3 250.9L297.4 262.3L312.9 266.6Z" fill="url(#g41)"/><path d="M391.3 256.3L384.2 251.6L377.4 261.2L384.4 266.2Z" fill="url(#g113)"/><path d="M350.9 255.8L339.2 251.0L334.6 261.8L346.3 266.9Z" fill="url(#g37)"/><path d="M334.4 255.6L321.3 251.1L317.4 262.2L330.4 266.9Z" fill="url(#g21)"/><path d="M393.4 256.8L386.6 251.9L379.4 261.3L386.1 266.4Z" fill="url(#g115)"/><path d="M265.0 257.1L265.1 260.1L264.4 263.2L263.2 265.9L261.3 268.2L259.0 269.9L256.5 271.0L253.8 271.2L251.2 270.6L248.8 269.2L246.8 267.2L245.3 264.6L244.6 261.6L244.5 258.5L245.1 255.4L246.4 252.6L248.3 250.3L250.7 248.5L253.3 247.6L256.0 247.4L258.6 248.1L261.0 249.5L262.9 251.6L264.3 254.1Z" fill="#de1600"/><path d="M347.0 256.1L333.3 251.6L329.6 262.8L343.3 267.6Z" fill="url(#g39)"/><path d="M405.8 257.8L405.7 260.8L404.9 263.8L403.4 266.5L401.4 268.8L399.0 270.4L396.3 271.3L393.6 271.4L390.9 270.7L388.6 269.2L386.7 267.1L385.4 264.5L384.8 261.5L384.9 258.4L385.7 255.3L387.2 252.6L389.2 250.3L391.7 248.7L394.4 247.9L397.2 247.8L399.8 248.6L402.1 250.1L404.0 252.2L405.2 254.8Z" fill="#e61700"/><path d="M395.7 257.6L389.1 252.5L381.6 261.6L388.0 266.9Z" fill="url(#g117)"/><path d="M386.4 257.3L376.7 252.3L371.2 262.7L380.7 267.9Z" fill="url(#g107)"/><path d="M389.7 257.7L380.5 252.5L374.5 262.7L383.6 268.2Z" fill="url(#g109)"/><path d="M401.4 252.7L437.0 253.6L439.7 254.4L442.1 255.9L444.0 258.1L445.2 260.9L445.8 263.9L445.6 267.0L444.7 270.1L443.1 272.8L441.0 275.1L438.5 276.7L435.7 277.6L432.8 277.7L430.1 276.9L427.7 275.4Z" fill="url(#g90)"/><path d="M333.1 257.0L319.2 252.5L315.6 263.8L329.3 268.5Z" fill="url(#g19)"/><path d="M393.1 258.5L384.2 253.1L377.8 263.1L386.6 268.7Z" fill="url(#g111)"/><path d="M272.4 256.8L254.8 253.2L252.6 264.9L270.2 268.7Z" fill="url(#g45)"/><path d="M353.4 260.1L353.1 262.8L351.7 265.0L349.6 266.5L347.1 266.9L344.7 266.2L342.9 264.4L342.1 261.9L342.4 259.2L343.8 256.9L346.0 255.5L348.5 255.1L350.9 255.9L352.6 257.7Z" fill="#760c00"/><path d="M354.4 253.7L386.7 254.7L389.6 255.5L392.1 257.0L394.1 259.3L395.5 262.0L396.1 265.0L396.0 268.2L395.1 271.2L393.5 274.0L391.3 276.3L388.7 277.9L385.8 278.8L382.8 278.9L379.9 278.1L377.4 276.6Z" fill="url(#g104)"/><path d="M325.8 259.4L325.8 262.5L325.0 265.5L323.6 268.3L321.6 270.6L319.2 272.2L316.4 273.2L313.6 273.3L310.8 272.7L308.4 271.3L306.3 269.2L304.9 266.5L304.2 263.5L304.2 260.4L305.0 257.3L306.4 254.5L308.5 252.2L311.0 250.5L313.8 249.6L316.6 249.5L319.4 250.2L321.8 251.7L323.8 253.8L325.1 256.5Z" fill="#8f0e00"/><path d="M410.8 258.3L396.2 253.6L392.6 265.0L407.1 269.9Z" fill="url(#g93)"/><path d="M298.3 257.8L281.1 254.0L278.7 265.7L295.8 269.7Z" fill="url(#g43)"/><path d="M332.1 258.3L317.7 253.9L314.1 265.3L328.5 270.0Z" fill="url(#g17)"/><path d="M397.3 261.2L396.9 263.8L395.4 266.1L393.1 267.5L390.5 267.7L388.0 266.9L386.2 265.0L385.4 262.5L385.7 259.9L387.2 257.6L389.5 256.2L392.2 255.9L394.7 256.8L396.5 258.7Z" fill="#7a0c00"/><path d="M428.8 260.2L428.6 263.3L427.8 266.3L426.2 269.0L424.2 271.3L421.7 272.9L418.9 273.8L416.1 273.9L413.5 273.1L411.1 271.7L409.2 269.5L407.9 266.8L407.3 263.8L407.4 260.7L408.3 257.6L409.8 254.9L411.9 252.6L414.5 251.0L417.3 250.1L420.1 250.1L422.8 250.9L425.1 252.4L427.0 254.6L428.2 257.3Z" fill="#e71700"/><path d="M390.7 260.6L390.6 263.7L389.7 266.7L388.1 269.4L385.9 271.6L383.3 273.2L380.4 274.1L377.4 274.1L374.6 273.3L372.0 271.8L370.0 269.6L368.5 267.0L367.9 263.9L368.0 260.8L368.9 257.7L370.5 255.0L372.7 252.8L375.4 251.2L378.4 250.4L381.4 250.4L384.2 251.2L386.7 252.8L388.7 255.0L390.1 257.7Z" fill="#ef1700"/><path d="M329.6 258.5L313.7 254.4L310.7 266.0L326.6 270.3Z" fill="url(#g41)"/><path d="M405.9 259.2L390.7 254.5L387.3 266.0L402.4 270.9Z" fill="url(#g95)"/><path d="M397.6 260.5L390.2 255.6L383.3 265.4L390.6 270.6Z" fill="url(#g113)"/><path d="M346.2 259.7L332.6 255.0L328.6 266.3L342.1 271.2Z" fill="url(#g21)"/><path d="M282.9 256.6L324.5 255.4L327.2 256.1L329.6 257.6L331.6 259.8L332.9 262.5L333.6 265.5L333.6 268.7L332.8 271.8L331.4 274.6L329.4 277.0L327.0 278.7L324.3 279.7L321.4 279.9L318.7 279.3L316.2 277.9Z" fill="url(#g14)"/><path d="M330.8 259.8L315.8 255.4L312.4 266.9L327.3 271.6Z" fill="url(#g15)"/><path d="M399.5 261.2L392.4 256.1L385.1 265.6L392.0 271.0Z" fill="url(#g115)"/><path d="M359.4 260.2L345.1 255.5L341.4 266.9L355.5 271.8Z" fill="url(#g39)"/><path d="M432.1 260.6L419.2 256.0L415.1 267.3L427.9 272.2Z" fill="url(#g91)"/><path d="M288.0 259.9L269.9 256.3L267.7 268.1L285.8 272.0Z" fill="url(#g45)"/><path d="M391.8 261.4L381.2 256.5L376.0 267.3L386.4 272.5Z" fill="url(#g105)"/><path d="M345.5 261.0L331.1 256.3L327.4 267.8L341.6 272.7Z" fill="url(#g19)"/><path d="M395.0 261.7L384.9 256.5L379.3 267.2L389.1 272.6Z" fill="url(#g107)"/><path d="M412.4 256.8L449.3 258.0L452.0 258.8L454.4 260.4L456.3 262.6L457.6 265.4L458.1 268.5L457.9 271.7L457.0 274.8L455.4 277.6L453.3 279.9L450.7 281.6L447.9 282.5L445.0 282.6L442.2 281.8L439.8 280.3Z" fill="url(#g88)"/><path d="M398.1 262.4L388.4 257.0L382.3 267.4L391.8 273.1Z" fill="url(#g109)"/><path d="M313.6 261.2L295.9 257.3L293.4 269.2L311.1 273.3Z" fill="url(#g43)"/><path d="M445.8 263.9L445.6 267.0L444.7 270.1L443.1 272.8L441.0 275.1L438.5 276.7L435.7 277.6L432.8 277.7L430.1 276.9L427.7 275.4L425.8 273.2L424.5 270.5L423.9 267.5L424.0 264.3L425.0 261.2L426.6 258.4L428.7 256.1L431.3 254.5L434.1 253.6L437.0 253.6L439.7 254.4L442.1 255.9L444.0 258.1L445.2 260.9Z" fill="#e81700"/><path d="M401.2 263.4L391.9 257.7L385.3 267.9L394.5 273.9Z" fill="url(#g111)"/><path d="M361.9 264.7L361.6 267.3L360.3 269.7L358.2 271.3L355.8 271.7L353.5 271.0L351.7 269.2L350.9 266.7L351.2 264.0L352.5 261.6L354.7 260.0L357.1 259.6L359.4 260.3L361.1 262.2Z" fill="#740b00"/><path d="M401.2 265.0L400.8 267.7L399.3 269.9L397.0 271.4L394.3 271.7L391.8 270.8L390.0 268.9L389.1 266.4L389.5 263.7L391.0 261.4L393.4 260.0L396.1 259.7L398.6 260.6L400.4 262.5Z" fill="#7a0c00"/><path d="M345.0 262.3L330.1 257.7L326.5 269.3L341.3 274.2Z" fill="url(#g17)"/><path d="M423.9 262.5L408.8 257.7L405.1 269.2L420.1 274.4Z" fill="url(#g93)"/><path d="M357.0 258.2L393.1 259.0L396.0 259.8L398.5 261.4L400.5 263.6L401.8 266.4L402.4 269.5L402.3 272.7L401.4 275.8L399.8 278.7L397.7 281.0L395.1 282.7L392.2 283.7L389.2 283.8L386.4 283.1L383.8 281.5Z" fill="url(#g102)"/><path d="M343.9 262.2L327.4 257.9L324.4 269.7L340.9 274.3Z" fill="url(#g41)"/><path d="M396.1 265.0L396.0 268.2L395.1 271.2L393.5 274.0L391.3 276.3L388.7 277.9L385.8 278.8L382.8 278.9L379.9 278.1L377.4 276.6L375.3 274.4L373.9 271.7L373.3 268.6L373.4 265.4L374.3 262.3L375.9 259.5L378.1 257.2L380.8 255.6L383.7 254.7L386.7 254.7L389.6 255.5L392.1 257.0L394.1 259.3L395.5 262.0Z" fill="#ec1700"/><path d="M419.6 263.3L403.8 258.5L400.3 270.2L416.0 275.2Z" fill="url(#g95)"/><path d="M358.4 263.9L344.3 259.0L340.2 270.5L354.3 275.7Z" fill="url(#g21)"/><path d="M304.1 263.1L285.5 259.4L283.2 271.4L301.8 275.4Z" fill="url(#g45)"/><path d="M404.1 264.9L396.4 259.7L389.4 269.7L397.0 275.1Z" fill="url(#g113)"/><path d="M344.2 263.7L328.7 259.2L325.2 270.9L340.7 275.7Z" fill="url(#g15)"/><path d="M333.6 265.5L333.6 268.7L332.8 271.8L331.4 274.6L329.4 277.0L327.0 278.7L324.3 279.7L321.4 279.9L318.7 279.3L316.2 277.9L314.2 275.7L312.8 273.0L312.0 270.0L312.1 266.7L312.8 263.6L314.3 260.7L316.3 258.3L318.8 256.5L321.6 255.6L324.5 255.4L327.2 256.1L329.6 257.6L331.6 259.8L332.9 262.5Z" fill="#8d0e00"/><path d="M450.2 264.9L436.1 259.6L431.8 271.0L445.8 276.6Z" fill="url(#g89)"/><path d="M443.5 264.7L430.1 259.9L426.0 271.5L439.3 276.5Z" fill="url(#g91)"/><path d="M358.3 265.1L343.4 260.3L339.6 272.0L354.4 277.1Z" fill="url(#g19)"/><path d="M329.4 264.6L311.1 260.6L308.6 272.7L326.8 276.9Z" fill="url(#g43)"/><path d="M401.1 265.8L390.2 260.7L384.8 271.7L395.6 277.1Z" fill="url(#g105)"/><path d="M292.5 262.1L337.1 260.9L339.8 261.6L342.2 263.1L344.2 265.3L345.6 268.0L346.2 271.1L346.2 274.3L345.4 277.5L344.0 280.4L342.0 282.9L339.6 284.7L336.8 285.8L334.0 286.0L331.3 285.4L328.8 283.9Z" fill="url(#g12)"/><path d="M456.3 260.2L491.3 262.5L494.1 263.3L496.5 265.0L498.4 267.3L499.7 270.1L500.2 273.3L499.9 276.5L498.9 279.7L497.2 282.5L495.0 284.8L492.3 286.5L489.3 287.4L486.4 287.4L483.5 286.6L481.1 285.0Z" fill="url(#g48)"/><path d="M397.9 265.6L386.3 260.8L381.5 272.1L392.9 277.2Z" fill="url(#g103)"/><path d="M403.9 266.3L393.5 260.9L387.7 271.8L398.0 277.4Z" fill="url(#g107)"/><path d="M406.0 268.8L405.6 271.5L404.1 273.8L401.7 275.3L399.0 275.6L396.5 274.8L394.6 272.9L393.8 270.3L394.2 267.6L395.7 265.2L398.1 263.8L400.8 263.4L403.3 264.3L405.2 266.3Z" fill="#790c00"/><path d="M340.0 265.9L323.4 261.4L320.2 273.4L336.7 278.1Z" fill="url(#g13)"/><path d="M406.7 267.3L396.7 261.6L390.4 272.2L400.4 278.2Z" fill="url(#g109)"/><path d="M420.2 261.7L459.3 263.1L462.1 263.9L464.5 265.5L466.4 267.7L467.6 270.5L468.2 273.7L468.0 276.9L467.0 280.1L465.4 283.0L463.3 285.4L460.7 287.1L457.8 288.1L454.9 288.2L452.1 287.4L449.7 285.9Z" fill="url(#g86)"/><path d="M358.7 266.1L341.6 261.6L338.6 273.6L355.6 278.3Z" fill="url(#g41)"/><path d="M358.4 266.4L342.9 261.7L339.3 273.5L354.7 278.5Z" fill="url(#g17)"/><path d="M458.1 268.5L457.9 271.7L457.0 274.8L455.4 277.6L453.3 279.9L450.7 281.6L447.9 282.5L445.0 282.6L442.2 281.8L439.8 280.3L437.9 278.1L436.6 275.3L436.0 272.2L436.1 268.9L437.1 265.8L438.7 262.9L440.9 260.6L443.5 258.9L446.4 258.0L449.3 258.0L452.0 258.8L454.4 260.4L456.3 262.6L457.6 265.4Z" fill="#e71700"/><path d="M437.5 266.9L421.8 261.9L418.0 273.7L433.7 279.0Z" fill="url(#g93)"/><path d="M490.0 261.2L522.4 264.4L525.3 265.4L527.7 267.0L529.7 269.4L530.9 272.3L531.4 275.5L531.1 278.7L530.0 281.9L528.2 284.7L525.9 287.0L523.1 288.6L520.1 289.5L517.0 289.5L514.2 288.6L511.6 287.0L509.7 284.6Z" fill="url(#g50)"/><path d="M320.7 266.5L301.5 262.6L299.2 274.8L318.3 278.9Z" fill="url(#g45)"/><path d="M360.1 263.0L400.7 263.5L403.5 264.2L406.0 265.8L407.9 268.1L409.2 270.8L409.9 274.0L409.7 277.3L408.8 280.5L407.3 283.4L405.2 285.8L402.6 287.6L399.8 288.6L396.8 288.8L394.0 288.1L391.5 286.6Z" fill="url(#g100)"/><path d="M563.0 260.8L586.5 265.5L589.5 266.6L592.0 268.4L594.0 270.9L595.2 273.8L595.7 277.0L595.2 280.3L594.0 283.4L592.1 286.2L589.5 288.4L586.6 289.8L583.4 290.5L580.2 290.4L577.2 289.4L574.6 287.6L572.6 285.1L571.3 282.2Z" fill="url(#g54)"/><path d="M409.6 268.5L399.9 262.6L393.2 273.1L402.8 279.3Z" fill="url(#g111)"/><path d="M433.7 267.6L417.3 262.6L413.8 274.5L430.0 279.8Z" fill="url(#g95)"/><path d="M402.4 269.5L402.3 272.7L401.4 275.8L399.8 278.7L397.7 281.0L395.1 282.7L392.2 283.7L389.2 283.8L386.4 283.1L383.8 281.5L381.8 279.3L380.4 276.6L379.7 273.4L379.8 270.2L380.7 267.0L382.3 264.1L384.6 261.7L387.2 260.0L390.2 259.1L393.1 259.0L396.0 259.8L398.5 261.4L400.5 263.6L401.8 266.4Z" fill="#e81700"/><path d="M358.2 267.8L342.1 263.1L338.5 275.0L354.6 280.0Z" fill="url(#g15)"/><path d="M371.1 268.3L356.4 263.2L352.3 274.9L366.9 280.3Z" fill="url(#g21)"/><path d="M524.4 262.3L553.4 266.4L556.4 267.4L558.9 269.1L560.9 271.6L562.1 274.5L562.6 277.7L562.2 281.0L561.0 284.1L559.2 286.9L556.7 289.2L553.8 290.8L550.7 291.6L547.6 291.5L544.7 290.6L542.1 288.9L540.1 286.5Z" fill="url(#g52)"/><path d="M345.7 268.2L326.8 264.1L324.2 276.3L343.0 280.7Z" fill="url(#g43)"/><path d="M455.4 268.9L441.5 264.0L437.3 275.7L451.0 281.0Z" fill="url(#g91)"/><path d="M596.6 262.1L615.6 267.5L618.6 268.7L621.3 270.5L623.3 273.1L624.5 276.1L624.9 279.3L624.4 282.6L623.1 285.7L621.1 288.5L618.5 290.6L615.4 292.0L612.1 292.6L608.8 292.4L605.8 291.3L603.2 289.4L601.1 286.9L599.9 283.9Z" fill="url(#g56)"/><path d="M463.0 269.6L448.4 264.1L443.9 275.8L458.5 281.6Z" fill="url(#g87)"/><path d="M462.9 269.6L448.2 264.1L443.8 275.8L458.3 281.6Z" fill="url(#g89)"/><path d="M371.7 269.5L356.2 264.5L352.3 276.4L367.7 281.6Z" fill="url(#g19)"/><path d="M408.0 269.9L396.1 264.9L391.1 276.4L403.0 281.7Z" fill="url(#g103)"/><path d="M410.8 270.3L399.4 265.0L394.0 276.3L405.2 281.9Z" fill="url(#g105)"/><path d="M346.2 271.1L346.2 274.3L345.4 277.5L344.0 280.4L342.0 282.9L339.6 284.7L336.8 285.8L334.0 286.0L331.3 285.4L328.8 283.9L326.8 281.8L325.4 279.0L324.7 275.9L324.7 272.6L325.5 269.3L326.9 266.3L329.0 263.9L331.5 262.1L334.3 261.0L337.1 260.9L339.8 261.6L342.2 263.1L344.2 265.3L345.6 268.0Z" fill="#8b0e00"/><path d="M405.0 269.9L392.4 265.2L388.0 276.9L400.5 281.9Z" fill="url(#g101)"/><path d="M411.6 272.7L411.2 275.4L409.7 277.8L407.3 279.3L404.6 279.7L402.1 278.8L400.2 276.9L399.4 274.3L399.8 271.5L401.3 269.1L403.7 267.6L406.4 267.3L409.0 268.1L410.8 270.1Z" fill="#780c00"/><path d="M354.8 269.9L337.7 265.3L334.4 277.4L351.5 282.3Z" fill="url(#g13)"/><path d="M307.4 266.9L354.2 265.8L356.9 266.5L359.3 268.0L361.3 270.2L362.6 273.0L363.3 276.2L363.2 279.5L362.5 282.7L361.0 285.7L359.0 288.2L356.6 290.1L353.8 291.2L351.0 291.5L348.3 290.9Z" fill="url(#g10)"/><path d="M374.0 270.1L356.3 265.5L353.2 277.7L370.8 282.5Z" fill="url(#g41)"/><path d="M413.2 271.1L402.4 265.5L396.4 276.6L407.2 282.5Z" fill="url(#g107)"/><path d="M337.8 269.9L318.0 265.9L315.7 278.3L335.4 282.5Z" fill="url(#g45)"/><path d="M372.3 270.7L356.2 265.8L352.5 277.8L368.5 283.0Z" fill="url(#g17)"/><path d="M415.8 272.3L405.3 266.4L398.9 277.3L409.3 283.5Z" fill="url(#g109)"/><path d="M430.6 266.4L471.7 268.0L474.5 268.8L476.9 270.5L478.8 272.8L480.0 275.6L480.6 278.8L480.3 282.2L479.4 285.4L477.7 288.4L475.5 290.8L472.9 292.6L470.0 293.6L467.1 293.7L464.3 293.0L461.9 291.4Z" fill="url(#g84)"/><path d="M451.7 271.5L435.3 266.2L431.5 278.2L447.8 283.8Z" fill="url(#g93)"/><path d="M500.2 273.3L499.9 276.5L498.9 279.7L497.2 282.5L495.0 284.8L492.3 286.5L489.3 287.4L486.4 287.4L483.5 286.6L481.1 285.0L479.1 282.8L477.8 279.9L477.2 276.7L477.5 273.4L478.5 270.2L480.2 267.4L482.5 265.0L485.3 263.4L488.3 262.5L491.3 262.5L494.1 263.3L496.5 265.0L498.4 267.3L499.7 270.1Z" fill="#e91700"/><path d="M627.9 283.3L630.5 264.4L647.8 271.7L650.4 273.7L652.4 276.3L653.7 279.4L654.1 282.7L653.5 286.0L652.2 289.1L650.0 291.8L647.3 293.9L644.2 295.2L640.8 295.8L637.4 295.4L634.3 294.2L631.6 292.3L629.6 289.7L628.3 286.6Z" fill="url(#g58)"/><path d="M353.7 271.6L335.9 267.0L332.8 279.3L350.6 284.1Z" fill="url(#g11)"/><path d="M448.4 272.1L431.4 266.9L427.8 279.0L444.7 284.5Z" fill="url(#g95)"/><path d="M468.2 273.7L468.0 276.9L467.0 280.1L465.4 283.0L463.3 285.4L460.7 287.1L457.8 288.1L454.9 288.2L452.1 287.4L449.7 285.9L447.8 283.6L446.4 280.8L445.9 277.7L446.0 274.3L447.0 271.1L448.6 268.2L450.9 265.8L453.5 264.0L456.4 263.1L459.3 263.1L462.1 263.9L464.5 265.5L466.4 267.7L467.6 270.5Z" fill="#e51600"/><path d="M363.4 268.0L408.9 268.1L411.6 268.8L414.0 270.3L415.9 272.6L417.2 275.4L417.8 278.6L417.7 282.0L416.8 285.2L415.3 288.2L413.2 290.7L410.7 292.6L408.0 293.7L405.1 293.9L402.4 293.2L399.9 291.7Z" fill="url(#g98)"/><path d="M372.6 272.1L355.9 267.2L352.3 279.3L369.0 284.5Z" fill="url(#g15)"/><path d="M362.5 271.9L343.0 267.6L340.4 280.1L359.8 284.6Z" fill="url(#g43)"/><path d="M409.9 274.0L409.7 277.3L408.8 280.5L407.3 283.4L405.2 285.8L402.6 287.6L399.8 288.6L396.8 288.8L394.0 288.1L391.5 286.6L389.5 284.3L388.1 281.5L387.5 278.3L387.6 275.0L388.5 271.7L390.1 268.8L392.3 266.3L394.9 264.6L397.8 263.6L400.7 263.5L403.5 264.2L406.0 265.8L407.9 268.1L409.2 270.8Z" fill="#e41600"/><path d="M384.3 272.8L369.0 267.6L364.8 279.5L380.0 285.1Z" fill="url(#g21)"/><path d="M467.7 273.3L453.2 268.2L448.9 280.2L463.2 285.6Z" fill="url(#g91)"/><path d="M531.4 275.5L531.1 278.7L530.0 281.9L528.2 284.7L525.9 287.0L523.1 288.6L520.1 289.5L517.0 289.5L514.2 288.6L511.6 287.0L509.7 284.6L508.4 281.8L507.8 278.6L508.1 275.2L509.2 272.0L511.0 269.2L513.4 266.8L516.3 265.2L519.3 264.4L522.4 264.4L525.3 265.4L527.7 267.0L529.7 269.4L530.9 272.3Z" fill="#ec1700"/><path d="M385.6 274.0L369.5 268.8L365.5 280.9L381.5 286.4Z" fill="url(#g19)"/><path d="M503.7 274.6L490.5 268.8L485.3 280.4L498.4 286.6Z" fill="url(#g47)"/><path d="M417.9 276.6L417.5 279.4L416.0 281.8L413.6 283.4L410.9 283.8L408.3 282.9L406.4 281.0L405.6 278.3L406.0 275.5L407.6 273.1L410.0 271.5L412.7 271.2L415.2 272.0L417.1 274.0Z" fill="#780c00"/><path d="M418.6 274.3L406.2 269.1L401.1 280.8L413.4 286.3Z" fill="url(#g103)"/><path d="M416.1 274.1L403.0 269.2L398.5 281.1L411.4 286.3Z" fill="url(#g101)"/><path d="M355.4 273.4L335.0 269.3L332.6 281.9L352.9 286.2Z" fill="url(#g45)"/><path d="M476.2 274.6L460.9 268.8L456.4 280.8L471.6 286.8Z" fill="url(#g87)"/><path d="M476.1 274.6L460.8 268.8L456.3 280.8L471.5 286.8Z" fill="url(#g89)"/><path d="M370.2 274.0L352.4 269.2L349.1 281.6L366.8 286.7Z" fill="url(#g13)"/><path d="M328.5 270.7L376.5 270.0L379.2 270.7L381.6 272.2L383.5 274.5L384.9 277.3L385.5 280.5L385.4 283.9L384.6 287.2L383.1 290.2L381.1 292.8L378.6 294.7L375.9 295.8L373.1 296.1L370.3 295.5Z" fill="url(#g8)"/><path d="M595.7 277.0L595.2 280.3L594.0 283.4L592.1 286.2L589.5 288.4L586.6 289.8L583.4 290.5L580.2 290.4L577.2 289.4L574.6 287.6L572.6 285.1L571.3 282.2L570.8 279.0L571.2 275.7L572.5 272.5L574.4 269.7L577.0 267.5L580.0 266.0L583.2 265.4L586.5 265.5L589.5 266.6L592.0 268.4L594.0 270.9L595.2 273.8Z" fill="#f31800"/><path d="M658.5 285.9L659.1 282.6L660.5 279.4L667.7 266.9L679.0 274.8L681.7 276.8L683.7 279.6L684.9 282.7L685.3 286.1L684.7 289.4L683.3 292.5L681.1 295.2L678.2 297.2L675.0 298.5L671.5 298.9L668.1 298.4L664.9 297.1L662.2 295.1L660.2 292.4L658.9 289.3Z" fill="url(#g60)"/><path d="M389.9 274.2L371.5 269.4L368.4 281.8L386.6 286.8Z" fill="url(#g41)"/><path d="M420.9 275.0L409.0 269.5L403.5 281.0L415.2 286.8Z" fill="url(#g105)"/><path d="M413.5 274.3L399.7 269.7L395.7 281.9L409.4 286.7Z" fill="url(#g99)"/><path d="M473.8 275.0L458.3 269.3L453.9 281.3L469.3 287.3Z" fill="url(#g85)"/><path d="M363.3 276.2L363.2 279.5L362.5 282.7L361.0 285.7L359.0 288.2L356.6 290.1L353.8 291.2L351.0 291.5L348.3 290.9L345.8 289.4L343.8 287.2L342.4 284.4L341.7 281.2L341.8 277.8L342.5 274.5L344.0 271.5L346.1 268.9L348.6 267.0L351.4 266.0L354.2 265.8L356.9 266.5L359.3 268.0L361.3 270.2L362.6 273.0Z" fill="#8a0e00"/><path d="M386.8 275.2L370.1 270.0L366.3 282.3L382.9 287.7Z" fill="url(#g17)"/><path d="M423.0 276.2L411.6 270.3L405.6 281.6L416.8 287.8Z" fill="url(#g107)"/><path d="M562.6 277.7L562.2 281.0L561.0 284.1L559.2 286.9L556.7 289.2L553.8 290.8L550.7 291.6L547.6 291.5L544.7 290.6L542.1 288.9L540.1 286.5L538.8 283.6L538.3 280.3L538.6 277.0L539.8 273.8L541.7 270.9L544.2 268.6L547.1 267.1L550.3 266.3L553.4 266.4L556.4 267.4L558.9 269.1L560.9 271.6L562.1 274.5Z" fill="#ef1700"/><path d="M369.7 275.7L351.2 270.9L348.1 283.4L366.4 288.4Z" fill="url(#g11)"/><path d="M466.5 276.2L449.4 270.7L445.5 283.0L462.4 288.8Z" fill="url(#g93)"/><path d="M534.1 277.2L521.8 270.8L515.9 282.3L528.0 288.9Z" fill="url(#g49)"/><path d="M379.8 275.7L359.7 271.3L357.0 283.9L377.1 288.6Z" fill="url(#g43)"/><path d="M442.5 271.1L485.4 273.1L488.2 273.9L490.7 275.6L492.6 277.9L493.8 280.8L494.3 284.1L494.1 287.5L493.1 290.8L491.5 293.8L489.2 296.3L486.6 298.1L483.7 299.2L480.7 299.3L477.9 298.6L475.4 297.0Z" fill="url(#g82)"/><path d="M624.9 279.3L624.4 282.6L623.1 285.7L621.1 288.5L618.5 290.6L615.4 292.0L612.1 292.6L608.8 292.4L605.8 291.3L603.2 289.4L601.1 286.9L599.9 283.9L599.4 280.7L599.9 277.3L601.2 274.2L603.2 271.5L605.9 269.3L609.0 267.9L612.3 267.3L615.6 267.5L618.6 268.7L621.3 270.5L623.3 273.1L624.5 276.1Z" fill="#f61800"/><path d="M387.6 276.5L370.3 271.4L366.6 283.8L383.9 289.1Z" fill="url(#g15)"/><path d="M392.3 278.9L392.0 281.8L390.7 284.3L388.7 286.1L386.3 286.6L384.0 285.9L382.4 284.1L381.6 281.4L381.9 278.5L383.2 276.0L385.2 274.2L387.6 273.7L389.9 274.4L391.5 276.3Z" fill="#6f0b00"/><path d="M463.7 276.8L446.0 271.4L442.3 283.7L459.9 289.4Z" fill="url(#g95)"/><path d="M371.7 276.8L352.9 272.1L349.8 284.6L368.5 289.6Z" fill="url(#g9)"/><path d="M691.0 288.5L691.6 285.1L693.1 282.0L695.4 279.3L707.7 269.6L716.7 282.9L717.9 286.1L718.2 289.5L717.6 292.9L716.1 296.0L713.8 298.6L710.9 300.6L707.6 301.7L704.0 302.0L700.6 301.5L697.4 300.0L694.6 297.8L692.6 295.1L691.4 291.9Z" fill="url(#g62)"/><path d="M480.6 278.8L480.3 282.2L479.4 285.4L477.7 288.4L475.5 290.8L472.9 292.6L470.0 293.6L467.1 293.7L464.3 293.0L461.9 291.4L459.9 289.1L458.6 286.3L458.0 283.0L458.2 279.6L459.2 276.3L460.9 273.3L463.1 270.9L465.8 269.1L468.7 268.1L471.7 268.0L474.5 268.8L476.9 270.5L478.8 272.8L480.0 275.6Z" fill="#e31600"/><path d="M417.8 278.6L417.7 282.0L416.8 285.2L415.3 288.2L413.2 290.7L410.7 292.6L408.0 293.7L405.1 293.9L402.4 293.2L399.9 291.7L398.0 289.5L396.6 286.7L396.0 283.4L396.1 280.0L396.9 276.7L398.5 273.6L400.6 271.1L403.2 269.2L406.0 268.2L408.9 268.1L411.6 268.8L414.0 270.3L415.9 272.6L417.2 275.4Z" fill="#de1600"/><path d="M398.1 277.6L382.2 272.1L377.9 284.3L393.7 290.1Z" fill="url(#g21)"/><path d="M595.5 279.6L586.9 272.6L578.6 282.5L586.9 289.8Z" fill="url(#g53)"/><path d="M480.4 277.9L465.5 272.6L461.1 284.8L475.9 290.4Z" fill="url(#g91)"/><path d="M373.6 277.1L352.6 272.9L350.1 285.6L371.0 290.1Z" fill="url(#g45)"/><path d="M425.1 280.6L424.7 283.4L423.2 285.9L420.8 287.5L418.1 287.9L415.5 287.1L413.7 285.1L412.9 282.4L413.3 279.6L414.8 277.1L417.2 275.5L419.9 275.1L422.5 276.0L424.3 277.9Z" fill="#770c00"/><path d="M427.5 278.4L414.0 273.3L409.3 285.5L422.8 290.8Z" fill="url(#g101)"/><path d="M564.4 279.9L553.2 273.0L546.3 284.0L557.2 291.2Z" fill="url(#g51)"/><path d="M425.5 278.3L411.2 273.5L407.1 285.9L421.3 290.9Z" fill="url(#g99)"/><path d="M400.0 278.7L383.3 273.2L379.3 285.6L395.8 291.3Z" fill="url(#g19)"/><path d="M386.1 278.3L367.7 273.4L364.3 285.9L382.6 291.2Z" fill="url(#g13)"/><path d="M429.5 278.9L416.6 273.5L411.5 285.5L424.3 291.2Z" fill="url(#g103)"/><path d="M515.6 279.9L501.8 273.8L496.4 285.6L510.1 292.1Z" fill="url(#g47)"/><path d="M422.7 278.7L407.6 274.4L404.0 286.9L419.0 291.5Z" fill="url(#g97)"/><path d="M490.0 279.8L474.1 273.8L469.4 286.0L485.2 292.3Z" fill="url(#g87)"/><path d="M489.9 279.8L473.9 273.8L469.3 286.0L485.2 292.3Z" fill="url(#g89)"/><path d="M654.1 282.7L653.5 286.0L652.2 289.1L650.0 291.8L647.3 293.9L644.2 295.2L640.8 295.8L637.4 295.4L634.3 294.2L631.6 292.3L629.6 289.7L628.3 286.6L627.9 283.3L628.4 280.0L629.7 276.9L631.9 274.1L634.6 272.0L637.8 270.6L641.2 270.1L644.6 270.5L647.8 271.7L650.4 273.7L652.4 276.3L653.7 279.4Z" fill="#f81800"/><path d="M431.4 280.0L419.1 274.2L413.4 285.9L425.6 292.0Z" fill="url(#g105)"/><path d="M385.5 280.5L385.4 283.9L384.6 287.2L383.1 290.2L381.1 292.8L378.6 294.7L375.9 295.8L373.1 296.1L370.3 295.5L367.9 294.0L365.9 291.8L364.5 288.9L363.8 285.7L363.9 282.2L364.7 278.8L366.2 275.7L368.3 273.2L370.8 271.3L373.6 270.2L376.5 270.0L379.2 270.7L381.6 272.2L383.5 274.5L384.9 277.3Z" fill="#8a0d00"/><path d="M623.1 282.3L616.6 275.2L606.9 283.8L613.0 291.1Z" fill="url(#g55)"/><path d="M487.9 280.1L471.7 274.2L467.1 286.4L483.2 292.7Z" fill="url(#g85)"/><path d="M401.8 279.8L384.4 274.5L380.5 286.9L397.8 292.6Z" fill="url(#g17)"/><path d="M344.3 276.0L394.9 275.4L397.6 276.1L400.0 277.6L401.9 279.9L403.2 282.8L403.8 286.1L403.7 289.5L402.9 292.9L401.4 296.0L399.4 298.7L396.9 300.6L394.2 301.8L391.3 302.1L388.6 301.5Z" fill="url(#g6)"/><path d="M486.9 280.3L470.5 274.4L466.0 286.6L482.3 292.9Z" fill="url(#g83)"/><path d="M397.7 279.6L377.0 275.1L374.3 287.9L394.9 292.7Z" fill="url(#g43)"/><path d="M386.2 279.9L367.1 275.0L363.9 287.7L382.9 292.9Z" fill="url(#g11)"/><path d="M481.8 281.2L464.1 275.5L460.0 288.0L477.7 294.0Z" fill="url(#g93)"/><path d="M403.2 281.1L385.2 275.8L381.5 288.4L399.4 294.0Z" fill="url(#g15)"/><path d="M388.5 281.0L369.0 276.1L365.8 288.9L385.2 294.1Z" fill="url(#g9)"/><path d="M479.7 281.6L461.2 276.0L457.4 288.6L475.7 294.5Z" fill="url(#g95)"/><path d="M455.6 275.9L500.3 278.3L503.1 279.1L505.6 280.8L507.5 283.2L508.7 286.1L509.2 289.5L509.0 292.9L507.9 296.3L506.2 299.4L504.0 302.0L501.3 303.8L498.3 304.9L495.4 305.1L492.5 304.3L490.0 302.7Z" fill="url(#g80)"/><path d="M392.3 280.8L370.6 276.5L368.1 289.5L389.7 294.0Z" fill="url(#g45)"/><path d="M394.3 281.3L375.1 276.3L371.8 289.1L391.0 294.4Z" fill="url(#g7)"/><path d="M545.3 282.9L532.4 276.3L526.3 287.9L539.0 294.9Z" fill="url(#g49)"/><path d="M433.6 284.5L433.2 287.4L431.7 289.9L429.3 291.6L426.6 292.0L424.1 291.2L422.2 289.2L421.4 286.5L421.8 283.6L423.4 281.1L425.7 279.4L428.5 279.0L431.0 279.8L432.8 281.8Z" fill="#750c00"/><path d="M412.4 282.5L395.8 276.8L391.5 289.3L407.9 295.3Z" fill="url(#g21)"/><path d="M685.3 286.1L684.7 289.4L683.3 292.5L681.1 295.2L678.2 297.2L675.0 298.5L671.5 298.9L668.1 298.4L664.9 297.1L662.2 295.1L660.2 292.4L658.9 289.3L658.5 285.9L659.1 282.6L660.5 279.4L662.7 276.7L665.5 274.7L668.8 273.4L672.3 273.0L675.8 273.4L679.0 274.8L681.7 276.8L683.7 279.6L684.9 282.7Z" fill="#f91800"/><path d="M493.7 282.7L478.1 277.1L473.7 289.6L489.1 295.4Z" fill="url(#g91)"/><path d="M494.3 284.1L494.1 287.5L493.1 290.8L491.5 293.8L489.2 296.3L486.6 298.1L483.7 299.2L480.7 299.3L477.9 298.6L475.4 297.0L473.4 294.7L472.1 291.8L471.6 288.5L471.8 285.0L472.8 281.6L474.5 278.5L476.8 276.0L479.5 274.2L482.5 273.2L485.4 273.1L488.2 273.9L490.7 275.6L492.6 277.9L493.8 280.8Z" fill="#e11600"/><path d="M437.9 282.4L423.2 277.5L419.0 290.0L433.6 295.2Z" fill="url(#g99)"/><path d="M651.1 286.9L646.4 279.2L635.0 285.7L639.2 293.7Z" fill="url(#g57)"/><path d="M439.4 282.9L425.3 277.6L420.6 289.9L434.5 295.5Z" fill="url(#g101)"/><path d="M402.6 282.8L383.5 277.6L380.1 290.4L399.1 295.9Z" fill="url(#g13)"/><path d="M435.7 282.5L420.2 278.0L416.5 290.8L432.0 295.5Z" fill="url(#g97)"/><path d="M717.8 294.0L718.4 290.6L720.0 287.5L722.3 284.8L725.3 282.9L741.7 275.2L745.2 292.5L745.5 296.0L744.8 299.4L743.3 302.6L740.9 305.2L737.9 307.1L734.5 308.1L730.9 308.3L727.3 307.6L724.1 306.0L721.4 303.7L719.3 300.8L718.1 297.5Z" fill="url(#g64)"/><path d="M415.0 283.5L397.6 277.9L393.5 290.5L410.8 296.4Z" fill="url(#g19)"/><path d="M440.9 283.7L427.5 278.1L422.3 290.3L435.6 296.2Z" fill="url(#g103)"/><path d="M603.3 286.0L594.2 278.6L585.7 288.7L594.5 296.5Z" fill="url(#g53)"/><path d="M416.3 283.7L394.8 279.0L392.0 292.0L413.4 297.0Z" fill="url(#g43)"/><path d="M574.5 286.2L562.8 278.9L555.7 290.2L567.2 297.8Z" fill="url(#g51)"/><path d="M417.4 284.6L399.3 279.1L395.4 291.8L413.3 297.6Z" fill="url(#g17)"/><path d="M403.3 284.3L383.5 279.2L380.2 292.2L399.9 297.5Z" fill="url(#g11)"/><path d="M528.0 285.4L513.6 279.0L508.1 291.1L522.4 297.9Z" fill="url(#g47)"/><path d="M504.4 285.2L487.8 278.9L483.0 291.4L499.5 298.0Z" fill="url(#g87)"/><path d="M504.3 285.2L487.7 279.0L482.9 291.4L499.5 298.0Z" fill="url(#g89)"/><path d="M414.8 287.3L414.4 290.2L413.0 292.8L410.8 294.6L408.2 295.1L405.7 294.3L403.9 292.4L403.1 289.7L403.5 286.7L404.9 284.1L407.2 282.3L409.8 281.8L412.2 282.6L414.0 284.6Z" fill="#720b00"/><path d="M502.6 285.5L485.6 279.3L480.9 291.8L497.8 298.4Z" fill="url(#g85)"/><path d="M403.8 286.1L403.7 289.5L402.9 292.9L401.4 296.0L399.4 298.7L396.9 300.6L394.2 301.8L391.3 302.1L388.6 301.5L386.2 300.0L384.2 297.8L382.8 294.9L382.1 291.5L382.2 288.0L383.1 284.6L384.6 281.4L386.7 278.7L389.2 276.8L392.0 275.6L394.9 275.4L397.6 276.1L400.0 277.6L401.9 279.9L403.2 282.8Z" fill="#880d00"/><path d="M501.7 285.7L484.6 279.5L480.0 292.0L496.9 298.6Z" fill="url(#g83)"/><path d="M718.2 289.5L717.6 292.9L716.1 296.0L713.8 298.6L710.9 300.6L707.6 301.7L704.0 302.0L700.6 301.5L697.4 300.0L694.6 297.8L692.6 295.1L691.4 291.9L691.0 288.5L691.6 285.1L693.1 282.0L695.4 279.3L698.3 277.3L701.6 276.1L705.2 275.8L708.7 276.4L711.9 277.9L714.7 280.1L716.7 282.9L717.9 286.1Z" fill="#f91800"/><path d="M501.3 285.8L484.2 279.5L479.6 292.1L496.6 298.6Z" fill="url(#g81)"/><path d="M411.6 284.7L389.2 280.2L386.7 293.4L409.0 298.1Z" fill="url(#g45)"/><path d="M680.2 291.7L678.3 284.0L665.3 286.9L666.8 294.8Z" fill="url(#g59)"/><path d="M628.9 288.7L622.1 281.2L612.1 290.0L618.6 297.8Z" fill="url(#g55)"/><path d="M405.9 285.4L385.7 280.4L382.5 293.4L402.5 298.7Z" fill="url(#g9)"/><path d="M419.4 285.8L400.7 280.3L396.9 293.2L415.5 299.0Z" fill="url(#g15)"/><path d="M443.2 288.4L442.8 291.4L441.3 294.0L439.0 295.7L436.3 296.2L433.8 295.3L431.9 293.4L431.1 290.6L431.5 287.6L433.1 285.0L435.4 283.3L438.1 282.9L440.6 283.7L442.5 285.7Z" fill="#740b00"/><path d="M411.6 285.8L391.6 280.6L388.3 293.6L408.1 299.1Z" fill="url(#g7)"/><path d="M497.9 286.3L479.3 280.4L475.2 293.2L493.6 299.4Z" fill="url(#g93)"/><path d="M418.4 288.6L418.1 291.6L416.8 294.2L414.9 296.1L412.7 296.7L410.5 296.1L408.9 294.2L408.2 291.5L408.5 288.4L409.8 285.7L411.7 283.9L414.0 283.3L416.1 284.0L417.7 285.9Z" fill="#6a0a00"/><path d="M496.2 286.6L477.1 280.8L473.1 293.7L492.2 299.8Z" fill="url(#g95)"/><path d="M450.8 286.6L435.5 281.6L431.2 294.3L446.4 299.7Z" fill="url(#g99)"/><path d="M449.2 286.4L433.1 281.8L429.3 294.7L445.3 299.6Z" fill="url(#g97)"/><path d="M413.7 287.1L393.4 281.9L390.1 295.0L410.3 300.4Z" fill="url(#g5)"/><path d="M451.7 287.5L437.1 282.0L432.3 294.6L446.7 300.4Z" fill="url(#g101)"/><path d="M507.5 287.6L491.3 281.8L486.8 294.5L502.8 300.6Z" fill="url(#g91)"/><path d="M419.8 287.4L399.9 282.1L396.4 295.1L416.1 300.7Z" fill="url(#g13)"/><path d="M556.9 288.9L543.4 281.9L537.1 293.9L550.5 301.2Z" fill="url(#g49)"/><path d="M351.3 283.9L406.6 283.0L409.3 283.7L411.7 285.2L413.5 287.6L414.8 290.5L415.4 293.9L415.3 297.4L414.5 300.9L413.1 304.1L411.1 306.9L408.6 309.0L405.9 310.2L403.1 310.6L400.4 310.0Z" fill="url(#g4)"/><path d="M509.2 289.5L509.0 292.9L507.9 296.3L506.2 299.4L504.0 302.0L501.3 303.8L498.3 304.9L495.4 305.1L492.5 304.3L490.0 302.7L488.1 300.4L486.8 297.4L486.2 294.0L486.5 290.5L487.5 287.1L489.2 283.9L491.5 281.3L494.3 279.5L497.3 278.4L500.3 278.3L503.1 279.1L505.6 280.8L507.5 283.2L508.7 286.1Z" fill="#df1600"/><path d="M430.6 288.6L412.6 282.7L408.3 295.6L426.3 301.8Z" fill="url(#g19)"/><path d="M710.4 297.2L711.4 289.4L698.0 287.4L696.5 295.1Z" fill="url(#g61)"/><path d="M421.1 288.9L400.5 283.6L397.2 296.8L417.6 302.3Z" fill="url(#g11)"/><path d="M431.6 288.7L408.5 284.1L405.9 297.5L428.9 302.4Z" fill="url(#g45)"/><path d="M655.3 294.0L650.4 285.8L638.6 292.5L643.1 300.9Z" fill="url(#g57)"/><path d="M433.6 289.6L414.8 283.8L410.8 296.8L429.5 302.9Z" fill="url(#g17)"/><path d="M454.0 292.3L453.6 295.3L452.1 297.9L449.8 299.7L447.1 300.2L444.6 299.4L442.8 297.4L442.1 294.7L442.5 291.6L444.0 289.0L446.3 287.2L449.0 286.7L451.4 287.5L453.2 289.5Z" fill="#720b00"/><path d="M746.6 300.5L747.2 297.0L748.8 293.8L751.2 291.2L754.3 289.3L757.7 288.3L779.2 282.0L773.9 307.1L772.2 310.2L769.8 312.8L766.7 314.6L763.3 315.6L759.6 315.6L756.0 314.8L752.8 313.0L750.0 310.5L748.0 307.5L746.8 304.0Z" fill="url(#g66)"/><path d="M423.9 290.0L403.0 284.7L399.7 298.0L420.5 303.5Z" fill="url(#g9)"/><path d="M519.5 290.9L502.1 284.3L497.2 297.1L514.5 304.0Z" fill="url(#g87)"/><path d="M519.4 290.9L502.0 284.3L497.1 297.1L514.4 304.0Z" fill="url(#g89)"/><path d="M541.0 291.1L525.9 284.4L520.3 296.9L535.3 303.9Z" fill="url(#g47)"/><path d="M611.5 292.8L602.0 284.9L593.2 295.3L602.5 303.5Z" fill="url(#g53)"/><path d="M517.9 291.2L500.2 284.7L495.4 297.5L513.0 304.3Z" fill="url(#g85)"/><path d="M429.5 290.5L408.8 285.1L405.3 298.3L425.9 304.0Z" fill="url(#g7)"/><path d="M436.2 290.8L416.7 285.1L412.9 298.2L432.2 304.2Z" fill="url(#g15)"/><path d="M517.1 291.3L499.3 284.8L494.5 297.6L512.3 304.5Z" fill="url(#g83)"/><path d="M516.9 291.4L499.0 284.9L494.3 297.7L512.0 304.5Z" fill="url(#g79)"/><path d="M516.8 291.4L498.9 284.9L494.2 297.7L512.0 304.5Z" fill="url(#g81)"/><path d="M463.1 290.4L446.5 285.6L442.7 298.8L459.2 303.9Z" fill="url(#g97)"/><path d="M585.2 292.8L572.8 285.1L565.5 296.7L577.7 304.7Z" fill="url(#g51)"/><path d="M433.0 293.5L432.6 296.5L431.2 299.1L428.9 301.0L426.4 301.5L423.9 300.8L422.2 298.8L421.4 296.1L421.8 293.0L423.2 290.3L425.5 288.5L428.1 287.9L430.5 288.7L432.2 290.7Z" fill="#700b00"/><path d="M745.5 296.0L744.8 299.4L743.3 302.6L740.9 305.2L737.9 307.1L734.5 308.1L730.9 308.3L727.3 307.6L724.1 306.0L721.4 303.7L719.3 300.8L718.1 297.5L717.8 294.0L718.4 290.6L720.0 287.5L722.3 284.8L725.3 282.9L728.7 281.8L732.3 281.5L735.9 282.2L739.2 283.8L742.0 286.2L744.0 289.1L745.2 292.5Z" fill="#f81800"/><path d="M464.1 291.0L448.3 285.8L443.9 298.8L459.7 304.3Z" fill="url(#g99)"/><path d="M514.6 291.7L495.3 285.5L491.0 298.5L510.2 305.1Z" fill="url(#g93)"/><path d="M433.5 293.7L433.2 296.7L432.0 299.5L430.1 301.4L428.0 302.1L425.9 301.4L424.4 299.5L423.7 296.8L424.0 293.7L425.2 290.9L427.1 289.0L429.2 288.3L431.3 289.0L432.8 290.9Z" fill="#680a00"/><path d="M513.5 291.9L493.5 285.8L489.5 298.9L509.4 305.4Z" fill="url(#g95)"/><path d="M431.9 291.7L410.8 286.3L407.4 299.7L428.4 305.3Z" fill="url(#g5)"/><path d="M635.1 295.4L627.9 287.6L617.6 296.6L624.4 304.8Z" fill="url(#g55)"/><path d="M437.6 292.2L417.0 286.7L413.4 299.9L433.9 305.8Z" fill="url(#g13)"/><path d="M682.0 298.8L680.0 290.6L666.5 293.6L668.1 301.9Z" fill="url(#g59)"/><path d="M521.9 292.8L505.1 286.8L500.4 299.7L517.1 306.0Z" fill="url(#g91)"/><path d="M415.4 293.9L415.3 297.4L414.5 300.9L413.1 304.1L411.1 306.9L408.6 309.0L405.9 310.2L403.1 310.6L400.4 310.0L398.0 308.5L396.1 306.2L394.7 303.3L394.1 299.9L394.2 296.2L395.0 292.6L396.5 289.3L398.6 286.6L401.1 284.5L403.8 283.3L406.6 283.0L409.3 283.7L411.7 285.2L413.5 287.6L414.8 290.5Z" fill="#850d00"/><path d="M371.0 289.1L429.4 288.4L432.0 289.0L434.3 290.6L436.1 293.0L437.4 295.9L438.0 299.4L437.8 303.0L437.0 306.6L435.6 309.9L433.6 312.7L431.2 314.8L428.5 316.2L425.8 316.5L423.1 316.0Z" fill="url(#g2)"/><path d="M466.3 296.0L465.9 299.0L464.5 301.7L462.2 303.5L459.7 304.1L457.3 303.3L455.5 301.3L454.8 298.5L455.2 295.5L456.7 292.8L458.9 290.9L461.5 290.4L463.9 291.2L465.6 293.2Z" fill="#700b00"/><path d="M439.5 293.6L418.2 288.1L414.8 301.5L436.0 307.3Z" fill="url(#g11)"/><path d="M569.2 295.2L554.9 287.9L548.5 300.1L562.5 307.8Z" fill="url(#g49)"/><path d="M450.5 294.8L431.0 288.8L426.8 302.1L446.3 308.4Z" fill="url(#g17)"/><path d="M734.1 305.9L738.1 297.5L725.7 291.4L721.3 299.5Z" fill="url(#g63)"/><path d="M442.6 294.7L421.0 289.3L417.6 302.7L439.1 308.5Z" fill="url(#g9)"/><path d="M477.4 294.6L460.3 289.6L456.4 303.0L473.4 308.2Z" fill="url(#g97)"/><path d="M709.4 304.2L710.5 296.0L696.8 294.0L695.2 302.1Z" fill="url(#g61)"/><path d="M427.2 294.9L405.0 289.7L401.8 303.2L424.0 308.8Z" fill="url(#g3)"/><path d="M448.0 295.3L426.6 289.7L423.1 303.2L444.4 309.1Z" fill="url(#g7)"/><path d="M453.7 295.9L433.5 290.0L429.5 303.3L449.7 309.6Z" fill="url(#g15)"/><path d="M535.3 296.9L517.0 290.0L512.0 303.0L530.1 310.2Z" fill="url(#g87)"/><path d="M535.2 296.9L517.0 290.0L512.0 303.0L530.1 310.2Z" fill="url(#g89)"/><path d="M554.6 297.2L538.8 290.2L533.1 302.9L548.7 310.2Z" fill="url(#g47)"/><path d="M533.9 297.1L515.4 290.3L510.5 303.3L528.9 310.5Z" fill="url(#g85)"/><path d="M533.3 297.2L514.6 290.4L509.8 303.5L528.3 310.7Z" fill="url(#g83)"/><path d="M533.1 297.3L514.3 290.5L509.5 303.6L528.1 310.7Z" fill="url(#g79)"/><path d="M533.0 297.3L514.3 290.5L509.5 303.6L528.1 310.7Z" fill="url(#g81)"/><path d="M659.7 301.4L654.6 292.8L642.4 299.7L647.2 308.6Z" fill="url(#g57)"/><path d="M450.8 296.6L428.9 291.0L425.4 304.5L447.2 310.4Z" fill="url(#g5)"/><path d="M775.5 306.9L776.2 303.3L777.9 300.2L780.3 297.6L783.3 295.8L786.8 294.8L817.6 289.3L801.0 317.9L798.5 320.5L795.5 322.2L792.0 323.1L788.3 323.0L784.8 321.9L781.5 320.0L778.8 317.3L776.8 314.1L775.7 310.5Z" fill="url(#g68)"/><path d="M532.0 297.4L511.9 290.9L507.5 304.2L527.6 311.0Z" fill="url(#g93)"/><path d="M531.6 297.4L510.7 291.1L506.6 304.5L527.3 311.1Z" fill="url(#g95)"/><path d="M479.5 299.6L479.1 302.7L477.7 305.4L475.6 307.3L473.1 308.0L470.8 307.2L469.1 305.3L468.4 302.4L468.8 299.3L470.3 296.5L472.4 294.6L474.9 294.0L477.2 294.8L478.8 296.8Z" fill="#6d0b00"/><path d="M620.3 299.9L610.2 291.6L601.1 302.3L610.9 310.9Z" fill="url(#g53)"/><path d="M456.1 297.2L434.7 291.4L431.0 305.0L452.3 311.1Z" fill="url(#g13)"/><path d="M452.7 299.8L452.4 302.9L450.9 305.6L448.7 307.5L446.2 308.2L443.8 307.4L442.0 305.4L441.2 302.6L441.6 299.5L443.1 296.7L445.3 294.8L447.9 294.2L450.3 295.0L452.0 297.0Z" fill="#6e0b00"/><path d="M596.5 299.7L583.4 291.7L575.9 303.5L588.7 311.9Z" fill="url(#g51)"/><path d="M537.0 298.2L519.4 291.9L514.6 305.1L532.0 311.7Z" fill="url(#g91)"/><path d="M774.6 303.6L773.9 307.1L772.2 310.2L769.8 312.8L766.7 314.6L763.3 315.6L759.6 315.6L756.0 314.8L752.8 313.0L750.0 310.5L748.0 307.5L746.8 304.0L746.6 300.5L747.2 297.0L748.8 293.8L751.2 291.2L754.3 289.3L757.7 288.3L761.4 288.2L765.0 289.1L768.4 290.8L771.1 293.3L773.2 296.4L774.4 299.9Z" fill="#f51800"/><path d="M438.0 299.4L437.8 303.0L437.0 306.6L435.6 309.9L433.6 312.7L431.2 314.8L428.5 316.2L425.8 316.5L423.1 316.0L420.8 314.5L418.9 312.2L417.5 309.2L416.9 305.7L417.0 302.0L417.9 298.3L419.4 294.9L421.4 292.1L423.9 289.9L426.6 288.7L429.4 288.4L432.0 289.0L434.3 290.6L436.1 293.0L437.4 295.9Z" fill="#830d00"/><path d="M458.7 298.5L436.5 292.8L433.0 306.5L455.0 312.5Z" fill="url(#g11)"/><path d="M641.5 302.6L634.0 294.2L623.4 303.5L630.6 312.1Z" fill="url(#g55)"/><path d="M683.8 306.2L681.7 297.5L667.9 300.6L669.6 309.4Z" fill="url(#g59)"/><path d="M462.1 299.6L439.6 294.0L436.1 307.7L458.5 313.7Z" fill="url(#g9)"/><path d="M447.2 299.6L424.1 294.2L420.9 308.0L443.8 313.7Z" fill="url(#g3)"/><path d="M533.5 302.4L533.0 305.6L531.6 308.3L529.4 310.2L526.9 310.8L524.7 310.1L523.1 308.1L522.4 305.2L522.9 302.0L524.4 299.3L526.6 297.4L529.0 296.8L531.3 297.6L532.9 299.6Z" fill="#6c0b00"/><path d="M582.0 301.8L567.1 294.1L560.5 306.7L575.2 314.7Z" fill="url(#g49)"/><path d="M467.4 300.3L445.0 294.5L441.4 308.2L463.7 314.4Z" fill="url(#g7)"/><path d="M451.1 300.6L427.6 295.2L424.4 309.1L447.8 314.7Z" fill="url(#g1)"/><path d="M472.0 301.3L450.9 295.1L446.8 308.7L467.8 315.2Z" fill="url(#g15)"/><path d="M759.0 314.3L766.3 306.2L755.8 296.6L748.2 304.4Z" fill="url(#g65)"/><path d="M470.4 301.6L447.7 295.8L444.1 309.6L466.8 315.7Z" fill="url(#g5)"/><path d="M730.5 313.5L734.7 304.6L721.9 298.3L717.3 307.0Z" fill="url(#g63)"/><path d="M708.4 311.7L709.6 303.0L695.5 300.9L693.8 309.4Z" fill="url(#g61)"/><path d="M551.8 303.1L532.7 295.9L527.6 309.2L546.6 316.8Z" fill="url(#g87)"/><path d="M551.8 303.1L532.7 295.9L527.6 309.2L546.6 316.8Z" fill="url(#g89)"/><path d="M475.3 302.4L453.0 296.4L449.3 310.2L471.4 316.5Z" fill="url(#g13)"/><path d="M568.9 303.5L552.3 296.1L546.4 309.2L562.9 316.9Z" fill="url(#g47)"/><path d="M550.8 303.3L531.3 296.1L526.3 309.5L545.6 317.0Z" fill="url(#g85)"/><path d="M550.2 303.4L530.7 296.3L525.7 309.7L545.1 317.2Z" fill="url(#g83)"/><path d="M550.0 303.4L530.4 296.3L525.5 309.7L544.9 317.2Z" fill="url(#g79)"/><path d="M550.0 303.4L530.4 296.3L525.4 309.7L544.9 317.2Z" fill="url(#g81)"/><path d="M550.3 303.2L529.2 296.4L524.8 310.0L545.7 317.2Z" fill="url(#g93)"/><path d="M552.6 303.8L534.3 297.2L529.4 310.7L547.6 317.6Z" fill="url(#g91)"/><path d="M478.5 303.6L455.5 297.7L451.9 311.6L474.9 317.9Z" fill="url(#g11)"/><path d="M474.1 306.3L473.7 309.5L472.2 312.3L470.0 314.3L467.5 315.0L465.1 314.2L463.4 312.2L462.7 309.3L463.1 306.1L464.6 303.3L466.8 301.3L469.3 300.7L471.7 301.4L473.4 303.5Z" fill="#6d0b00"/><path d="M664.5 309.4L659.0 300.2L646.5 307.3L651.5 316.7Z" fill="url(#g57)"/><path d="M629.5 307.4L618.8 298.7L609.5 309.7L619.9 318.8Z" fill="url(#g53)"/><path d="M467.9 304.5L443.9 298.9L440.6 312.9L464.5 318.8Z" fill="url(#g3)"/><path d="M482.3 304.8L458.9 298.8L455.4 312.8L478.6 319.1Z" fill="url(#g9)"/><path d="M608.4 307.1L594.6 298.6L586.9 310.7L600.4 319.6Z" fill="url(#g51)"/><path d="M803.5 311.2L802.7 314.7L801.0 317.9L798.5 320.5L795.5 322.2L792.0 323.1L788.3 323.0L784.8 321.9L781.5 320.0L778.8 317.3L776.8 314.1L775.7 310.5L775.5 306.9L776.2 303.3L777.9 300.2L780.3 297.6L783.3 295.8L786.8 294.8L790.5 294.9L794.1 295.9L797.4 297.8L800.2 300.5L802.2 303.8L803.3 307.4Z" fill="#f01800"/><path d="M806.6 314.2L807.3 310.6L809.0 307.4L811.4 304.9L814.4 303.1L817.9 302.3L859.2 298.2L831.5 326.7L829.0 329.2L826.0 330.9L822.5 331.6L818.9 331.3L815.4 330.1L812.3 328.0L809.7 325.1L807.8 321.7L806.7 318.0Z" fill="url(#g70)"/><path d="M487.4 305.5L464.2 299.5L460.5 313.5L483.7 319.8Z" fill="url(#g7)"/><path d="M472.2 305.4L447.8 299.8L444.5 313.9L468.8 319.8Z" fill="url(#g1)"/><path d="M552.2 308.3L551.7 311.5L550.2 314.3L547.9 316.2L545.4 316.9L543.1 316.1L541.5 314.1L540.8 311.1L541.3 307.9L542.9 305.1L545.1 303.1L547.7 302.5L550.0 303.4L551.6 305.4Z" fill="#6c0b00"/><path d="M648.4 310.1L640.4 301.3L629.5 310.8L637.1 319.9Z" fill="url(#g55)"/><path d="M490.8 306.8L467.2 300.8L463.6 314.8L487.1 321.2Z" fill="url(#g5)"/><path d="M685.8 314.1L683.5 304.9L669.3 308.1L671.1 317.4Z" fill="url(#g59)"/><path d="M595.6 308.8L579.9 300.7L573.1 313.5L588.6 322.0Z" fill="url(#g49)"/><path d="M495.3 307.8L472.2 301.6L468.3 315.6L491.4 322.2Z" fill="url(#g13)"/><path d="M752.5 321.6L760.1 313.1L749.4 303.2L741.4 311.4Z" fill="url(#g65)"/><path d="M782.6 322.9L794.5 314.4L786.0 302.5L773.8 310.7Z" fill="url(#g67)"/><path d="M569.2 309.6L549.1 302.1L543.9 315.7L563.8 323.7Z" fill="url(#g89)"/><path d="M569.2 309.7L549.1 302.1L543.9 315.7L563.8 323.7Z" fill="url(#g87)"/><path d="M568.4 309.8L548.0 302.3L542.9 316.0L563.1 323.9Z" fill="url(#g85)"/><path d="M583.9 310.2L566.5 302.4L560.5 315.7L577.7 323.9Z" fill="url(#g47)"/><path d="M499.2 308.9L475.3 302.8L471.6 317.0L495.5 323.4Z" fill="url(#g11)"/><path d="M568.0 309.9L547.5 302.4L542.4 316.1L562.8 324.0Z" fill="url(#g83)"/><path d="M567.9 309.9L547.3 302.4L542.2 316.1L562.6 324.0Z" fill="url(#g79)"/><path d="M567.8 309.9L547.2 302.4L542.2 316.2L562.6 324.0Z" fill="url(#g81)"/><path d="M569.0 309.6L549.8 302.8L544.8 316.5L563.8 323.8Z" fill="url(#g91)"/><path d="M726.6 321.6L731.1 312.2L717.9 305.7L713.0 314.8Z" fill="url(#g63)"/><path d="M707.4 319.5L708.6 310.3L694.1 308.1L692.4 317.2Z" fill="url(#g61)"/><path d="M489.4 309.5L464.5 303.7L461.1 318.0L485.9 324.2Z" fill="url(#g3)"/><path d="M503.3 310.1L479.0 303.9L475.3 318.2L499.5 324.7Z" fill="url(#g9)"/><path d="M824.5 318.9L825.3 315.3L827.0 312.1L829.4 309.5L832.4 307.8L835.8 307.1L883.4 304.0L846.5 334.8L843.4 336.4L840.0 337.0L836.5 336.7L833.1 335.3L830.0 333.1L827.4 330.1L825.6 326.6L824.6 322.8Z" fill="url(#g72)"/><path d="M497.2 312.9L496.8 316.2L495.4 319.1L493.3 321.1L490.8 321.9L488.5 321.2L486.9 319.2L486.2 316.2L486.6 312.9L488.0 310.0L490.2 307.9L492.7 307.2L494.9 308.0L496.5 310.0Z" fill="#6a0a00"/><path d="M494.0 310.4L468.7 304.6L465.4 319.0L490.6 325.1Z" fill="url(#g1)"/><path d="M508.3 311.0L484.2 304.7L480.4 319.0L504.5 325.6Z" fill="url(#g7)"/><path d="M570.8 314.8L570.3 318.0L568.7 320.9L566.3 322.8L563.7 323.5L561.3 322.6L559.6 320.5L558.9 317.5L559.5 314.3L561.1 311.4L563.5 309.4L566.1 308.8L568.5 309.7L570.2 311.8Z" fill="#6d0b00"/><path d="M512.0 312.2L487.5 305.9L483.8 320.3L508.2 326.9Z" fill="url(#g5)"/><path d="M639.2 315.4L627.9 306.2L618.4 317.5L629.3 327.1Z" fill="url(#g53)"/><path d="M669.5 317.8L663.7 308.0L650.8 315.3L656.1 325.3Z" fill="url(#g57)"/><path d="M620.9 314.9L606.4 305.9L598.5 318.4L612.7 327.8Z" fill="url(#g51)"/><path d="M834.1 319.8L833.3 323.5L831.5 326.7L829.0 329.2L826.0 330.9L822.5 331.6L818.9 331.3L815.4 330.1L812.3 328.0L809.7 325.1L807.8 321.7L806.7 318.0L806.6 314.2L807.3 310.6L809.0 307.4L811.4 304.9L814.4 303.1L817.9 302.3L821.5 302.5L825.1 303.7L828.3 305.8L831.0 308.7L832.9 312.2L834.0 316.0Z" fill="#e81700"/><path d="M655.6 318.1L647.2 308.8L636.0 318.6L644.0 328.2Z" fill="url(#g55)"/><path d="M609.9 316.1L593.3 307.6L586.3 320.8L602.7 329.7Z" fill="url(#g49)"/><path d="M520.8 314.5L495.9 308.1L492.1 322.5L516.9 329.3Z" fill="url(#g11)"/><path d="M511.7 314.8L485.9 308.7L482.4 323.3L508.1 329.7Z" fill="url(#g3)"/><path d="M687.9 322.4L685.4 312.7L670.8 316.0L672.7 325.8Z" fill="url(#g59)"/><path d="M745.6 329.2L753.7 320.3L742.6 310.2L734.2 318.8Z" fill="url(#g65)"/><path d="M587.5 316.5L566.4 308.6L561.0 322.6L581.9 330.9Z" fill="url(#g89)"/><path d="M587.5 316.5L566.4 308.6L561.0 322.6L581.9 330.9Z" fill="url(#g87)"/><path d="M463.9 309.9L530.4 311.3L533.0 311.9L535.3 313.6L537.0 316.1L538.2 319.3L538.6 323.0L538.4 326.9L537.4 330.8L535.8 334.4L533.7 337.5L531.2 339.9L528.5 341.4L525.7 341.9L523.1 341.3Z" fill="url(#g78)"/><path d="M525.1 315.6L499.9 309.2L496.1 323.7L521.3 330.5Z" fill="url(#g9)"/><path d="M587.0 316.6L565.5 308.7L560.3 322.8L581.5 331.0Z" fill="url(#g85)"/><path d="M586.7 316.7L565.1 308.8L559.9 322.9L581.3 331.1Z" fill="url(#g83)"/><path d="M586.6 316.7L564.9 308.8L559.7 322.9L581.2 331.1Z" fill="url(#g79)"/><path d="M586.5 316.7L564.9 308.9L559.7 322.9L581.1 331.2Z" fill="url(#g81)"/><path d="M771.8 330.7L784.3 321.7L775.6 309.5L762.8 318.1Z" fill="url(#g67)"/><path d="M599.7 317.1L581.4 309.0L575.2 322.7L593.3 331.2Z" fill="url(#g47)"/><path d="M516.7 315.6L490.5 309.6L487.1 324.3L513.2 330.6Z" fill="url(#g1)"/><path d="M808.6 331.2L824.7 323.2L818.0 309.7L801.7 317.3Z" fill="url(#g69)"/><path d="M530.1 316.6L504.9 310.1L501.1 324.6L526.1 331.5Z" fill="url(#g7)"/><path d="M522.4 319.7L522.0 323.0L520.6 326.0L518.5 328.1L516.1 328.9L513.9 328.2L512.3 326.2L511.7 323.2L512.1 319.8L513.5 316.7L515.7 314.6L518.1 313.9L520.2 314.6L521.8 316.7Z" fill="#670a00"/><path d="M722.5 330.1L727.3 320.2L713.7 313.5L708.5 323.2Z" fill="url(#g63)"/><path d="M706.3 327.8L707.6 318.1L692.6 315.8L690.8 325.4Z" fill="url(#g61)"/><path d="M534.1 317.9L508.6 311.3L504.8 326.0L530.2 332.9Z" fill="url(#g5)"/><path d="M851.6 325.3L850.7 329.1L849.0 332.3L846.5 334.8L843.4 336.4L840.0 337.0L836.5 336.7L833.1 335.3L830.0 333.1L827.4 330.1L825.6 326.6L824.6 322.8L824.5 318.9L825.3 315.3L827.0 312.1L829.4 309.5L832.4 307.8L835.8 307.1L839.3 307.4L842.8 308.7L846.0 310.9L848.6 313.9L850.5 317.5L851.5 321.4Z" fill="#e31600"/><path d="M589.3 321.7L588.7 325.0L587.1 328.0L584.6 330.0L581.9 330.6L579.4 329.8L577.7 327.6L577.1 324.6L577.7 321.2L579.4 318.3L581.8 316.3L584.6 315.7L587.0 316.5L588.7 318.7Z" fill="#6d0b00"/><path d="M534.9 320.2L508.0 313.9L504.5 328.8L531.2 335.4Z" fill="url(#g3)"/><path d="M634.3 323.1L618.9 313.6L610.7 326.4L625.8 336.4Z" fill="url(#g51)"/><path d="M649.6 323.9L637.6 314.1L627.7 325.7L639.4 335.9Z" fill="url(#g53)"/><path d="M823.5 336.3L842.1 328.7L836.3 314.5L817.5 321.8Z" fill="url(#g71)"/><path d="M674.8 326.7L668.6 316.4L655.3 323.9L661.0 334.5Z" fill="url(#g57)"/><path d="M540.3 321.0L513.0 314.8L509.6 329.7L536.8 336.3Z" fill="url(#g1)"/><path d="M547.9 321.3L521.6 314.7L517.8 329.5L544.0 336.5Z" fill="url(#g9)"/><path d="M625.0 323.9L607.5 314.9L600.3 328.4L617.6 337.9Z" fill="url(#g49)"/><path d="M538.6 323.0L538.4 326.9L537.4 330.8L535.8 334.4L533.7 337.5L531.2 339.9L528.5 341.4L525.7 341.9L523.1 341.3L520.8 339.7L519.0 337.3L517.8 334.1L517.3 330.3L517.5 326.3L518.5 322.3L520.1 318.6L522.3 315.4L524.9 313.1L527.6 311.7L530.4 311.3L533.0 311.9L535.3 313.6L537.0 316.1L538.2 319.3Z" fill="#c51300"/><path d="M552.7 322.5L526.5 315.7L522.6 330.6L548.7 337.7Z" fill="url(#g7)"/><path d="M663.3 326.5L654.3 316.7L642.8 326.7L651.3 337.0Z" fill="url(#g55)"/><path d="M606.7 323.8L584.5 315.4L578.9 329.7L601.0 338.5Z" fill="url(#g87)"/><path d="M606.5 323.8L583.9 315.5L578.5 329.9L600.9 338.6Z" fill="url(#g85)"/><path d="M606.3 323.8L583.6 315.6L578.2 330.0L600.7 338.6Z" fill="url(#g83)"/><path d="M606.2 323.8L583.5 315.6L578.1 330.0L600.7 338.7Z" fill="url(#g79)"/><path d="M606.2 323.8L583.5 315.6L578.1 330.0L600.7 338.7Z" fill="url(#g81)"/><path d="M794.0 338.4L810.9 330.0L804.1 316.2L787.0 324.2Z" fill="url(#g69)"/><path d="M738.3 337.3L746.8 327.9L735.5 317.5L726.6 326.6Z" fill="url(#g65)"/><path d="M616.3 324.5L597.0 315.9L590.7 329.9L609.8 338.9Z" fill="url(#g47)"/><path d="M690.1 331.3L687.5 320.9L672.4 324.3L674.5 334.7Z" fill="url(#g59)"/><path d="M760.3 339.0L773.6 329.4L764.6 316.9L751.1 326.0Z" fill="url(#g67)"/><path d="M557.2 323.8L530.5 317.0L526.7 331.9L553.2 339.1Z" fill="url(#g5)"/><path d="M549.4 326.6L548.9 330.0L547.5 333.1L545.4 335.3L543.1 336.1L540.9 335.5L539.4 333.4L538.8 330.3L539.2 326.9L540.7 323.7L542.8 321.6L545.1 320.8L547.3 321.5L548.8 323.6Z" fill="#650a00"/><path d="M553.0 324.9L528.2 318.6L524.3 333.7L549.0 340.3Z" fill="url(#g77)"/><path d="M827.6 335.1L828.5 331.2L830.3 327.9L832.9 325.2L836.2 323.4L839.9 322.6L885.0 317.2L854.5 349.1L851.7 351.7L848.4 353.4L844.7 354.1L840.8 353.7L837.0 352.3L833.6 349.9L830.9 346.8L828.8 343.1L827.7 339.1Z" fill="url(#g74)"/><path d="M705.1 336.6L706.5 326.3L691.1 324.0L689.2 334.1Z" fill="url(#g61)"/><path d="M559.0 325.9L531.1 319.4L527.5 334.5L555.3 341.4Z" fill="url(#g3)"/><path d="M718.1 339.2L723.2 328.7L709.3 321.7L703.7 332.0Z" fill="url(#g63)"/><path d="M608.4 329.1L607.8 332.5L606.1 335.5L603.6 337.5L600.9 338.2L598.4 337.4L596.6 335.2L596.0 332.0L596.6 328.6L598.4 325.6L600.9 323.5L603.6 322.9L606.1 323.8L607.8 326.0Z" fill="#6c0b00"/><path d="M564.9 326.7L536.5 320.2L532.9 335.4L561.2 342.2Z" fill="url(#g1)"/><path d="M806.7 343.2L826.2 335.2L820.2 320.7L800.6 328.3Z" fill="url(#g71)"/><path d="M576.4 328.7L549.1 321.5L545.0 336.7L572.3 344.2Z" fill="url(#g7)"/><path d="M648.5 331.8L632.1 321.7L623.7 334.9L639.7 345.5Z" fill="url(#g51)"/><path d="M660.6 332.9L647.8 322.5L637.7 334.4L650.0 345.3Z" fill="url(#g53)"/><path d="M581.2 329.9L553.4 322.8L549.4 338.1L577.1 345.5Z" fill="url(#g5)"/><path d="M778.7 346.0L796.5 337.2L789.5 323.0L771.5 331.4Z" fill="url(#g69)"/><path d="M641.0 332.1L622.4 322.6L615.1 336.5L633.3 346.5Z" fill="url(#g49)"/><path d="M627.0 331.4L603.3 322.6L597.7 337.4L621.2 346.5Z" fill="url(#g85)"/><path d="M627.0 331.3L603.1 322.7L597.6 337.4L621.2 346.5Z" fill="url(#g83)"/><path d="M626.9 331.4L603.0 322.7L597.5 337.4L621.2 346.6Z" fill="url(#g79)"/><path d="M626.9 331.4L603.0 322.7L597.5 337.4L621.2 346.6Z" fill="url(#g81)"/><path d="M680.5 336.3L673.9 325.2L660.2 333.0L666.3 344.3Z" fill="url(#g57)"/><path d="M575.0 330.4L549.2 323.9L545.3 339.3L570.9 346.1Z" fill="url(#g77)"/><path d="M633.9 332.3L613.5 323.2L607.0 337.6L627.1 347.1Z" fill="url(#g47)"/><path d="M730.6 345.9L739.6 335.9L727.9 325.2L718.6 334.8Z" fill="url(#g65)"/><path d="M671.5 335.5L662.0 325.0L650.0 335.4L659.1 346.3Z" fill="url(#g55)"/><path d="M748.2 347.7L762.2 337.6L753.0 324.7L738.7 334.3Z" fill="url(#g67)"/><path d="M577.7 334.0L577.2 337.5L575.8 340.7L573.7 342.9L571.3 343.8L569.2 343.1L567.6 341.0L567.1 337.8L567.5 334.3L569.0 331.1L571.1 328.9L573.5 328.0L575.7 328.8L577.2 330.9Z" fill="#640a00"/><path d="M584.1 331.8L555.1 325.0L551.4 340.5L580.3 347.7Z" fill="url(#g3)"/><path d="M692.4 340.7L689.7 329.7L674.2 333.2L676.3 344.3Z" fill="url(#g59)"/><path d="M590.4 332.5L560.9 325.7L557.2 341.3L586.6 348.4Z" fill="url(#g1)"/><path d="M857.3 341.8L856.4 345.7L854.5 349.1L851.7 351.7L848.4 353.4L844.7 354.1L840.8 353.7L837.0 352.3L833.6 349.9L830.9 346.8L828.8 343.1L827.7 339.1L827.6 335.1L828.5 331.2L830.3 327.9L832.9 325.2L836.2 323.4L839.9 322.6L843.8 322.9L847.7 324.3L851.2 326.6L854.0 329.8L856.1 333.6L857.2 337.7Z" fill="#e71700"/><path d="M628.6 336.7L628.0 340.2L626.2 343.3L623.7 345.4L621.0 346.1L618.5 345.3L616.8 343.1L616.2 339.9L616.9 336.4L618.6 333.3L621.1 331.1L623.9 330.4L626.4 331.3L628.0 333.6Z" fill="#6a0a00"/><path d="M789.1 350.3L809.5 342.0L803.4 327.2L782.8 335.1Z" fill="url(#g71)"/><path d="M703.9 346.0L705.3 335.0L689.5 332.6L687.4 343.4Z" fill="url(#g61)"/><path d="M811.1 345.2L811.9 341.2L813.8 337.8L816.4 335.1L819.7 333.2L823.5 332.5L872.3 326.4L838.4 360.0L835.7 362.6L832.3 364.4L828.5 365.0L824.5 364.5L820.7 363.0L817.3 360.6L814.4 357.3L812.4 353.5L811.2 349.4Z" fill="url(#g76)"/><path d="M713.5 348.9L718.9 337.7L704.5 330.5L698.6 341.5Z" fill="url(#g63)"/><path d="M606.3 336.3L577.3 328.9L573.2 344.5L602.1 352.3Z" fill="url(#g5)"/><path d="M597.8 336.2L571.1 329.5L567.0 345.1L593.7 352.2Z" fill="url(#g77)"/><path d="M762.7 353.9L781.3 344.7L774.1 330.2L755.3 339.0Z" fill="url(#g69)"/><path d="M829.5 354.1L847.3 345.0L839.8 330.6L821.7 339.3Z" fill="url(#g73)"/><path d="M648.7 339.3L623.6 330.1L617.9 345.3L642.9 354.9Z" fill="url(#g83)"/><path d="M648.7 339.3L623.5 330.1L617.9 345.3L642.9 354.9Z" fill="url(#g79)"/><path d="M648.7 339.3L623.5 330.1L617.8 345.3L642.8 354.9Z" fill="url(#g81)"/><path d="M610.3 338.0L580.1 330.9L576.3 346.6L606.4 354.1Z" fill="url(#g3)"/><path d="M663.5 341.1L646.1 330.4L637.4 344.0L654.5 355.2Z" fill="url(#g51)"/><path d="M657.9 340.8L638.3 330.7L630.7 345.0L650.0 355.6Z" fill="url(#g49)"/><path d="M617.0 338.6L586.2 331.6L582.5 347.4L613.1 354.8Z" fill="url(#g1)"/><path d="M652.4 340.5L630.9 330.9L624.1 345.7L645.4 355.7Z" fill="url(#g47)"/><path d="M672.3 342.6L658.7 331.4L648.2 343.7L661.4 355.3Z" fill="url(#g53)"/><path d="M607.4 341.8L606.8 345.3L605.4 348.6L603.3 350.9L601.0 351.8L598.9 351.2L597.4 349.0L596.9 345.8L597.4 342.2L598.9 338.9L601.0 336.6L603.3 335.7L605.4 336.4L606.9 338.6Z" fill="#620a00"/><path d="M722.4 354.9L732.0 344.3L720.0 333.3L710.1 343.5Z" fill="url(#g65)"/><path d="M686.6 346.5L679.6 334.7L665.4 342.7L671.9 354.8Z" fill="url(#g57)"/><path d="M735.4 356.9L750.2 346.2L740.8 333.0L725.7 343.2Z" fill="url(#g67)"/><path d="M680.2 345.1L670.0 333.9L657.7 344.6L667.4 356.2Z" fill="url(#g55)"/><path d="M770.6 357.9L792.0 349.1L785.8 334.0L764.3 342.3Z" fill="url(#g71)"/><path d="M650.2 344.7L649.5 348.3L647.7 351.5L645.2 353.7L642.5 354.5L640.0 353.6L638.3 351.4L637.8 348.1L638.5 344.5L640.2 341.3L642.8 339.1L645.5 338.4L648.0 339.2L649.6 341.5Z" fill="#690a00"/><path d="M694.9 350.8L692.0 339.1L676.0 342.6L678.2 354.5Z" fill="url(#g59)"/><path d="M621.6 342.2L593.7 335.2L589.6 351.1L617.4 358.5Z" fill="url(#g77)"/><path d="M702.5 355.9L704.1 344.3L687.7 341.7L685.6 353.3Z" fill="url(#g61)"/><path d="M841.3 352.5L840.3 356.5L838.4 360.0L835.7 362.6L832.3 364.4L828.5 365.0L824.5 364.5L820.7 363.0L817.3 360.6L814.4 357.3L812.4 353.5L811.2 349.4L811.1 345.2L811.9 341.2L813.8 337.8L816.4 335.1L819.7 333.2L823.5 332.5L827.5 332.8L831.4 334.3L834.9 336.8L837.9 340.1L840.0 344.0L841.2 348.2Z" fill="#e51600"/><path d="M637.6 344.4L606.1 337.0L602.2 353.1L633.6 360.9Z" fill="url(#g3)"/><path d="M708.6 359.2L714.3 347.2L699.5 339.9L693.2 351.5Z" fill="url(#g63)"/><path d="M644.7 345.0L612.6 337.6L608.8 353.8L640.8 361.5Z" fill="url(#g1)"/><path d="M745.7 362.3L765.4 352.6L758.0 337.7L738.2 347.0Z" fill="url(#g69)"/><path d="M813.3 362.3L832.0 352.8L824.3 338.0L805.4 347.1Z" fill="url(#g73)"/><path d="M671.8 347.6L645.2 338.0L639.3 353.5L665.7 363.7Z" fill="url(#g79)"/><path d="M671.8 347.7L645.1 338.0L639.3 353.5L665.7 363.7Z" fill="url(#g81)"/><path d="M671.9 349.1L649.2 339.1L642.3 354.2L664.7 364.8Z" fill="url(#g47)"/><path d="M675.8 350.0L655.0 339.3L647.2 354.0L667.7 365.3Z" fill="url(#g49)"/><path d="M638.2 349.9L637.7 353.6L636.3 357.0L634.4 359.4L632.2 360.4L630.3 359.8L629.0 357.6L628.5 354.4L629.0 350.6L630.5 347.2L632.4 344.8L634.6 343.8L636.5 344.5L637.8 346.7Z" fill="#5e0900"/><path d="M679.6 351.0L661.0 339.6L652.0 353.6L670.2 365.6Z" fill="url(#g51)"/><path d="M812.2 365.1L831.1 355.6L823.5 340.7L804.4 349.7Z" fill="url(#g75)"/><path d="M646.4 348.5L617.4 341.2L613.1 357.4L642.0 365.1Z" fill="url(#g77)"/><path d="M713.8 364.5L723.9 353.3L711.6 342.0L701.0 352.8Z" fill="url(#g65)"/><path d="M684.9 352.8L670.4 340.9L659.5 353.6L673.6 366.0Z" fill="url(#g53)"/><path d="M751.2 365.8L773.7 356.6L767.4 341.1L744.7 349.8Z" fill="url(#g71)"/><path d="M721.8 366.7L737.5 355.4L727.8 341.7L711.8 352.5Z" fill="url(#g67)"/><path d="M689.4 355.3L678.6 343.4L665.9 354.4L676.2 366.7Z" fill="url(#g55)"/><path d="M673.0 353.2L672.3 356.8L670.5 360.1L668.0 362.4L665.2 363.2L662.8 362.4L661.1 360.1L660.6 356.8L661.3 353.1L663.1 349.7L665.7 347.5L668.5 346.7L670.9 347.6L672.5 349.9Z" fill="#680a00"/><path d="M693.1 357.4L685.6 344.8L670.9 353.0L677.8 366.0Z" fill="url(#g57)"/><path d="M673.6 351.6L640.2 343.9L636.3 360.4L669.6 368.5Z" fill="url(#g1)"/><path d="M697.6 361.6L694.5 349.0L677.9 352.7L680.3 365.3Z" fill="url(#g59)"/><path d="M727.8 371.2L748.6 360.9L741.1 345.6L720.1 355.4Z" fill="url(#g69)"/><path d="M796.2 371.1L816.0 361.0L808.1 345.8L788.1 355.4Z" fill="url(#g73)"/><path d="M701.1 366.6L702.8 354.2L685.9 351.5L683.6 363.8Z" fill="url(#g61)"/><path d="M696.1 356.5L668.0 346.3L662.0 362.2L689.9 373.0Z" fill="url(#g79)"/><path d="M672.2 355.0L641.9 347.4L637.6 364.0L667.7 372.0Z" fill="url(#g77)"/><path d="M673.8 357.2L673.3 360.9L671.9 364.4L670.0 366.9L668.0 368.0L666.2 367.4L664.9 365.2L664.6 361.9L665.1 358.1L666.5 354.5L668.4 352.0L670.5 351.0L672.3 351.7L673.5 353.9Z" fill="#5b0900"/><path d="M703.3 370.3L709.4 357.5L694.1 349.8L687.4 362.3Z" fill="url(#g63)"/><path d="M795.1 373.6L815.0 363.7L807.2 348.3L787.1 357.8Z" fill="url(#g75)"/><path d="M692.7 358.3L668.6 347.6L661.4 363.2L685.2 374.4Z" fill="url(#g47)"/><path d="M730.9 374.1L754.5 364.5L748.0 348.5L724.3 357.7Z" fill="url(#g71)"/><path d="M694.9 359.9L672.8 348.5L664.7 363.6L686.5 375.5Z" fill="url(#g49)"/><path d="M704.6 374.7L715.3 362.8L702.7 351.1L691.5 362.6Z" fill="url(#g65)"/><path d="M696.7 361.6L676.9 349.4L667.6 363.9L687.0 376.7Z" fill="url(#g51)"/><path d="M707.3 377.2L724.1 365.1L714.1 351.0L697.0 362.5Z" fill="url(#g67)"/><path d="M698.3 363.8L682.7 351.1L671.5 364.2L686.6 377.4Z" fill="url(#g53)"/><path d="M697.2 362.1L696.5 365.9L694.6 369.2L692.1 371.6L689.3 372.5L686.8 371.6L685.2 369.3L684.7 365.9L685.4 362.1L687.3 358.7L689.9 356.3L692.7 355.5L695.2 356.4L696.8 358.7Z" fill="#660a00"/><path d="M699.4 366.2L687.8 353.5L674.7 364.9L685.7 378.0Z" fill="url(#g55)"/><path d="M694.1 363.9L693.2 367.6L691.2 371.0L688.4 373.2L685.3 374.0L682.6 373.1L680.8 370.7L680.2 367.2L681.0 363.4L683.1 360.1L685.9 357.8L689.0 357.1L691.7 358.0L693.5 360.5Z" fill="#6b0a00"/><path d="M699.1 361.8L667.6 353.9L663.1 370.8L694.5 379.2Z" fill="url(#g77)"/><path d="M700.1 369.2L692.0 355.6L676.8 364.1L684.3 378.0Z" fill="url(#g57)"/><path d="M778.2 380.2L799.1 369.6L791.0 354.0L769.9 364.2Z" fill="url(#g73)"/><path d="M696.4 365.4L695.5 369.1L693.4 372.4L690.4 374.6L687.1 375.3L684.3 374.3L682.3 371.8L681.7 368.3L682.6 364.6L684.7 361.2L687.8 359.0L691.0 358.4L693.9 359.4L695.8 361.9Z" fill="#6e0b00"/><path d="M709.0 380.5L730.9 369.7L723.2 354.0L701.1 364.3Z" fill="url(#g69)"/><path d="M700.4 373.1L697.1 359.7L680.0 363.4L682.6 377.0Z" fill="url(#g59)"/><path d="M698.2 367.0L697.3 370.7L695.0 374.0L691.9 376.1L688.4 376.6L685.3 375.5L683.3 373.0L682.6 369.5L683.5 365.7L685.8 362.5L689.0 360.3L692.5 359.8L695.5 360.9L697.6 363.5Z" fill="#710b00"/><path d="M777.1 382.6L798.1 372.1L790.1 356.4L768.9 366.3Z" fill="url(#g75)"/><path d="M709.5 382.9L734.3 372.7L727.7 356.4L702.7 366.0Z" fill="url(#g71)"/><path d="M699.6 377.9L701.4 364.7L683.9 361.9L681.5 375.1Z" fill="url(#g61)"/><path d="M699.5 368.8L698.6 372.5L696.2 375.6L692.8 377.6L689.1 378.0L685.9 376.8L683.7 374.1L683.0 370.6L683.9 366.8L686.4 363.7L689.8 361.7L693.5 361.3L696.7 362.5L698.9 365.2Z" fill="#740b00"/><path d="M697.6 382.1L704.2 368.4L688.4 360.4L681.2 373.8Z" fill="url(#g63)"/><path d="M700.3 370.5L699.2 374.2L696.7 377.3L693.2 379.2L689.4 379.4L686.0 378.1L683.7 375.3L683.0 371.8L684.0 368.0L686.5 364.9L690.0 363.0L693.9 362.7L697.3 364.1L699.6 366.9Z" fill="#760c00"/><path d="M700.5 372.3L699.5 376.0L696.9 379.0L693.3 380.7L689.3 380.9L685.8 379.4L683.5 376.5L682.7 372.9L683.7 369.2L686.3 366.1L690.0 364.4L693.9 364.2L697.4 365.8L699.8 368.6Z" fill="#780c00"/><path d="M694.8 385.6L706.2 372.9L693.2 360.8L681.3 373.1Z" fill="url(#g65)"/><path d="M727.2 368.9L694.3 360.6L689.7 377.9L722.5 386.7Z" fill="url(#g77)"/><path d="M700.4 374.1L699.3 377.8L696.7 380.7L693.0 382.3L688.9 382.3L685.4 380.6L683.0 377.6L682.2 374.0L683.2 370.3L685.9 367.3L689.6 365.7L693.6 365.7L697.2 367.4L699.6 370.4Z" fill="#790c00"/><path d="M691.9 388.3L709.7 375.4L699.4 360.9L681.2 373.1Z" fill="url(#g67)"/><path d="M699.8 376.0L698.8 379.6L696.1 382.4L692.4 383.9L688.3 383.6L684.8 381.8L682.3 378.7L681.6 375.0L682.6 371.3L685.2 368.5L689.0 367.0L693.0 367.3L696.6 369.1L699.1 372.2Z" fill="#790c00"/><path d="M759.2 390.0L781.2 378.7L773.0 362.7L750.7 373.4Z" fill="url(#g73)"/><path d="M689.0 390.4L712.2 378.9L704.3 362.8L680.9 373.7Z" fill="url(#g69)"/><path d="M699.0 377.8L697.9 381.4L695.3 384.1L691.6 385.4L687.6 385.0L684.0 383.0L681.6 379.8L680.9 376.1L681.9 372.4L684.5 369.7L688.2 368.4L692.2 368.8L695.8 370.8L698.2 374.0Z" fill="#780c00"/><path d="M686.9 392.1L713.1 381.4L706.3 364.6L680.0 374.8Z" fill="url(#g71)"/><path d="M758.1 392.1L780.2 381.1L772.0 364.9L749.7 375.4Z" fill="url(#g75)"/><path d="M697.7 379.7L696.7 383.3L694.1 385.9L690.6 387.0L686.7 386.4L683.2 384.2L680.9 380.9L680.2 377.1L681.2 373.5L683.7 370.9L687.3 369.7L691.2 370.3L694.7 372.4L697.0 375.8Z" fill="#760c00"/><path d="M696.2 381.5L695.2 385.1L692.8 387.6L689.4 388.6L685.7 387.8L682.4 385.4L680.2 382.0L679.6 378.1L680.5 374.5L682.9 372.0L686.3 371.0L690.0 371.8L693.3 374.1L695.5 377.6Z" fill="#730b00"/><path d="M756.5 376.4L722.2 367.7L717.5 385.3L751.7 394.5Z" fill="url(#g77)"/><path d="M694.3 383.4L693.4 386.9L691.2 389.3L688.0 390.1L684.6 389.1L681.7 386.6L679.7 383.1L679.1 379.1L679.9 375.6L682.1 373.2L685.3 372.3L688.7 373.3L691.7 375.8L693.7 379.4Z" fill="#6e0b00"/><path d="M692.6 385.1L691.7 388.6L689.6 390.9L686.6 391.6L683.5 390.6L680.7 387.9L678.8 384.3L678.2 380.3L679.1 376.8L681.1 374.4L684.1 373.7L687.3 374.7L690.1 377.3L692.0 381.0Z" fill="#6b0a00"/><path d="M739.1 400.2L762.4 388.3L753.9 371.9L730.4 383.2Z" fill="url(#g73)"/><path d="M738.0 402.1L761.4 390.5L753.0 373.8L729.4 384.9Z" fill="url(#g75)"/><path d="M787.3 384.1L751.3 375.0L746.5 393.1L782.3 402.7Z" fill="url(#g77)"/><path d="M717.7 411.1L742.4 398.5L733.8 381.5L708.8 393.5Z" fill="url(#g73)"/><path d="M819.4 392.3L781.8 382.7L776.8 401.2L814.3 411.2Z" fill="url(#g77)"/><path d="M716.7 412.8L741.4 400.4L732.9 383.3L707.9 395.0Z" fill="url(#g75)"/><path d="M818.4 398.1L817.6 402.3L816.1 406.2L814.2 409.1L812.2 410.5L810.6 409.9L809.6 407.6L809.5 403.9L810.3 399.7L811.9 395.7L813.8 392.8L815.8 391.5L817.4 392.1L818.3 394.5Z" fill="#530800"/><path d="M695.0 422.7L721.3 409.3L712.4 391.8L685.9 404.6Z" fill="url(#g73)"/><path d="M694.2 424.0L720.4 410.9L711.6 393.3L685.1 405.7Z" fill="url(#g75)"/><path d="M670.9 435.0L698.8 420.8L689.7 402.7L661.5 416.3Z" fill="url(#g73)"/><path d="M670.2 436.0L698.0 422.1L689.1 403.9L661.0 417.1Z" fill="url(#g75)"/><path d="M645.1 448.2L674.9 433.0L665.6 414.3L635.5 428.8Z" fill="url(#g73)"/><path d="M644.7 448.7L674.3 433.9L665.1 415.1L635.2 429.2Z" fill="url(#g75)"/><path d="M617.6 462.2L649.5 446.0L639.9 426.7L607.7 442.1Z" fill="url(#g73)"/><path d="M617.5 462.3L649.1 446.5L639.6 427.1L607.8 442.1Z" fill="url(#g75)"/><path d="M623.5 454.2L622.6 458.3L620.2 460.9L616.8 461.5L613.1 460.1L609.7 456.9L607.4 452.5L606.6 447.8L607.5 443.8L609.8 441.1L613.2 440.4L617.0 441.8L620.4 445.1L622.7 449.5Z" fill="#680a00"/><path d="M623.4 454.3L622.6 458.3L620.2 460.9L616.8 461.5L613.1 460.1L609.8 456.8L607.5 452.5L606.7 447.8L607.5 443.7L609.8 441.1L613.2 440.4L616.9 441.8L620.3 445.1L622.6 449.5Z" fill="#670a00"/><g><rect x="555" y="411" width="58" height="16" fill="#262626"/><rect x="554" y="429" width="58" height="18" fill="#262626"/><rect x="554" y="449" width="55" height="20" fill="#262626"/><rect x="555" y="471" width="50" height="12" fill="#262626"/><rect x="552" y="411" width="1.8" height="66" fill="#5a5a5a"/><rect x="569" y="411" width="1.8" height="66" fill="#5a5a5a"/><rect x="600" y="411" width="1.8" height="66" fill="#5a5a5a"/><rect x="616" y="411" width="1.8" height="66" fill="#5a5a5a"/><polygon points="611.1,480.1 594.4,484.4 570.6,484.4 553.9,480.1 553.9,473.9 570.6,469.6 594.4,469.6 611.1,473.9" fill="#1e1e1e"/><rect x="553.9" y="472" width="57.3" height="5" fill="#3e3e3e"/><polygon points="611.1,475.1 594.4,479.4 570.6,479.4 553.9,475.1 553.9,468.9 570.6,464.6 594.4,464.6 611.1,468.9" fill="#2a2a2a" stroke="#444" stroke-width="0.8"/><polygon points="613.9,459.3 595.5,463.9 569.5,463.9 551.1,459.3 551.1,452.7 569.5,448.1 595.5,448.1 613.9,452.7" fill="#1e1e1e"/><rect x="551.1" y="451" width="62.8" height="5" fill="#3e3e3e"/><polygon points="613.9,454.3 595.5,458.9 569.5,458.9 551.1,454.3 551.1,447.7 569.5,443.1 595.5,443.1 613.9,447.7" fill="#2a2a2a" stroke="#444" stroke-width="0.8"/><polygon points="615.3,437.8 596.1,442.4 568.9,442.4 549.7,437.8 549.7,431.2 568.9,426.6 596.1,426.6 615.3,431.2" fill="#1e1e1e"/><rect x="549.7" y="430" width="65.6" height="4.5" fill="#3e3e3e"/><polygon points="615.3,433.3 596.1,437.9 568.9,437.9 549.7,433.3 549.7,426.7 568.9,422.1 596.1,422.1 615.3,426.7" fill="#2a2a2a" stroke="#444" stroke-width="0.8"/><polygon points="616.2,417.4 596.5,422.3 568.5,422.3 548.8,417.4 548.8,410.6 568.5,405.7 596.5,405.7 616.2,410.6" fill="#1e1e1e"/><rect x="548.8" y="409" width="67.5" height="5" fill="#3e3e3e"/><polygon points="616.2,412.4 596.5,417.3 568.5,417.3 548.8,412.4 548.8,405.6 568.5,400.7 596.5,400.7 616.2,405.6" fill="#2a2a2a" stroke="#444" stroke-width="0.8"/><polygon points="569,419 591,422 609,419 609,423 591,426 569,423" fill="#4a4a4a"/><polygon points="569,440 591,443 609,440 609,444 591,447 569,444" fill="#4a4a4a"/><polygon points="569,461 591,464 609,461 609,465 591,468 569,465" fill="#4a4a4a"/><rect x="568" y="389" width="34" height="14" fill="#333"/><ellipse cx="585" cy="403" rx="20" ry="6" fill="#3a3a3a" stroke="#4c4c4c" stroke-width="1"/><ellipse cx="585" cy="390" rx="17" ry="6.5" fill="#262626"/><path d="M573 397 L581 393 L595 395" stroke="#4a4a4a" stroke-width="1.2" fill="none"/><ellipse cx="622" cy="465" rx="10.5" ry="13.5" transform="rotate(18 622 465)" fill="#262626" stroke="#3c3c3c" stroke-width="2"/><ellipse cx="623" cy="465" rx="6" ry="8.5" transform="rotate(18 623 465)" fill="none" stroke="#505050" stroke-width="1.2"/><circle cx="624" cy="459" r="1" fill="#d02020"/></g><path d="M610.5 556 L611.5999999999999 507" stroke="#1010e8" stroke-width="5.2" stroke-linecap="butt"/><path d="M611 556 L611.5999999999999 508" stroke="#3a3aff" stroke-width="1.6"/><path d="M609.5 555 L597 527" stroke="#7a0a0a" stroke-width="4.2"/><path d="M611 556.5 L556 563" stroke="#10c010" stroke-width="4.6"/><path d="M611 555.5 L556 562" stroke="#30ee30" stroke-width="1.6"/></svg></div>
<div class="r" style="left:1357px;top:704px;width:570px;height:330px;border-radius:7px 7px 0 0;box-shadow:0 0 14px 3px rgba(0,0,0,0.28)"></div>
<div class="r" style="left:1357px;top:704px;width:563px;height:31px;border-radius:7px 7px 0 0;background:linear-gradient(#57534d,#403f3b)"></div>
<div class="r" style="left:1357px;top:735px;width:563px;height:23px;background:#3c3b37;"></div>
<div class="r" style="left:1357px;top:758px;width:563px;height:272px;background:#300a24;"></div>
<div class="t" style="left:1363.50px;top:712.25px;font-size:15px;color:#dfdbd2;font-weight:bold;letter-spacing:0.36px;">/home/kodogyu/catkin_ws/src/turtlebot3/turtlebot3_teleop/launc...</div>
<svg style="left:1855px;top:707px;" width="65" height="24" viewBox="0 0 65 24"><g fill="#6c6964" stroke="#4a4844" stroke-width="1"><circle cx="11.2" cy="12" r="7.8"/><circle cx="31" cy="12" r="7.8"/></g><circle cx="51" cy="12" r="7.8" fill="#e85a2a" stroke="#b8431c" stroke-width="1"/>
      <g stroke="#3c3b37" stroke-width="1.2" fill="none"><path d="M7.5 12.5 H15"/><rect x="27.5" y="9" width="7" height="6"/><path d="M48 9 L54 15 M54 9 L48 15"/></g></svg>
<div class="t" style="left:1363.50px;top:740.45px;font-size:15px;color:#dfdbd2;letter-spacing:0.1px;">File</div>
<div class="t" style="left:1399.60px;top:740.45px;font-size:15px;color:#dfdbd2;letter-spacing:0.1px;">Edit</div>
<div class="t" style="left:1438.20px;top:740.45px;font-size:15px;color:#dfdbd2;letter-spacing:0.1px;">View</div>
<div class="t" style="left:1483.40px;top:740.45px;font-size:15px;color:#dfdbd2;letter-spacing:0.1px;">Search</div>
<div class="t" style="left:1540.40px;top:740.45px;font-size:15px;color:#dfdbd2;letter-spacing:0.1px;">Terminal</div>
<div class="t" style="left:1610.90px;top:740.45px;font-size:15px;color:#dfdbd2;letter-spacing:0.1px;">Help</div>
<div class="t" style="left:1358.30px;top:780.20px;font-size:15px;color:#f2f2f2;font-family:'Liberation Mono', monospace;">space key, s : force stop</div>
<div class="t" style="left:1358.30px;top:816.18px;font-size:15px;color:#f2f2f2;font-family:'Liberation Mono', monospace;">CTRL-C to quit</div>
<div class="t" style="left:1358.30px;top:852.16px;font-size:15px;color:#f2f2f2;font-family:'Liberation Mono', monospace;">currently:      linear vel -0.09         angular vel 0.0</div>
<div class="t" style="left:1358.30px;top:870.15px;font-size:15px;color:#f2f2f2;font-family:'Liberation Mono', monospace;">currently:      linear vel -0.1  angular vel 0.0</div>
<div class="t" style="left:1358.30px;top:888.14px;font-size:15px;color:#f2f2f2;font-family:'Liberation Mono', monospace;">currently:      linear vel -0.11         angular vel 0.0</div>
<div class="t" style="left:1358.30px;top:906.13px;font-size:15px;color:#f2f2f2;font-family:'Liberation Mono', monospace;">currently:      linear vel -0.12         angular vel 0.0</div>
<div class="t" style="left:1358.30px;top:924.12px;font-size:15px;color:#f2f2f2;font-family:'Liberation Mono', monospace;">currently:      linear vel -0.13         angular vel 0.0</div>
<div class="t" style="left:1358.30px;top:942.11px;font-size:15px;color:#f2f2f2;font-family:'Liberation Mono', monospace;">currently:      linear vel -0.14         angular vel 0.0</div>
<div class="t" style="left:1358.30px;top:960.10px;font-size:15px;color:#f2f2f2;font-family:'Liberation Mono', monospace;">currently:      linear vel -0.15         angular vel 0.0</div>
<div class="t" style="left:1358.30px;top:978.09px;font-size:15px;color:#f2f2f2;font-family:'Liberation Mono', monospace;">currently:      linear vel -0.16         angular vel 0.0</div>
<div class="t" style="left:1358.30px;top:996.08px;font-size:15px;color:#f2f2f2;font-family:'Liberation Mono', monospace;">currently:      linear vel 0.0   angular vel 0.0</div>
<div class="r" style="left:1358px;top:1012px;width:9px;height:18px;background:#ffffff;"></div>
<div class="r" style="left:1914px;top:1015px;width:6px;height:15px;background:#e0662e;"></div>
<div class="r" style="left:0px;top:1030px;width:1920px;height:50px;background:linear-gradient(90deg,#233840 0%,#22363f 55%,#1f3042 70%,#1c2a45 84%,#1c2946 100%);"></div>
<svg style="left:18px;top:1044px;" width="28" height="26" viewBox="0 0 28 26"><g fill="#fff"><path d="M2 4.5 L11 3.3 V12 H2Z"/><path d="M12.5 3.1 L22.5 1.8 V12 H12.5Z"/><path d="M2 13.5 H11 V22.2 L2 21Z"/><path d="M12.5 13.5 H22.5 V23.7 L12.5 22.4Z"/></g></svg>
<svg style="left:76px;top:1041px;" width="28" height="30" viewBox="0 0 28 30"><circle cx="17" cy="11.5" r="7.5" fill="none" stroke="#fff" stroke-width="1.5"/><path d="M11.5 17 L4 24.5" stroke="#fff" stroke-width="1.6"/></svg>
<svg style="left:136px;top:1042px;" width="28" height="28" viewBox="0 0 28 28"><rect x="4" y="8" width="12" height="11" fill="none" stroke="#fff" stroke-width="1.4"/><path d="M4 4.5 H16 M4 22.5 H16 M20 3 V25" stroke="#fff" stroke-width="1.3"/><rect x="18.5" y="10" width="3" height="4" fill="#fff"/></svg>
<svg style="left:198px;top:1040px;" width="32" height="32" viewBox="0 0 32 32"><path d="M2 5 H12 L14 8 H30 V29 H2Z" fill="#f2c94c"/><path d="M2 11 H30 V29 H2Z" fill="#ffd865"/><path d="M8 29 V19 H24 V29 H20.5 V23 H11.5 V29Z" fill="#2b8ce0"/></svg>
<svg style="left:259px;top:1040px;" width="32" height="32" viewBox="0 0 32 32"><rect x="2" y="4" width="28" height="24" fill="#000" stroke="#8a8f94" stroke-width="1.2"/><rect x="2.6" y="4.6" width="26.8" height="3" fill="#6b6f73"/><path d="M5 11 H7 M8 11 L12 12 H17" stroke="#bbb" stroke-width="1"/></svg>
<svg style="left:321px;top:1039px;" width="34" height="34" viewBox="0 0 34 34"><circle cx="17" cy="17" r="14" fill="#db4437"/><path d="M17 17 L4.9 24 A14 14 0 0 0 24 29.1Z" fill="#0f9d58"/><path d="M17 17 L24 29.1 A14 14 0 0 0 31 17 Z" fill="#ffcd40"/>
      <path d="M17 3 A14 14 0 0 1 29.1 10 H17Z" fill="#db4437"/><circle cx="17" cy="17" r="6.3" fill="#fff"/><circle cx="17" cy="17" r="5" fill="#4285f4"/></svg>
<div class="r" style="left:370px;top:1030px;width:61px;height:50px;background:#a3662f;"></div>
<div class="r" style="left:370px;top:1077px;width:61px;height:3px;background:#f07a22;"></div>
<svg style="left:385px;top:1039px;" width="32" height="32" viewBox="0 0 32 32"><rect x="1" y="1" width="30" height="30" rx="2" fill="#ffe812"/><ellipse cx="16" cy="15" rx="11" ry="8.5" fill="#3c1e1e"/><path d="M9 21 L8 26 L13 22Z" fill="#3c1e1e"/><text x="16" y="18" font-family="Liberation Sans" font-weight="bold" font-size="8" fill="#ffe812" text-anchor="middle">TALK</text></svg>
<svg style="left:444px;top:1039px;" width="34" height="34" viewBox="0 0 34 34"><path d="M2 12 L5 9.5 L25 27 V32 Z" fill="#6a3db5"/><path d="M2 21 L5 23.5 L25 7 V2 Z" fill="#8a5ad0"/><path d="M24 2 L32 6 V28 L24 32 Z" fill="#b58ef0"/></svg>
<svg style="left:507px;top:1039px;" width="34" height="34" viewBox="0 0 34 34"><path d="M2 12 L5 9.5 L25 27 V32 Z" fill="#1a7fd0"/><path d="M2 21 L5 23.5 L25 7 V2 Z" fill="#2290e2"/><path d="M24 2 L32 6 V28 L24 32 Z" fill="#2aa3f2"/></svg>
<svg style="left:570px;top:1039px;" width="34" height="34" viewBox="0 0 34 34"><circle cx="17" cy="17" r="14" fill="#00979c"/><path d="M7 17 Q7 12 11.5 12 Q14 12 17 17 Q20 22 22.5 22 Q27 22 27 17 Q27 12 22.5 12 Q20 12 17 17 Q14 22 11.5 22 Q7 22 7 17Z" fill="none" stroke="#fff" stroke-width="2.2"/></svg>
<svg style="left:632px;top:1039px;" width="34" height="34" viewBox="0 0 34 34"><circle cx="17" cy="17" r="12" fill="none" stroke="#37b24d" stroke-width="4" stroke-dasharray="60 6 4 6"/></svg>
<div class="r" style="left:685px;top:1077px;width:51px;height:3px;background:#76b9ed;"></div>
<svg style="left:692px;top:1038px;" width="36" height="36" viewBox="0 0 36 36"><g transform="translate(2 3) scale(1.2)"><g fill="none" stroke="#ecb100" stroke-width="3.1" stroke-linecap="round" stroke-linejoin="round">
      <path d="M3.3 11.2 V4.7 H10.2"/><path d="M13.8 4.7 H20.8 V11.2"/><path d="M20.8 16.2 V23.2 H13.8"/>
      <path d="M4.2 5.6 L9.5 10.2 M19.9 5.6 L15.8 9.6 L15.8 17.5 L19.9 22.3 M15.8 9.6 L11.5 9.6"/></g>
      <path d="M7 13.5 L8.2 8.6 L12.2 9.6 Z M12.5 17.8 L16.5 14.8 L17 19.2Z" fill="#ecb100"/></g></svg>
<svg style="left:755px;top:1039px;" width="34" height="34" viewBox="0 0 34 34"><path d="M5 5 H29 V29 H5Z" fill="#ffe21f"/><path d="M29 20 V29 H20Z" fill="#111"/></svg>
<svg style="left:1540px;top:1036px;" width="380" height="44" viewBox="0 0 380 44"><path d="M7 22 L14 15 L21 22" stroke="#fff" stroke-width="1.3" fill="none"/>
      <path d="M34 25 Q32.5 18.5 38.5 17.5 Q41 11 48 13.5 Q54 12.5 54.5 18.5 Q58 19 57.5 25 Z" fill="#e8e8e8"/><path d="M34 25 H57.5" stroke="#bbb" stroke-width="0.8"/>
      <path d="M66 12 V15.5 M69 12 V15.5 M65 15.5 H70 V18 H67.5 V21 H71" stroke="#fff" stroke-width="1.1" fill="none"/><rect x="70.5" y="14.5" width="12.5" height="9.5" fill="none" stroke="#fff" stroke-width="1.2"/><rect x="72.5" y="16.5" width="8.5" height="5.5" fill="#fff"/><rect x="83.5" y="17.5" width="1.5" height="3.5" fill="#fff"/>
      <path d="M94 10.5 V26.5 M94 12.5 H98 V17 H94" stroke="#fff" stroke-width="1.1" fill="none"/><rect x="98" y="13" width="15.5" height="10.5" fill="none" stroke="#fff" stroke-width="1.1"/><path d="M105.5 23.5 V26.5 M100.5 26.5 H110.5" stroke="#fff" stroke-width="1.1"/>
      <path d="M124 15.5 H127.5 L132 11 V26 L127.5 21.5 H124Z" fill="none" stroke="#fff" stroke-width="1.1"/><path d="M135 16 Q137 18.5 135 21 M138 13.5 Q141.5 18.5 138 23.5" stroke="#fff" stroke-width="1.1" fill="none"/><path d="M141 11 Q146 18.5 141 26" stroke="#8a8f99" stroke-width="1.1" fill="none"/>
      <rect x="189.5" y="9.5" width="19" height="19" fill="#fff"/>
      <g stroke="#fff" stroke-width="1.2" fill="none"><ellipse cx="240.4" cy="5.5" rx="5" ry="3.3"/><path d="M240.4 9 V11.5 M233.6 11.8 H247.2"/>
      <path d="M253 2.2 H257 M250 4.3 H260 M248.2 10.2 H262.3 M255.2 10.2 V14.2"/><ellipse cx="255" cy="7" rx="2.8" ry="1.8"/></g>
      <path d="M329 9 H349 V25.7 H339 L334.5 30 V25.7 H329Z" fill="#fff"/><path d="M333 14.2 H345 M333 17.9 H345 M333 21.3 H341" stroke="#1d2a45" stroke-width="1.2"/>
      <circle cx="348.75" cy="28.3" r="9.3" fill="#2a2f3c" stroke="#80848c" stroke-width="1.2"/></svg>
<svg style="left:1729px;top:1045px;" width="20" height="20" viewBox="0 0 20 20"><path d="M5.5 3 H10 M3.5 5.3 H12 M2.5 12 H12" stroke="#000" stroke-width="1.2" fill="none"/><ellipse cx="7.5" cy="8.6" rx="2.6" ry="1.8" fill="none" stroke="#000" stroke-width="1.1"/><path d="M14.5 2.5 V13 M14.5 7.5 H17 M6 14 V18 H16" stroke="#000" stroke-width="1.2" fill="none"/></svg>
<div class="t" style="left:1692.50px;top:1042.55px;font-size:25px;color:#ffffff;">A</div>
<div class="t" style="left:1809.00px;top:1036.29px;font-size:14.6px;color:#ffffff;letter-spacing:-0.2px;">11:56</div>
<div class="t" style="left:1770.50px;top:1059.39px;font-size:14.6px;color:#ffffff;letter-spacing:0.1px;">2019-10-28</div>
<div class="t" style="left:1884.50px;top:1058.45px;font-size:13px;color:#ffffff;font-weight:bold;">4</div>
<div class="r" style="left:1914px;top:1031px;width:1px;height:49px;background:#5a6478;"></div>
</body></html>
